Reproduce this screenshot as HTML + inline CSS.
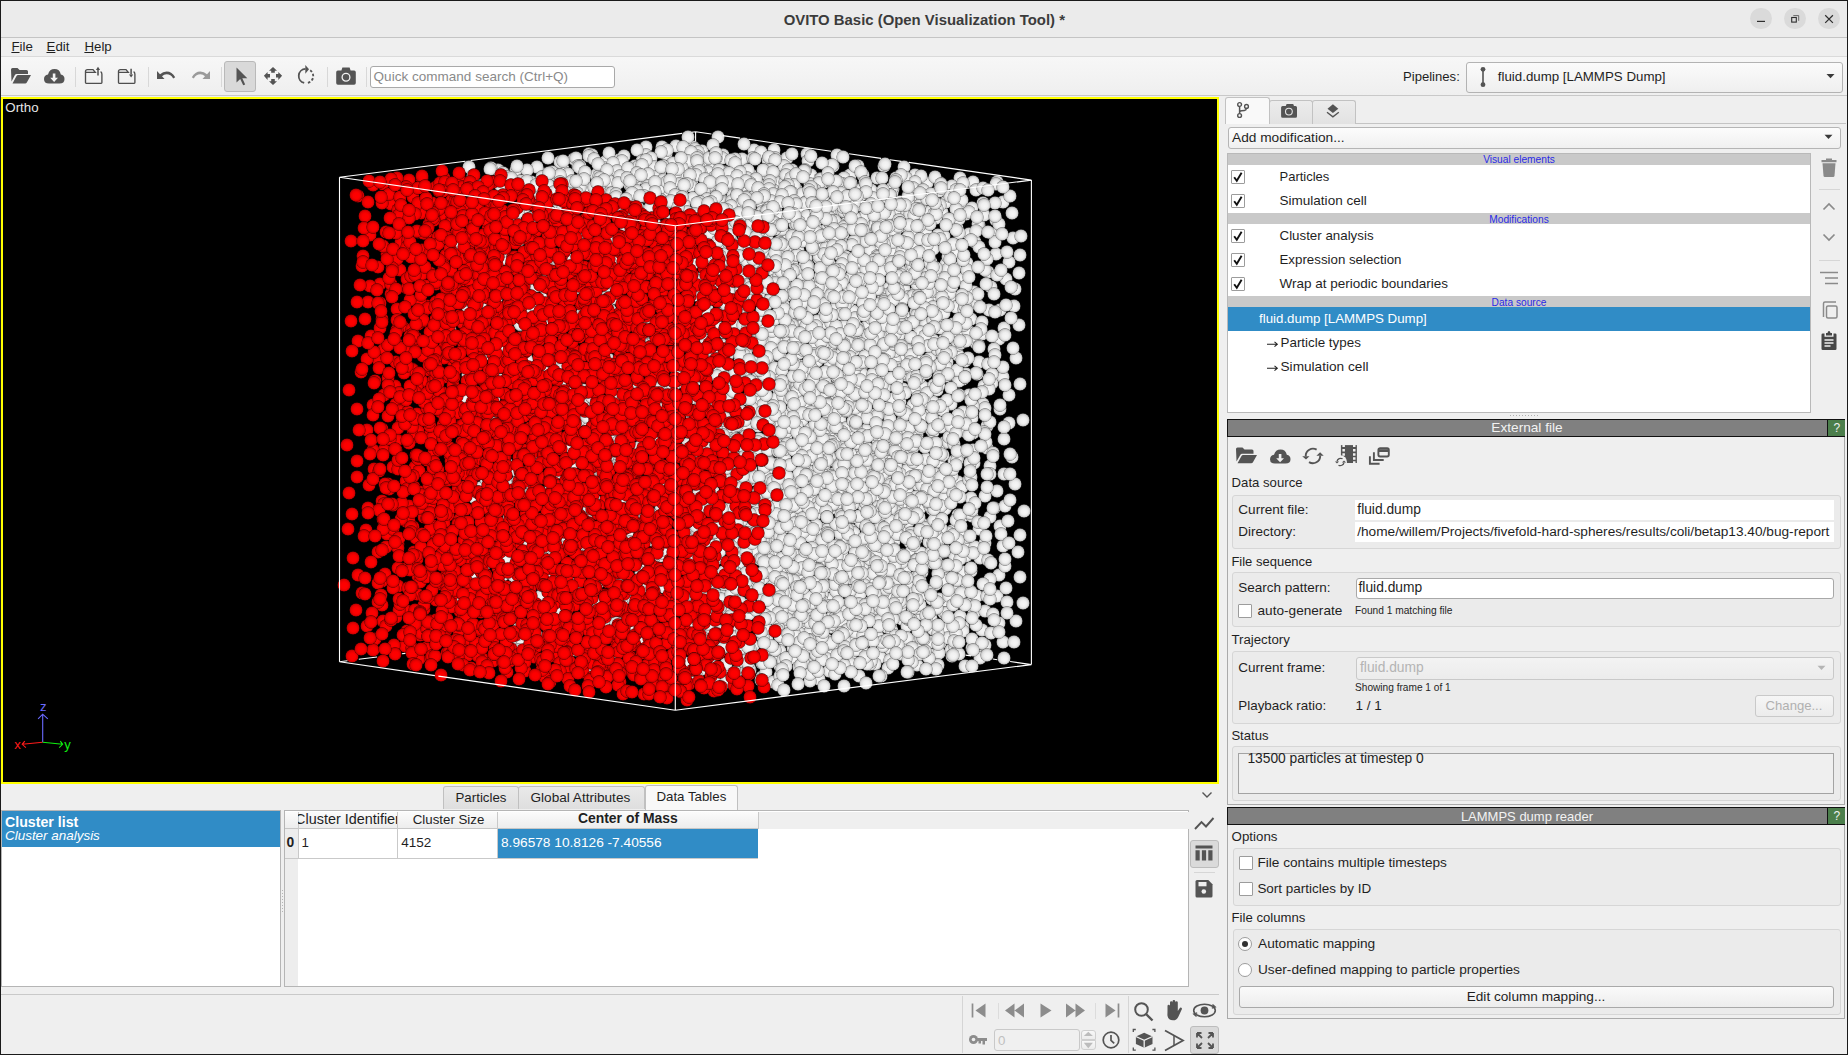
<!DOCTYPE html>
<html><head><meta charset="utf-8"><title>OVITO</title><style>*{margin:0;padding:0;box-sizing:border-box}
html,body{width:1848px;height:1055px;overflow:hidden}
body{position:relative;background:#efefef;font-family:"Liberation Sans",sans-serif;font-size:13px;color:#1f1f1f}
.a{position:absolute}
.t{position:absolute;white-space:nowrap}
.pv circle{r:6.65px}
.pv circle.w{fill:url(#gw)}
</style></head><body>
<div class="a" style="left:1px;top:97px;width:1218px;height:687px;background:#000;border:2px solid #ffff00"></div>
<svg class="a pv" style="left:0;top:0" width="1848" height="1055"><defs><radialGradient id="gr" cx="0.5" cy="0.5" r="0.5" fx="0.56" fy="0.6"><stop offset="0" stop-color="#ff0000"/><stop offset="0.45" stop-color="#fc0000"/><stop offset="0.72" stop-color="#e80000"/><stop offset="0.88" stop-color="#c80000"/><stop offset="0.95" stop-color="#9a0000"/><stop offset="1" stop-color="#3c0000"/></radialGradient><radialGradient id="gw" cx="0.5" cy="0.5" r="0.5" fx="0.56" fy="0.6"><stop offset="0" stop-color="#f6f6f6"/><stop offset="0.45" stop-color="#f0f0f0"/><stop offset="0.72" stop-color="#e0e0e0"/><stop offset="0.88" stop-color="#c6c6c6"/><stop offset="0.95" stop-color="#a0a0a0"/><stop offset="1" stop-color="#585858"/></radialGradient><clipPath id="vc"><rect x="3" y="99" width="1214" height="683"/></clipPath></defs><g clip-path="url(#vc)"><g fill="url(#gr)"><circle class="w" cx="693" cy="147" r="6.65"/><circle class="w" cx="702" cy="151" r="6.65"/><circle class="w" cx="718" cy="137" r="6.65"/><circle class="w" cx="666" cy="154" r="6.65"/><circle class="w" cx="688" cy="137" r="6.65"/><circle class="w" cx="646" cy="147" r="6.65"/><circle class="w" cx="723" cy="155" r="6.65"/><circle class="w" cx="695" cy="149" r="6.65"/><circle class="w" cx="742" cy="160" r="6.65"/><circle class="w" cx="713" cy="145" r="6.65"/><circle class="w" cx="725" cy="172" r="6.65"/><circle class="w" cx="676" cy="146" r="6.65"/><circle class="w" cx="707" cy="165" r="6.65"/><circle class="w" cx="754" cy="150" r="6.65"/><circle class="w" cx="646" cy="155" r="6.65"/><circle class="w" cx="630" cy="185" r="6.65"/><circle class="w" cx="698" cy="152" r="6.65"/><circle class="w" cx="722" cy="158" r="6.65"/><circle class="w" cx="662" cy="147" r="6.65"/><circle class="w" cx="744" cy="144" r="6.65"/><circle class="w" cx="637" cy="150" r="6.65"/><circle class="w" cx="683" cy="147" r="6.65"/><circle class="w" cx="619" cy="160" r="6.65"/><circle class="w" cx="761" cy="152" r="6.65"/><circle class="w" cx="697" cy="156" r="6.65"/><circle class="w" cx="742" cy="159" r="6.65"/><circle class="w" cx="712" cy="167" r="6.65"/><circle class="w" cx="691" cy="172" r="6.65"/><circle class="w" cx="667" cy="150" r="6.65"/><circle class="w" cx="764" cy="173" r="6.65"/><circle class="w" cx="605" cy="162" r="6.65"/><circle class="w" cx="624" cy="156" r="6.65"/><circle class="w" cx="589" cy="154" r="6.65"/><circle class="w" cx="716" cy="158" r="6.65"/><circle class="w" cx="642" cy="161" r="6.65"/><circle class="w" cx="825" cy="471" r="6.65"/><circle class="w" cx="768" cy="160" r="6.65"/><circle class="w" cx="691" cy="152" r="6.65"/><circle class="w" cx="699" cy="168" r="6.65"/><circle class="w" cx="646" cy="180" r="6.65"/><circle class="w" cx="787" cy="158" r="6.65"/><circle class="w" cx="574" cy="159" r="6.65"/><circle class="w" cx="807" cy="154" r="6.65"/><circle class="w" cx="777" cy="176" r="6.65"/><circle class="w" cx="583" cy="176" r="6.65"/><circle class="w" cx="751" cy="175" r="6.65"/><circle class="w" cx="661" cy="152" r="6.65"/><circle class="w" cx="818" cy="488" r="6.65"/><circle class="w" cx="660" cy="171" r="6.65"/><circle class="w" cx="632" cy="188" r="6.65"/><circle class="w" cx="635" cy="166" r="6.65"/><circle class="w" cx="709" cy="158" r="6.65"/><circle class="w" cx="592" cy="155" r="6.65"/><circle class="w" cx="774" cy="150" r="6.65"/><circle class="w" cx="521" cy="642" r="6.65"/><circle class="w" cx="688" cy="161" r="6.65"/><circle class="w" cx="784" cy="166" r="6.65"/><circle class="w" cx="692" cy="180" r="6.65"/><circle class="w" cx="764" cy="170" r="6.65"/><circle class="w" cx="609" cy="153" r="6.65"/><circle class="w" cx="863" cy="568" r="6.65"/><circle class="w" cx="651" cy="158" r="6.65"/><circle class="w" cx="616" cy="437" r="6.65"/><circle class="w" cx="576" cy="158" r="6.65"/><circle class="w" cx="596" cy="175" r="6.65"/><circle class="w" cx="753" cy="158" r="6.65"/><circle class="w" cx="824" cy="182" r="6.65"/><circle class="w" cx="587" cy="551" r="6.65"/><circle class="w" cx="716" cy="153" r="6.65"/><circle class="w" cx="808" cy="161" r="6.65"/><circle class="w" cx="833" cy="166" r="6.65"/><circle class="w" cx="708" cy="172" r="6.65"/><circle class="w" cx="502" cy="576" r="6.65"/><circle class="w" cx="543" cy="174" r="6.65"/><circle class="w" cx="563" cy="169" r="6.65"/><circle class="w" cx="511" cy="639" r="6.65"/><circle class="w" cx="775" cy="158" r="6.65"/><circle class="w" cx="638" cy="167" r="6.65"/><circle class="w" cx="830" cy="586" r="6.65"/><circle class="w" cx="697" cy="158" r="6.65"/><circle class="w" cx="673" cy="163" r="6.65"/><circle class="w" cx="711" cy="187" r="6.65"/><circle class="w" cx="725" cy="173" r="6.65"/><circle class="w" cx="521" cy="325" r="6.65"/><circle class="w" cx="792" cy="154" r="6.65"/><circle class="w" cx="589" cy="156" r="6.65"/><circle class="w" cx="900" cy="608" r="6.65"/><circle class="w" cx="604" cy="168" r="6.65"/><circle class="w" cx="548" cy="158" r="6.65"/><circle class="w" cx="549" cy="547" r="6.65"/><circle class="w" cx="837" cy="155" r="6.65"/><circle class="w" cx="654" cy="167" r="6.65"/><circle class="w" cx="755" cy="159" r="6.65"/><circle class="w" cx="811" cy="156" r="6.65"/><circle class="w" cx="811" cy="175" r="6.65"/><circle class="w" cx="501" cy="347" r="6.65"/><circle class="w" cx="822" cy="473" r="6.65"/><circle class="w" cx="611" cy="283" r="6.65"/><circle class="w" cx="792" cy="170" r="6.65"/><circle class="w" cx="701" cy="173" r="6.65"/><circle class="w" cx="846" cy="467" r="6.65"/><circle class="w" cx="592" cy="477" r="6.65"/><circle class="w" cx="779" cy="183" r="6.65"/><circle class="w" cx="682" cy="168" r="6.65"/><circle class="w" cx="735" cy="159" r="6.65"/><circle class="w" cx="859" cy="190" r="6.65"/><circle class="w" cx="570" cy="187" r="6.65"/><circle class="w" cx="560" cy="162" r="6.65"/><circle class="w" cx="796" cy="189" r="6.65"/><circle class="w" cx="769" cy="157" r="6.65"/><circle class="w" cx="480" cy="488" r="6.65"/><circle class="w" cx="715" cy="158" r="6.65"/><circle class="w" cx="875" cy="568" r="6.65"/><circle class="w" cx="850" cy="175" r="6.65"/><circle class="w" cx="646" cy="160" r="6.65"/><circle class="w" cx="903" cy="555" r="6.65"/><circle class="w" cx="456" cy="596" r="6.65"/><circle class="w" cx="843" cy="157" r="6.65"/><circle class="w" cx="622" cy="161" r="6.65"/><circle class="w" cx="656" cy="177" r="6.65"/><circle class="w" cx="768" cy="175" r="6.65"/><circle class="w" cx="537" cy="167" r="6.65"/><circle class="w" cx="580" cy="166" r="6.65"/><circle class="w" cx="635" cy="181" r="6.65"/><circle class="w" cx="835" cy="473" r="6.65"/><circle class="w" cx="516" cy="170" r="6.65"/><circle class="w" cx="513" cy="485" r="6.65"/><circle class="w" cx="559" cy="203" r="6.65"/><circle class="w" cx="788" cy="170" r="6.65"/><circle class="w" cx="886" cy="459" r="6.65"/><circle class="w" cx="874" cy="530" r="6.65"/><circle class="w" cx="810" cy="184" r="6.65"/><circle class="w" cx="870" cy="451" r="6.65"/><circle class="w" cx="921" cy="614" r="6.65"/><circle class="w" cx="484" cy="565" r="6.65"/><circle class="w" cx="548" cy="273" r="6.65"/><circle cx="441" cy="584" r="6.65"/><circle class="w" cx="834" cy="186" r="6.65"/><circle class="w" cx="745" cy="186" r="6.65"/><circle class="w" cx="681" cy="158" r="6.65"/><circle class="w" cx="863" cy="175" r="6.65"/><circle class="w" cx="910" cy="542" r="6.65"/><circle class="w" cx="832" cy="165" r="6.65"/><circle class="w" cx="920" cy="580" r="6.65"/><circle class="w" cx="775" cy="160" r="6.65"/><circle class="w" cx="531" cy="182" r="6.65"/><circle class="w" cx="498" cy="170" r="6.65"/><circle class="w" cx="811" cy="559" r="6.65"/><circle class="w" cx="668" cy="194" r="6.65"/><circle class="w" cx="608" cy="463" r="6.65"/><circle class="w" cx="594" cy="159" r="6.65"/><circle cx="448" cy="515" r="6.65"/><circle class="w" cx="805" cy="170" r="6.65"/><circle class="w" cx="563" cy="161" r="6.65"/><circle class="w" cx="468" cy="375" r="6.65"/><circle class="w" cx="613" cy="163" r="6.65"/><circle class="w" cx="723" cy="201" r="6.65"/><circle class="w" cx="823" cy="297" r="6.65"/><circle cx="430" cy="621" r="6.65"/><circle class="w" cx="748" cy="170" r="6.65"/><circle class="w" cx="663" cy="166" r="6.65"/><circle class="w" cx="932" cy="599" r="6.65"/><circle class="w" cx="680" cy="177" r="6.65"/><circle class="w" cx="565" cy="543" r="6.65"/><circle class="w" cx="474" cy="575" r="6.65"/><circle class="w" cx="524" cy="208" r="6.65"/><circle class="w" cx="539" cy="197" r="6.65"/><circle class="w" cx="763" cy="186" r="6.65"/><circle cx="433" cy="526" r="6.65"/><circle class="w" cx="611" cy="190" r="6.65"/><circle class="w" cx="697" cy="161" r="6.65"/><circle class="w" cx="731" cy="160" r="6.65"/><circle class="w" cx="464" cy="397" r="6.65"/><circle class="w" cx="785" cy="182" r="6.65"/><circle class="w" cx="885" cy="519" r="6.65"/><circle class="w" cx="634" cy="178" r="6.65"/><circle class="w" cx="514" cy="576" r="6.65"/><circle class="w" cx="931" cy="618" r="6.65"/><circle class="w" cx="518" cy="481" r="6.65"/><circle class="w" cx="891" cy="628" r="6.65"/><circle cx="463" cy="645" r="6.65"/><circle class="w" cx="734" cy="188" r="6.65"/><circle class="w" cx="861" cy="369" r="6.65"/><circle class="w" cx="599" cy="176" r="6.65"/><circle class="w" cx="882" cy="454" r="6.65"/><circle class="w" cx="578" cy="166" r="6.65"/><circle class="w" cx="858" cy="166" r="6.65"/><circle cx="420" cy="635" r="6.65"/><circle class="w" cx="509" cy="518" r="6.65"/><circle class="w" cx="770" cy="170" r="6.65"/><circle class="w" cx="554" cy="555" r="6.65"/><circle class="w" cx="475" cy="498" r="6.65"/><circle class="w" cx="928" cy="562" r="6.65"/><circle class="w" cx="920" cy="508" r="6.65"/><circle class="w" cx="833" cy="435" r="6.65"/><circle cx="436" cy="583" r="6.65"/><circle class="w" cx="884" cy="166" r="6.65"/><circle class="w" cx="486" cy="354" r="6.65"/><circle class="w" cx="821" cy="183" r="6.65"/><circle class="w" cx="898" cy="214" r="6.65"/><circle class="w" cx="483" cy="185" r="6.65"/><circle class="w" cx="518" cy="634" r="6.65"/><circle class="w" cx="921" cy="630" r="6.65"/><circle cx="424" cy="609" r="6.65"/><circle class="w" cx="461" cy="244" r="6.65"/><circle class="w" cx="883" cy="299" r="6.65"/><circle class="w" cx="617" cy="171" r="6.65"/><circle class="w" cx="526" cy="495" r="6.65"/><circle cx="453" cy="361" r="6.65"/><circle class="w" cx="936" cy="497" r="6.65"/><circle class="w" cx="642" cy="165" r="6.65"/><circle class="w" cx="902" cy="602" r="6.65"/><circle class="w" cx="541" cy="596" r="6.65"/><circle class="w" cx="854" cy="546" r="6.65"/><circle cx="431" cy="514" r="6.65"/><circle class="w" cx="875" cy="534" r="6.65"/><circle cx="450" cy="455" r="6.65"/><circle class="w" cx="922" cy="595" r="6.65"/><circle class="w" cx="951" cy="650" r="6.65"/><circle class="w" cx="527" cy="170" r="6.65"/><circle class="w" cx="773" cy="190" r="6.65"/><circle class="w" cx="450" cy="330" r="6.65"/><circle class="w" cx="822" cy="163" r="6.65"/><circle class="w" cx="491" cy="168" r="6.65"/><circle cx="418" cy="576" r="6.65"/><circle cx="458" cy="523" r="6.65"/><circle class="w" cx="675" cy="175" r="6.65"/><circle class="w" cx="901" cy="358" r="6.65"/><circle cx="482" cy="573" r="6.65"/><circle cx="405" cy="646" r="6.65"/><circle class="w" cx="747" cy="197" r="6.65"/><circle class="w" cx="619" cy="460" r="6.65"/><circle class="w" cx="501" cy="186" r="6.65"/><circle class="w" cx="844" cy="178" r="6.65"/><circle class="w" cx="869" cy="603" r="6.65"/><circle class="w" cx="642" cy="339" r="6.65"/><circle class="w" cx="828" cy="599" r="6.65"/><circle cx="462" cy="442" r="6.65"/><circle cx="417" cy="559" r="6.65"/><circle class="w" cx="805" cy="171" r="6.65"/><circle class="w" cx="548" cy="324" r="6.65"/><circle class="w" cx="728" cy="354" r="6.65"/><circle cx="407" cy="611" r="6.65"/><circle class="w" cx="786" cy="175" r="6.65"/><circle class="w" cx="735" cy="163" r="6.65"/><circle class="w" cx="506" cy="559" r="6.65"/><circle cx="427" cy="437" r="6.65"/><circle class="w" cx="618" cy="442" r="6.65"/><circle class="w" cx="468" cy="311" r="6.65"/><circle class="w" cx="556" cy="175" r="6.65"/><circle class="w" cx="486" cy="479" r="6.65"/><circle class="w" cx="709" cy="185" r="6.65"/><circle class="w" cx="661" cy="167" r="6.65"/><circle class="w" cx="899" cy="227" r="6.65"/><circle class="w" cx="923" cy="387" r="6.65"/><circle cx="447" cy="588" r="6.65"/><circle class="w" cx="864" cy="363" r="6.65"/><circle class="w" cx="875" cy="497" r="6.65"/><circle cx="417" cy="594" r="6.65"/><circle cx="477" cy="591" r="6.65"/><circle cx="471" cy="561" r="6.65"/><circle class="w" cx="579" cy="167" r="6.65"/><circle class="w" cx="906" cy="375" r="6.65"/><circle class="w" cx="520" cy="324" r="6.65"/><circle class="w" cx="763" cy="170" r="6.65"/><circle class="w" cx="907" cy="531" r="6.65"/><circle class="w" cx="855" cy="166" r="6.65"/><circle class="w" cx="576" cy="288" r="6.65"/><circle cx="427" cy="460" r="6.65"/><circle class="w" cx="912" cy="641" r="6.65"/><circle class="w" cx="609" cy="181" r="6.65"/><circle class="w" cx="747" cy="178" r="6.65"/><circle cx="424" cy="620" r="6.65"/><circle class="w" cx="943" cy="552" r="6.65"/><circle class="w" cx="507" cy="464" r="6.65"/><circle class="w" cx="719" cy="170" r="6.65"/><circle class="w" cx="947" cy="506" r="6.65"/><circle cx="407" cy="631" r="6.65"/><circle cx="434" cy="398" r="6.65"/><circle cx="462" cy="425" r="6.65"/><circle class="w" cx="750" cy="346" r="6.65"/><circle class="w" cx="917" cy="325" r="6.65"/><circle cx="464" cy="458" r="6.65"/><circle cx="413" cy="527" r="6.65"/><circle class="w" cx="933" cy="432" r="6.65"/><circle class="w" cx="893" cy="189" r="6.65"/><circle cx="444" cy="377" r="6.65"/><circle cx="444" cy="358" r="6.65"/><circle class="w" cx="885" cy="164" r="6.65"/><circle cx="422" cy="381" r="6.65"/><circle class="w" cx="484" cy="185" r="6.65"/><circle class="w" cx="929" cy="542" r="6.65"/><circle class="w" cx="615" cy="298" r="6.65"/><circle class="w" cx="521" cy="181" r="6.65"/><circle cx="494" cy="619" r="6.65"/><circle class="w" cx="820" cy="179" r="6.65"/><circle cx="398" cy="586" r="6.65"/><circle class="w" cx="598" cy="164" r="6.65"/><circle class="w" cx="520" cy="494" r="6.65"/><circle class="w" cx="494" cy="398" r="6.65"/><circle class="w" cx="911" cy="552" r="6.65"/><circle class="w" cx="915" cy="293" r="6.65"/><circle class="w" cx="503" cy="173" r="6.65"/><circle class="w" cx="904" cy="167" r="6.65"/><circle class="w" cx="774" cy="541" r="6.65"/><circle cx="447" cy="570" r="6.65"/><circle class="w" cx="500" cy="380" r="6.65"/><circle class="w" cx="699" cy="171" r="6.65"/><circle cx="453" cy="340" r="6.65"/><circle class="w" cx="922" cy="524" r="6.65"/><circle cx="413" cy="430" r="6.65"/><circle cx="450" cy="281" r="6.65"/><circle cx="430" cy="504" r="6.65"/><circle class="w" cx="837" cy="209" r="6.65"/><circle cx="476" cy="513" r="6.65"/><circle class="w" cx="482" cy="302" r="6.65"/><circle class="w" cx="918" cy="359" r="6.65"/><circle cx="396" cy="617" r="6.65"/><circle class="w" cx="836" cy="591" r="6.65"/><circle cx="477" cy="492" r="6.65"/><circle class="w" cx="469" cy="167" r="6.65"/><circle cx="476" cy="442" r="6.65"/><circle class="w" cx="930" cy="415" r="6.65"/><circle class="w" cx="556" cy="360" r="6.65"/><circle class="w" cx="679" cy="184" r="6.65"/><circle cx="479" cy="412" r="6.65"/><circle class="w" cx="894" cy="541" r="6.65"/><circle cx="463" cy="323" r="6.65"/><circle class="w" cx="963" cy="627" r="6.65"/><circle class="w" cx="936" cy="609" r="6.65"/><circle cx="412" cy="648" r="6.65"/><circle class="w" cx="518" cy="650" r="6.65"/><circle cx="444" cy="178" r="6.65"/><circle cx="402" cy="569" r="6.65"/><circle class="w" cx="902" cy="619" r="6.65"/><circle class="w" cx="875" cy="610" r="6.65"/><circle class="w" cx="861" cy="522" r="6.65"/><circle class="w" cx="940" cy="352" r="6.65"/><circle class="w" cx="831" cy="476" r="6.65"/><circle class="w" cx="542" cy="177" r="6.65"/><circle class="w" cx="551" cy="213" r="6.65"/><circle class="w" cx="906" cy="450" r="6.65"/><circle class="w" cx="565" cy="192" r="6.65"/><circle class="w" cx="924" cy="220" r="6.65"/><circle class="w" cx="488" cy="351" r="6.65"/><circle class="w" cx="932" cy="509" r="6.65"/><circle class="w" cx="788" cy="184" r="6.65"/><circle cx="424" cy="605" r="6.65"/><circle class="w" cx="944" cy="443" r="6.65"/><circle cx="420" cy="582" r="6.65"/><circle class="w" cx="737" cy="187" r="6.65"/><circle class="w" cx="494" cy="423" r="6.65"/><circle cx="398" cy="544" r="6.65"/><circle class="w" cx="919" cy="378" r="6.65"/><circle class="w" cx="568" cy="174" r="6.65"/><circle cx="382" cy="581" r="6.65"/><circle class="w" cx="904" cy="345" r="6.65"/><circle cx="442" cy="554" r="6.65"/><circle class="w" cx="704" cy="191" r="6.65"/><circle class="w" cx="866" cy="228" r="6.65"/><circle class="w" cx="970" cy="591" r="6.65"/><circle cx="465" cy="474" r="6.65"/><circle cx="382" cy="605" r="6.65"/><circle class="w" cx="877" cy="178" r="6.65"/><circle cx="393" cy="505" r="6.65"/><circle class="w" cx="933" cy="563" r="6.65"/><circle cx="454" cy="593" r="6.65"/><circle class="w" cx="641" cy="642" r="6.65"/><circle class="w" cx="905" cy="570" r="6.65"/><circle class="w" cx="628" cy="168" r="6.65"/><circle cx="414" cy="487" r="6.65"/><circle class="w" cx="916" cy="539" r="6.65"/><circle class="w" cx="774" cy="345" r="6.65"/><circle class="w" cx="918" cy="485" r="6.65"/><circle class="w" cx="831" cy="627" r="6.65"/><circle cx="460" cy="611" r="6.65"/><circle class="w" cx="600" cy="193" r="6.65"/><circle class="w" cx="914" cy="504" r="6.65"/><circle class="w" cx="921" cy="642" r="6.65"/><circle class="w" cx="940" cy="643" r="6.65"/><circle class="w" cx="861" cy="172" r="6.65"/><circle class="w" cx="954" cy="461" r="6.65"/><circle class="w" cx="804" cy="171" r="6.65"/><circle cx="414" cy="552" r="6.65"/><circle cx="429" cy="370" r="6.65"/><circle class="w" cx="517" cy="166" r="6.65"/><circle cx="476" cy="460" r="6.65"/><circle cx="451" cy="461" r="6.65"/><circle class="w" cx="466" cy="300" r="6.65"/><circle cx="421" cy="633" r="6.65"/><circle class="w" cx="812" cy="614" r="6.65"/><circle cx="406" cy="521" r="6.65"/><circle class="w" cx="502" cy="259" r="6.65"/><circle class="w" cx="917" cy="435" r="6.65"/><circle class="w" cx="926" cy="324" r="6.65"/><circle class="w" cx="889" cy="288" r="6.65"/><circle class="w" cx="607" cy="170" r="6.65"/><circle class="w" cx="896" cy="178" r="6.65"/><circle class="w" cx="768" cy="460" r="6.65"/><circle class="w" cx="544" cy="287" r="6.65"/><circle class="w" cx="643" cy="517" r="6.65"/><circle class="w" cx="915" cy="175" r="6.65"/><circle class="w" cx="908" cy="522" r="6.65"/><circle class="w" cx="663" cy="180" r="6.65"/><circle cx="431" cy="567" r="6.65"/><circle class="w" cx="552" cy="573" r="6.65"/><circle class="w" cx="610" cy="454" r="6.65"/><circle cx="501" cy="614" r="6.65"/><circle class="w" cx="631" cy="532" r="6.65"/><circle cx="473" cy="336" r="6.65"/><circle class="w" cx="882" cy="217" r="6.65"/><circle class="w" cx="519" cy="628" r="6.65"/><circle cx="375" cy="639" r="6.65"/><circle class="w" cx="678" cy="169" r="6.65"/><circle class="w" cx="895" cy="360" r="6.65"/><circle class="w" cx="490" cy="169" r="6.65"/><circle class="w" cx="715" cy="177" r="6.65"/><circle cx="430" cy="273" r="6.65"/><circle cx="447" cy="653" r="6.65"/><circle cx="480" cy="570" r="6.65"/><circle cx="449" cy="375" r="6.65"/><circle cx="383" cy="621" r="6.65"/><circle cx="388" cy="484" r="6.65"/><circle class="w" cx="620" cy="395" r="6.65"/><circle class="w" cx="952" cy="531" r="6.65"/><circle class="w" cx="941" cy="277" r="6.65"/><circle cx="415" cy="467" r="6.65"/><circle class="w" cx="832" cy="181" r="6.65"/><circle cx="448" cy="577" r="6.65"/><circle cx="496" cy="580" r="6.65"/><circle class="w" cx="985" cy="653" r="6.65"/><circle class="w" cx="540" cy="188" r="6.65"/><circle class="w" cx="551" cy="487" r="6.65"/><circle class="w" cx="931" cy="262" r="6.65"/><circle cx="464" cy="282" r="6.65"/><circle class="w" cx="740" cy="172" r="6.65"/><circle class="w" cx="947" cy="362" r="6.65"/><circle class="w" cx="696" cy="175" r="6.65"/><circle class="w" cx="935" cy="295" r="6.65"/><circle class="w" cx="947" cy="605" r="6.65"/><circle cx="443" cy="393" r="6.65"/><circle cx="419" cy="659" r="6.65"/><circle cx="458" cy="489" r="6.65"/><circle cx="493" cy="554" r="6.65"/><circle cx="396" cy="404" r="6.65"/><circle cx="418" cy="431" r="6.65"/><circle class="w" cx="814" cy="285" r="6.65"/><circle cx="493" cy="402" r="6.65"/><circle cx="427" cy="306" r="6.65"/><circle class="w" cx="963" cy="516" r="6.65"/><circle cx="417" cy="387" r="6.65"/><circle class="w" cx="473" cy="176" r="6.65"/><circle class="w" cx="773" cy="172" r="6.65"/><circle class="w" cx="891" cy="437" r="6.65"/><circle class="w" cx="585" cy="172" r="6.65"/><circle class="w" cx="552" cy="172" r="6.65"/><circle class="w" cx="932" cy="523" r="6.65"/><circle class="w" cx="918" cy="608" r="6.65"/><circle class="w" cx="922" cy="276" r="6.65"/><circle class="w" cx="847" cy="215" r="6.65"/><circle cx="460" cy="560" r="6.65"/><circle cx="433" cy="498" r="6.65"/><circle cx="410" cy="570" r="6.65"/><circle cx="424" cy="517" r="6.65"/><circle class="w" cx="825" cy="323" r="6.65"/><circle class="w" cx="608" cy="295" r="6.65"/><circle class="w" cx="963" cy="631" r="6.65"/><circle class="w" cx="974" cy="613" r="6.65"/><circle class="w" cx="719" cy="195" r="6.65"/><circle class="w" cx="560" cy="547" r="6.65"/><circle cx="409" cy="506" r="6.65"/><circle class="w" cx="898" cy="534" r="6.65"/><circle cx="436" cy="357" r="6.65"/><circle class="w" cx="904" cy="284" r="6.65"/><circle class="w" cx="851" cy="183" r="6.65"/><circle class="w" cx="923" cy="554" r="6.65"/><circle cx="402" cy="422" r="6.65"/><circle class="w" cx="508" cy="177" r="6.65"/><circle cx="387" cy="534" r="6.65"/><circle cx="415" cy="343" r="6.65"/><circle class="w" cx="833" cy="615" r="6.65"/><circle class="w" cx="958" cy="482" r="6.65"/><circle class="w" cx="532" cy="485" r="6.65"/><circle cx="511" cy="649" r="6.65"/><circle class="w" cx="955" cy="647" r="6.65"/><circle cx="457" cy="232" r="6.65"/><circle class="w" cx="648" cy="174" r="6.65"/><circle class="w" cx="549" cy="265" r="6.65"/><circle class="w" cx="931" cy="429" r="6.65"/><circle class="w" cx="612" cy="193" r="6.65"/><circle class="w" cx="963" cy="572" r="6.65"/><circle class="w" cx="946" cy="551" r="6.65"/><circle cx="367" cy="626" r="6.65"/><circle class="w" cx="832" cy="508" r="6.65"/><circle class="w" cx="791" cy="178" r="6.65"/><circle class="w" cx="653" cy="336" r="6.65"/><circle cx="484" cy="349" r="6.65"/><circle class="w" cx="823" cy="560" r="6.65"/><circle class="w" cx="875" cy="608" r="6.65"/><circle cx="445" cy="546" r="6.65"/><circle cx="415" cy="610" r="6.65"/><circle class="w" cx="965" cy="546" r="6.65"/><circle class="w" cx="931" cy="642" r="6.65"/><circle class="w" cx="858" cy="340" r="6.65"/><circle cx="408" cy="588" r="6.65"/><circle cx="412" cy="369" r="6.65"/><circle class="w" cx="756" cy="179" r="6.65"/><circle class="w" cx="620" cy="176" r="6.65"/><circle cx="395" cy="386" r="6.65"/><circle class="w" cx="903" cy="506" r="6.65"/><circle cx="461" cy="430" r="6.65"/><circle class="w" cx="868" cy="549" r="6.65"/><circle cx="406" cy="481" r="6.65"/><circle cx="382" cy="501" r="6.65"/><circle class="w" cx="943" cy="570" r="6.65"/><circle cx="460" cy="622" r="6.65"/><circle class="w" cx="916" cy="317" r="6.65"/><circle cx="417" cy="414" r="6.65"/><circle class="w" cx="907" cy="643" r="6.65"/><circle class="w" cx="786" cy="436" r="6.65"/><circle class="w" cx="849" cy="578" r="6.65"/><circle class="w" cx="900" cy="402" r="6.65"/><circle class="w" cx="980" cy="558" r="6.65"/><circle cx="426" cy="577" r="6.65"/><circle cx="378" cy="602" r="6.65"/><circle class="w" cx="906" cy="178" r="6.65"/><circle cx="418" cy="324" r="6.65"/><circle cx="394" cy="645" r="6.65"/><circle class="w" cx="818" cy="243" r="6.65"/><circle class="w" cx="886" cy="295" r="6.65"/><circle cx="450" cy="448" r="6.65"/><circle cx="469" cy="326" r="6.65"/><circle class="w" cx="527" cy="546" r="6.65"/><circle class="w" cx="793" cy="388" r="6.65"/><circle cx="464" cy="346" r="6.65"/><circle class="w" cx="957" cy="343" r="6.65"/><circle class="w" cx="911" cy="197" r="6.65"/><circle class="w" cx="982" cy="630" r="6.65"/><circle class="w" cx="538" cy="637" r="6.65"/><circle class="w" cx="852" cy="539" r="6.65"/><circle cx="373" cy="650" r="6.65"/><circle class="w" cx="516" cy="470" r="6.65"/><circle cx="397" cy="440" r="6.65"/><circle cx="434" cy="380" r="6.65"/><circle cx="427" cy="629" r="6.65"/><circle class="w" cx="882" cy="178" r="6.65"/><circle cx="468" cy="606" r="6.65"/><circle class="w" cx="972" cy="648" r="6.65"/><circle cx="427" cy="552" r="6.65"/><circle cx="393" cy="467" r="6.65"/><circle class="w" cx="887" cy="627" r="6.65"/><circle class="w" cx="937" cy="390" r="6.65"/><circle class="w" cx="930" cy="506" r="6.65"/><circle class="w" cx="973" cy="433" r="6.65"/><circle cx="498" cy="522" r="6.65"/><circle class="w" cx="917" cy="536" r="6.65"/><circle class="w" cx="892" cy="193" r="6.65"/><circle cx="442" cy="565" r="6.65"/><circle class="w" cx="945" cy="629" r="6.65"/><circle class="w" cx="600" cy="178" r="6.65"/><circle cx="422" cy="178" r="6.65"/><circle class="w" cx="977" cy="596" r="6.65"/><circle class="w" cx="936" cy="409" r="6.65"/><circle cx="426" cy="648" r="6.65"/><circle class="w" cx="927" cy="183" r="6.65"/><circle cx="378" cy="552" r="6.65"/><circle class="w" cx="950" cy="297" r="6.65"/><circle class="w" cx="831" cy="346" r="6.65"/><circle class="w" cx="799" cy="211" r="6.65"/><circle class="w" cx="958" cy="457" r="6.65"/><circle class="w" cx="861" cy="195" r="6.65"/><circle class="w" cx="782" cy="193" r="6.65"/><circle cx="433" cy="437" r="6.65"/><circle cx="435" cy="247" r="6.65"/><circle cx="378" cy="583" r="6.65"/><circle class="w" cx="660" cy="188" r="6.65"/><circle class="w" cx="515" cy="220" r="6.65"/><circle class="w" cx="835" cy="375" r="6.65"/><circle cx="420" cy="492" r="6.65"/><circle cx="467" cy="299" r="6.65"/><circle cx="409" cy="521" r="6.65"/><circle class="w" cx="542" cy="585" r="6.65"/><circle cx="445" cy="217" r="6.65"/><circle class="w" cx="766" cy="457" r="6.65"/><circle cx="396" cy="343" r="6.65"/><circle class="w" cx="792" cy="611" r="6.65"/><circle cx="442" cy="484" r="6.65"/><circle class="w" cx="672" cy="169" r="6.65"/><circle class="w" cx="531" cy="306" r="6.65"/><circle class="w" cx="840" cy="225" r="6.65"/><circle class="w" cx="902" cy="422" r="6.65"/><circle cx="453" cy="385" r="6.65"/><circle cx="398" cy="548" r="6.65"/><circle class="w" cx="835" cy="461" r="6.65"/><circle cx="485" cy="382" r="6.65"/><circle cx="436" cy="319" r="6.65"/><circle class="w" cx="821" cy="388" r="6.65"/><circle class="w" cx="541" cy="556" r="6.65"/><circle class="w" cx="821" cy="179" r="6.65"/><circle class="w" cx="957" cy="591" r="6.65"/><circle cx="424" cy="597" r="6.65"/><circle cx="419" cy="265" r="6.65"/><circle class="w" cx="888" cy="465" r="6.65"/><circle class="w" cx="949" cy="533" r="6.65"/><circle cx="416" cy="538" r="6.65"/><circle cx="396" cy="362" r="6.65"/><circle class="w" cx="910" cy="269" r="6.65"/><circle class="w" cx="974" cy="463" r="6.65"/><circle class="w" cx="957" cy="377" r="6.65"/><circle cx="383" cy="519" r="6.65"/><circle class="w" cx="572" cy="181" r="6.65"/><circle cx="460" cy="180" r="6.65"/><circle class="w" cx="933" cy="543" r="6.65"/><circle cx="384" cy="450" r="6.65"/><circle class="w" cx="997" cy="596" r="6.65"/><circle class="w" cx="855" cy="399" r="6.65"/><circle cx="352" cy="656" r="6.65"/><circle cx="414" cy="437" r="6.65"/><circle cx="385" cy="484" r="6.65"/><circle cx="358" cy="575" r="6.65"/><circle class="w" cx="567" cy="259" r="6.65"/><circle class="w" cx="765" cy="654" r="6.65"/><circle class="w" cx="496" cy="300" r="6.65"/><circle cx="483" cy="659" r="6.65"/><circle class="w" cx="836" cy="400" r="6.65"/><circle cx="399" cy="610" r="6.65"/><circle cx="398" cy="568" r="6.65"/><circle class="w" cx="901" cy="521" r="6.65"/><circle class="w" cx="907" cy="626" r="6.65"/><circle class="w" cx="527" cy="181" r="6.65"/><circle class="w" cx="899" cy="443" r="6.65"/><circle cx="402" cy="326" r="6.65"/><circle class="w" cx="548" cy="185" r="6.65"/><circle class="w" cx="930" cy="358" r="6.65"/><circle class="w" cx="689" cy="179" r="6.65"/><circle class="w" cx="661" cy="386" r="6.65"/><circle cx="456" cy="585" r="6.65"/><circle cx="419" cy="471" r="6.65"/><circle class="w" cx="985" cy="611" r="6.65"/><circle class="w" cx="953" cy="324" r="6.65"/><circle class="w" cx="972" cy="516" r="6.65"/><circle class="w" cx="801" cy="626" r="6.65"/><circle class="w" cx="634" cy="177" r="6.65"/><circle class="w" cx="740" cy="426" r="6.65"/><circle cx="386" cy="626" r="6.65"/><circle cx="471" cy="461" r="6.65"/><circle class="w" cx="677" cy="193" r="6.65"/><circle cx="368" cy="508" r="6.65"/><circle cx="494" cy="407" r="6.65"/><circle class="w" cx="915" cy="590" r="6.65"/><circle class="w" cx="644" cy="566" r="6.65"/><circle class="w" cx="660" cy="556" r="6.65"/><circle class="w" cx="895" cy="351" r="6.65"/><circle class="w" cx="854" cy="638" r="6.65"/><circle class="w" cx="842" cy="555" r="6.65"/><circle class="w" cx="913" cy="608" r="6.65"/><circle class="w" cx="892" cy="279" r="6.65"/><circle class="w" cx="927" cy="622" r="6.65"/><circle class="w" cx="586" cy="544" r="6.65"/><circle cx="452" cy="604" r="6.65"/><circle cx="459" cy="407" r="6.65"/><circle class="w" cx="999" cy="575" r="6.65"/><circle class="w" cx="624" cy="599" r="6.65"/><circle cx="382" cy="429" r="6.65"/><circle cx="366" cy="530" r="6.65"/><circle class="w" cx="833" cy="645" r="6.65"/><circle cx="445" cy="234" r="6.65"/><circle cx="372" cy="613" r="6.65"/><circle cx="400" cy="411" r="6.65"/><circle class="w" cx="985" cy="645" r="6.65"/><circle cx="446" cy="630" r="6.65"/><circle class="w" cx="941" cy="427" r="6.65"/><circle class="w" cx="770" cy="181" r="6.65"/><circle cx="516" cy="563" r="6.65"/><circle cx="468" cy="571" r="6.65"/><circle class="w" cx="719" cy="199" r="6.65"/><circle cx="497" cy="342" r="6.65"/><circle class="w" cx="967" cy="537" r="6.65"/><circle class="w" cx="987" cy="426" r="6.65"/><circle class="w" cx="920" cy="428" r="6.65"/><circle cx="491" cy="603" r="6.65"/><circle class="w" cx="952" cy="656" r="6.65"/><circle cx="384" cy="395" r="6.65"/><circle class="w" cx="936" cy="561" r="6.65"/><circle class="w" cx="966" cy="556" r="6.65"/><circle class="w" cx="939" cy="599" r="6.65"/><circle cx="479" cy="351" r="6.65"/><circle cx="436" cy="187" r="6.65"/><circle class="w" cx="887" cy="595" r="6.65"/><circle cx="436" cy="302" r="6.65"/><circle cx="508" cy="648" r="6.65"/><circle cx="470" cy="282" r="6.65"/><circle cx="418" cy="569" r="6.65"/><circle cx="484" cy="325" r="6.65"/><circle class="w" cx="729" cy="173" r="6.65"/><circle class="w" cx="860" cy="594" r="6.65"/><circle class="w" cx="987" cy="448" r="6.65"/><circle class="w" cx="559" cy="608" r="6.65"/><circle class="w" cx="999" cy="623" r="6.65"/><circle class="w" cx="935" cy="291" r="6.65"/><circle class="w" cx="824" cy="231" r="6.65"/><circle class="w" cx="985" cy="543" r="6.65"/><circle cx="353" cy="558" r="6.65"/><circle class="w" cx="943" cy="580" r="6.65"/><circle class="w" cx="948" cy="350" r="6.65"/><circle class="w" cx="853" cy="517" r="6.65"/><circle cx="415" cy="624" r="6.65"/><circle cx="413" cy="370" r="6.65"/><circle cx="379" cy="361" r="6.65"/><circle cx="415" cy="392" r="6.65"/><circle class="w" cx="933" cy="483" r="6.65"/><circle class="w" cx="750" cy="183" r="6.65"/><circle cx="412" cy="653" r="6.65"/><circle cx="499" cy="440" r="6.65"/><circle class="w" cx="873" cy="543" r="6.65"/><circle cx="388" cy="378" r="6.65"/><circle cx="481" cy="495" r="6.65"/><circle cx="463" cy="425" r="6.65"/><circle cx="505" cy="457" r="6.65"/><circle class="w" cx="630" cy="542" r="6.65"/><circle class="w" cx="884" cy="559" r="6.65"/><circle class="w" cx="925" cy="528" r="6.65"/><circle cx="436" cy="284" r="6.65"/><circle class="w" cx="933" cy="340" r="6.65"/><circle cx="468" cy="652" r="6.65"/><circle cx="434" cy="452" r="6.65"/><circle class="w" cx="878" cy="507" r="6.65"/><circle cx="486" cy="575" r="6.65"/><circle cx="409" cy="180" r="6.65"/><circle cx="362" cy="593" r="6.65"/><circle cx="416" cy="455" r="6.65"/><circle class="w" cx="796" cy="174" r="6.65"/><circle class="w" cx="921" cy="638" r="6.65"/><circle class="w" cx="836" cy="626" r="6.65"/><circle cx="384" cy="504" r="6.65"/><circle class="w" cx="780" cy="463" r="6.65"/><circle class="w" cx="945" cy="497" r="6.65"/><circle class="w" cx="705" cy="179" r="6.65"/><circle cx="344" cy="585" r="6.65"/><circle cx="438" cy="470" r="6.65"/><circle class="w" cx="586" cy="189" r="6.65"/><circle cx="429" cy="224" r="6.65"/><circle class="w" cx="956" cy="307" r="6.65"/><circle class="w" cx="881" cy="526" r="6.65"/><circle class="w" cx="561" cy="369" r="6.65"/><circle class="w" cx="921" cy="553" r="6.65"/><circle cx="526" cy="513" r="6.65"/><circle cx="517" cy="542" r="6.65"/><circle cx="393" cy="529" r="6.65"/><circle class="w" cx="1000" cy="526" r="6.65"/><circle class="w" cx="886" cy="380" r="6.65"/><circle class="w" cx="872" cy="581" r="6.65"/><circle class="w" cx="897" cy="505" r="6.65"/><circle class="w" cx="885" cy="300" r="6.65"/><circle cx="490" cy="528" r="6.65"/><circle class="w" cx="868" cy="611" r="6.65"/><circle cx="493" cy="182" r="6.65"/><circle class="w" cx="838" cy="440" r="6.65"/><circle cx="422" cy="250" r="6.65"/><circle class="w" cx="976" cy="343" r="6.65"/><circle class="w" cx="693" cy="530" r="6.65"/><circle class="w" cx="710" cy="586" r="6.65"/><circle cx="446" cy="438" r="6.65"/><circle cx="429" cy="533" r="6.65"/><circle class="w" cx="922" cy="572" r="6.65"/><circle cx="419" cy="508" r="6.65"/><circle class="w" cx="948" cy="638" r="6.65"/><circle cx="397" cy="309" r="6.65"/><circle class="w" cx="971" cy="498" r="6.65"/><circle class="w" cx="904" cy="289" r="6.65"/><circle class="w" cx="892" cy="188" r="6.65"/><circle class="w" cx="948" cy="442" r="6.65"/><circle class="w" cx="888" cy="255" r="6.65"/><circle class="w" cx="541" cy="458" r="6.65"/><circle class="w" cx="965" cy="451" r="6.65"/><circle cx="381" cy="595" r="6.65"/><circle cx="442" cy="171" r="6.65"/><circle class="w" cx="1003" cy="642" r="6.65"/><circle cx="464" cy="616" r="6.65"/><circle class="w" cx="952" cy="476" r="6.65"/><circle cx="474" cy="175" r="6.65"/><circle cx="498" cy="216" r="6.65"/><circle cx="416" cy="338" r="6.65"/><circle cx="507" cy="419" r="6.65"/><circle class="w" cx="865" cy="182" r="6.65"/><circle class="w" cx="648" cy="186" r="6.65"/><circle cx="352" cy="514" r="6.65"/><circle class="w" cx="937" cy="322" r="6.65"/><circle class="w" cx="977" cy="304" r="6.65"/><circle class="w" cx="518" cy="212" r="6.65"/><circle class="w" cx="779" cy="656" r="6.65"/><circle cx="431" cy="658" r="6.65"/><circle cx="374" cy="469" r="6.65"/><circle class="w" cx="885" cy="478" r="6.65"/><circle class="w" cx="921" cy="176" r="6.65"/><circle cx="430" cy="426" r="6.65"/><circle cx="458" cy="473" r="6.65"/><circle cx="432" cy="369" r="6.65"/><circle class="w" cx="967" cy="586" r="6.65"/><circle cx="455" cy="358" r="6.65"/><circle cx="436" cy="600" r="6.65"/><circle class="w" cx="822" cy="594" r="6.65"/><circle class="w" cx="778" cy="426" r="6.65"/><circle class="w" cx="503" cy="251" r="6.65"/><circle cx="385" cy="574" r="6.65"/><circle class="w" cx="958" cy="515" r="6.65"/><circle class="w" cx="560" cy="175" r="6.65"/><circle class="w" cx="902" cy="562" r="6.65"/><circle cx="441" cy="412" r="6.65"/><circle cx="488" cy="290" r="6.65"/><circle class="w" cx="967" cy="604" r="6.65"/><circle cx="413" cy="197" r="6.65"/><circle cx="353" cy="628" r="6.65"/><circle class="w" cx="874" cy="225" r="6.65"/><circle cx="428" cy="636" r="6.65"/><circle cx="468" cy="444" r="6.65"/><circle cx="411" cy="527" r="6.65"/><circle cx="449" cy="652" r="6.65"/><circle class="w" cx="912" cy="450" r="6.65"/><circle class="w" cx="932" cy="655" r="6.65"/><circle cx="470" cy="592" r="6.65"/><circle class="w" cx="843" cy="184" r="6.65"/><circle cx="500" cy="552" r="6.65"/><circle class="w" cx="880" cy="657" r="6.65"/><circle class="w" cx="941" cy="404" r="6.65"/><circle class="w" cx="942" cy="212" r="6.65"/><circle class="w" cx="994" cy="508" r="6.65"/><circle class="w" cx="616" cy="618" r="6.65"/><circle class="w" cx="1003" cy="546" r="6.65"/><circle cx="513" cy="490" r="6.65"/><circle cx="403" cy="635" r="6.65"/><circle cx="407" cy="288" r="6.65"/><circle cx="373" cy="450" r="6.65"/><circle class="w" cx="987" cy="596" r="6.65"/><circle class="w" cx="959" cy="335" r="6.65"/><circle class="w" cx="972" cy="639" r="6.65"/><circle class="w" cx="518" cy="241" r="6.65"/><circle cx="412" cy="427" r="6.65"/><circle cx="421" cy="547" r="6.65"/><circle cx="380" cy="303" r="6.65"/><circle class="w" cx="731" cy="240" r="6.65"/><circle cx="521" cy="452" r="6.65"/><circle cx="519" cy="602" r="6.65"/><circle class="w" cx="762" cy="663" r="6.65"/><circle class="w" cx="809" cy="633" r="6.65"/><circle cx="395" cy="654" r="6.65"/><circle cx="421" cy="275" r="6.65"/><circle cx="423" cy="321" r="6.65"/><circle class="w" cx="964" cy="431" r="6.65"/><circle class="w" cx="924" cy="363" r="6.65"/><circle cx="436" cy="351" r="6.65"/><circle cx="371" cy="336" r="6.65"/><circle cx="365" cy="578" r="6.65"/><circle class="w" cx="944" cy="613" r="6.65"/><circle class="w" cx="527" cy="360" r="6.65"/><circle class="w" cx="913" cy="405" r="6.65"/><circle cx="397" cy="330" r="6.65"/><circle class="w" cx="955" cy="268" r="6.65"/><circle class="w" cx="544" cy="370" r="6.65"/><circle class="w" cx="933" cy="249" r="6.65"/><circle cx="386" cy="547" r="6.65"/><circle class="w" cx="990" cy="466" r="6.65"/><circle class="w" cx="828" cy="173" r="6.65"/><circle class="w" cx="911" cy="620" r="6.65"/><circle class="w" cx="576" cy="584" r="6.65"/><circle class="w" cx="566" cy="385" r="6.65"/><circle class="w" cx="800" cy="574" r="6.65"/><circle cx="361" cy="649" r="6.65"/><circle class="w" cx="984" cy="386" r="6.65"/><circle cx="367" cy="430" r="6.65"/><circle class="w" cx="821" cy="529" r="6.65"/><circle cx="402" cy="503" r="6.65"/><circle cx="400" cy="604" r="6.65"/><circle class="w" cx="979" cy="362" r="6.65"/><circle cx="444" cy="523" r="6.65"/><circle cx="481" cy="612" r="6.65"/><circle class="w" cx="821" cy="199" r="6.65"/><circle class="w" cx="939" cy="462" r="6.65"/><circle class="w" cx="888" cy="574" r="6.65"/><circle cx="420" cy="301" r="6.65"/><circle cx="390" cy="439" r="6.65"/><circle class="w" cx="525" cy="313" r="6.65"/><circle cx="472" cy="403" r="6.65"/><circle class="w" cx="908" cy="582" r="6.65"/><circle class="w" cx="762" cy="203" r="6.65"/><circle class="w" cx="536" cy="185" r="6.65"/><circle cx="373" cy="405" r="6.65"/><circle cx="356" cy="610" r="6.65"/><circle class="w" cx="667" cy="182" r="6.65"/><circle class="w" cx="845" cy="641" r="6.65"/><circle cx="467" cy="347" r="6.65"/><circle class="w" cx="840" cy="420" r="6.65"/><circle class="w" cx="963" cy="379" r="6.65"/><circle class="w" cx="960" cy="206" r="6.65"/><circle cx="432" cy="565" r="6.65"/><circle cx="420" cy="612" r="6.65"/><circle class="w" cx="682" cy="195" r="6.65"/><circle class="w" cx="907" cy="470" r="6.65"/><circle cx="371" cy="622" r="6.65"/><circle cx="384" cy="349" r="6.65"/><circle class="w" cx="933" cy="629" r="6.65"/><circle class="w" cx="576" cy="650" r="6.65"/><circle cx="391" cy="620" r="6.65"/><circle cx="348" cy="529" r="6.65"/><circle class="w" cx="955" cy="557" r="6.65"/><circle cx="459" cy="316" r="6.65"/><circle cx="462" cy="490" r="6.65"/><circle cx="484" cy="251" r="6.65"/><circle cx="388" cy="416" r="6.65"/><circle class="w" cx="901" cy="175" r="6.65"/><circle cx="367" cy="359" r="6.65"/><circle cx="438" cy="396" r="6.65"/><circle cx="436" cy="620" r="6.65"/><circle cx="421" cy="213" r="6.65"/><circle class="w" cx="941" cy="528" r="6.65"/><circle class="w" cx="940" cy="183" r="6.65"/><circle cx="451" cy="607" r="6.65"/><circle class="w" cx="511" cy="178" r="6.65"/><circle cx="498" cy="568" r="6.65"/><circle class="w" cx="645" cy="511" r="6.65"/><circle cx="472" cy="227" r="6.65"/><circle cx="389" cy="489" r="6.65"/><circle cx="418" cy="232" r="6.65"/><circle class="w" cx="980" cy="658" r="6.65"/><circle class="w" cx="907" cy="638" r="6.65"/><circle class="w" cx="868" cy="518" r="6.65"/><circle cx="375" cy="381" r="6.65"/><circle class="w" cx="991" cy="633" r="6.65"/><circle cx="457" cy="557" r="6.65"/><circle class="w" cx="899" cy="344" r="6.65"/><circle cx="493" cy="354" r="6.65"/><circle cx="369" cy="485" r="6.65"/><circle class="w" cx="953" cy="577" r="6.65"/><circle class="w" cx="922" cy="485" r="6.65"/><circle class="w" cx="971" cy="319" r="6.65"/><circle class="w" cx="884" cy="494" r="6.65"/><circle cx="422" cy="176" r="6.65"/><circle class="w" cx="938" cy="422" r="6.65"/><circle cx="469" cy="292" r="6.65"/><circle class="w" cx="733" cy="195" r="6.65"/><circle cx="400" cy="270" r="6.65"/><circle cx="393" cy="588" r="6.65"/><circle cx="357" cy="461" r="6.65"/><circle class="w" cx="588" cy="518" r="6.65"/><circle class="w" cx="600" cy="184" r="6.65"/><circle cx="493" cy="408" r="6.65"/><circle cx="400" cy="363" r="6.65"/><circle class="w" cx="821" cy="617" r="6.65"/><circle class="w" cx="975" cy="547" r="6.65"/><circle cx="391" cy="204" r="6.65"/><circle class="w" cx="950" cy="293" r="6.65"/><circle cx="380" cy="284" r="6.65"/><circle cx="459" cy="631" r="6.65"/><circle class="w" cx="855" cy="553" r="6.65"/><circle class="w" cx="1007" cy="602" r="6.65"/><circle class="w" cx="962" cy="533" r="6.65"/><circle class="w" cx="957" cy="652" r="6.65"/><circle class="w" cx="860" cy="367" r="6.65"/><circle class="w" cx="794" cy="185" r="6.65"/><circle class="w" cx="990" cy="422" r="6.65"/><circle cx="382" cy="319" r="6.65"/><circle class="w" cx="889" cy="449" r="6.65"/><circle class="w" cx="854" cy="350" r="6.65"/><circle cx="481" cy="631" r="6.65"/><circle class="w" cx="805" cy="286" r="6.65"/><circle class="w" cx="769" cy="185" r="6.65"/><circle class="w" cx="944" cy="340" r="6.65"/><circle class="w" cx="990" cy="579" r="6.65"/><circle cx="499" cy="536" r="6.65"/><circle class="w" cx="986" cy="442" r="6.65"/><circle class="w" cx="1004" cy="474" r="6.65"/><circle class="w" cx="851" cy="660" r="6.65"/><circle class="w" cx="737" cy="176" r="6.65"/><circle cx="523" cy="551" r="6.65"/><circle cx="429" cy="477" r="6.65"/><circle cx="490" cy="444" r="6.65"/><circle cx="516" cy="570" r="6.65"/><circle cx="457" cy="413" r="6.65"/><circle cx="531" cy="467" r="6.65"/><circle class="w" cx="718" cy="174" r="6.65"/><circle cx="383" cy="529" r="6.65"/><circle class="w" cx="910" cy="318" r="6.65"/><circle cx="430" cy="513" r="6.65"/><circle cx="421" cy="649" r="6.65"/><circle cx="474" cy="470" r="6.65"/><circle class="w" cx="993" cy="614" r="6.65"/><circle class="w" cx="917" cy="284" r="6.65"/><circle cx="455" cy="391" r="6.65"/><circle class="w" cx="960" cy="178" r="6.65"/><circle class="w" cx="1005" cy="566" r="6.65"/><circle cx="399" cy="393" r="6.65"/><circle class="w" cx="928" cy="502" r="6.65"/><circle cx="493" cy="372" r="6.65"/><circle cx="536" cy="647" r="6.65"/><circle class="w" cx="1016" cy="621" r="6.65"/><circle cx="379" cy="510" r="6.65"/><circle class="w" cx="982" cy="334" r="6.65"/><circle class="w" cx="773" cy="464" r="6.65"/><circle class="w" cx="903" cy="373" r="6.65"/><circle class="w" cx="547" cy="296" r="6.65"/><circle cx="409" cy="443" r="6.65"/><circle cx="459" cy="173" r="6.65"/><circle cx="447" cy="291" r="6.65"/><circle cx="435" cy="543" r="6.65"/><circle class="w" cx="878" cy="249" r="6.65"/><circle class="w" cx="825" cy="463" r="6.65"/><circle class="w" cx="554" cy="192" r="6.65"/><circle class="w" cx="580" cy="187" r="6.65"/><circle class="w" cx="970" cy="513" r="6.65"/><circle cx="452" cy="219" r="6.65"/><circle class="w" cx="630" cy="196" r="6.65"/><circle class="w" cx="983" cy="404" r="6.65"/><circle cx="468" cy="655" r="6.65"/><circle cx="505" cy="394" r="6.65"/><circle class="w" cx="960" cy="616" r="6.65"/><circle class="w" cx="549" cy="173" r="6.65"/><circle class="w" cx="963" cy="412" r="6.65"/><circle cx="436" cy="378" r="6.65"/><circle class="w" cx="913" cy="266" r="6.65"/><circle cx="386" cy="232" r="6.65"/><circle class="w" cx="985" cy="496" r="6.65"/><circle class="w" cx="956" cy="633" r="6.65"/><circle class="w" cx="896" cy="512" r="6.65"/><circle cx="402" cy="571" r="6.65"/><circle class="w" cx="531" cy="218" r="6.65"/><circle cx="479" cy="492" r="6.65"/><circle class="w" cx="885" cy="527" r="6.65"/><circle class="w" cx="962" cy="487" r="6.65"/><circle cx="467" cy="204" r="6.65"/><circle cx="491" cy="599" r="6.65"/><circle cx="371" cy="562" r="6.65"/><circle cx="412" cy="329" r="6.65"/><circle class="w" cx="945" cy="509" r="6.65"/><circle class="w" cx="944" cy="313" r="6.65"/><circle class="w" cx="931" cy="590" r="6.65"/><circle cx="357" cy="409" r="6.65"/><circle class="w" cx="618" cy="183" r="6.65"/><circle cx="401" cy="519" r="6.65"/><circle cx="364" cy="536" r="6.65"/><circle cx="349" cy="493" r="6.65"/><circle class="w" cx="887" cy="413" r="6.65"/><circle class="w" cx="1004" cy="658" r="6.65"/><circle cx="460" cy="519" r="6.65"/><circle cx="387" cy="254" r="6.65"/><circle class="w" cx="1014" cy="642" r="6.65"/><circle cx="443" cy="425" r="6.65"/><circle cx="486" cy="389" r="6.65"/><circle cx="488" cy="185" r="6.65"/><circle class="w" cx="929" cy="212" r="6.65"/><circle cx="449" cy="327" r="6.65"/><circle cx="511" cy="617" r="6.65"/><circle cx="418" cy="459" r="6.65"/><circle cx="554" cy="570" r="6.65"/><circle class="w" cx="911" cy="533" r="6.65"/><circle class="w" cx="961" cy="593" r="6.65"/><circle cx="407" cy="489" r="6.65"/><circle cx="455" cy="590" r="6.65"/><circle class="w" cx="555" cy="474" r="6.65"/><circle cx="365" cy="594" r="6.65"/><circle cx="385" cy="649" r="6.65"/><circle class="w" cx="637" cy="173" r="6.65"/><circle cx="370" cy="638" r="6.65"/><circle cx="398" cy="469" r="6.65"/><circle class="w" cx="953" cy="469" r="6.65"/><circle class="w" cx="586" cy="420" r="6.65"/><circle cx="379" cy="471" r="6.65"/><circle cx="398" cy="428" r="6.65"/><circle class="w" cx="890" cy="610" r="6.65"/><circle class="w" cx="1001" cy="534" r="6.65"/><circle class="w" cx="927" cy="300" r="6.65"/><circle class="w" cx="999" cy="339" r="6.65"/><circle cx="401" cy="242" r="6.65"/><circle cx="428" cy="597" r="6.65"/><circle class="w" cx="819" cy="183" r="6.65"/><circle cx="427" cy="408" r="6.65"/><circle class="w" cx="842" cy="492" r="6.65"/><circle class="w" cx="1005" cy="506" r="6.65"/><circle class="w" cx="988" cy="272" r="6.65"/><circle class="w" cx="891" cy="650" r="6.65"/><circle class="w" cx="886" cy="471" r="6.65"/><circle cx="515" cy="635" r="6.65"/><circle class="w" cx="979" cy="529" r="6.65"/><circle class="w" cx="946" cy="202" r="6.65"/><circle class="w" cx="661" cy="200" r="6.65"/><circle class="w" cx="838" cy="182" r="6.65"/><circle cx="519" cy="374" r="6.65"/><circle class="w" cx="852" cy="573" r="6.65"/><circle cx="399" cy="538" r="6.65"/><circle cx="490" cy="299" r="6.65"/><circle cx="519" cy="481" r="6.65"/><circle class="w" cx="892" cy="631" r="6.65"/><circle cx="416" cy="556" r="6.65"/><circle cx="368" cy="302" r="6.65"/><circle cx="347" cy="445" r="6.65"/><circle class="w" cx="970" cy="463" r="6.65"/><circle cx="413" cy="664" r="6.65"/><circle cx="511" cy="319" r="6.65"/><circle cx="439" cy="579" r="6.65"/><circle class="w" cx="938" cy="573" r="6.65"/><circle class="w" cx="1020" cy="577" r="6.65"/><circle cx="467" cy="434" r="6.65"/><circle cx="449" cy="480" r="6.65"/><circle class="w" cx="923" cy="560" r="6.65"/><circle cx="410" cy="595" r="6.65"/><circle class="w" cx="975" cy="606" r="6.65"/><circle class="w" cx="1018" cy="552" r="6.65"/><circle class="w" cx="938" cy="544" r="6.65"/><circle class="w" cx="958" cy="355" r="6.65"/><circle cx="410" cy="632" r="6.65"/><circle cx="473" cy="452" r="6.65"/><circle cx="434" cy="220" r="6.65"/><circle cx="361" cy="372" r="6.65"/><circle class="w" cx="903" cy="458" r="6.65"/><circle class="w" cx="854" cy="332" r="6.65"/><circle cx="358" cy="341" r="6.65"/><circle class="w" cx="567" cy="446" r="6.65"/><circle cx="513" cy="596" r="6.65"/><circle cx="383" cy="184" r="6.65"/><circle cx="370" cy="454" r="6.65"/><circle cx="391" cy="294" r="6.65"/><circle class="w" cx="633" cy="598" r="6.65"/><circle cx="380" cy="428" r="6.65"/><circle cx="408" cy="412" r="6.65"/><circle class="w" cx="905" cy="411" r="6.65"/><circle cx="538" cy="561" r="6.65"/><circle class="w" cx="831" cy="323" r="6.65"/><circle class="w" cx="935" cy="367" r="6.65"/><circle cx="454" cy="357" r="6.65"/><circle cx="435" cy="360" r="6.65"/><circle class="w" cx="855" cy="632" r="6.65"/><circle class="w" cx="988" cy="560" r="6.65"/><circle cx="445" cy="638" r="6.65"/><circle class="w" cx="949" cy="437" r="6.65"/><circle class="w" cx="1000" cy="409" r="6.65"/><circle class="w" cx="907" cy="212" r="6.65"/><circle class="w" cx="960" cy="279" r="6.65"/><circle class="w" cx="805" cy="314" r="6.65"/><circle class="w" cx="572" cy="464" r="6.65"/><circle cx="465" cy="333" r="6.65"/><circle cx="493" cy="640" r="6.65"/><circle class="w" cx="926" cy="403" r="6.65"/><circle class="w" cx="989" cy="310" r="6.65"/><circle class="w" cx="1023" cy="603" r="6.65"/><circle class="w" cx="916" cy="577" r="6.65"/><circle cx="380" cy="578" r="6.65"/><circle cx="363" cy="256" r="6.65"/><circle cx="408" cy="351" r="6.65"/><circle class="w" cx="935" cy="474" r="6.65"/><circle class="w" cx="1015" cy="484" r="6.65"/><circle cx="460" cy="303" r="6.65"/><circle cx="517" cy="431" r="6.65"/><circle class="w" cx="992" cy="383" r="6.65"/><circle class="w" cx="819" cy="258" r="6.65"/><circle cx="474" cy="241" r="6.65"/><circle cx="469" cy="639" r="6.65"/><circle class="w" cx="965" cy="666" r="6.65"/><circle cx="525" cy="450" r="6.65"/><circle class="w" cx="974" cy="292" r="6.65"/><circle class="w" cx="881" cy="574" r="6.65"/><circle class="w" cx="908" cy="297" r="6.65"/><circle class="w" cx="988" cy="364" r="6.65"/><circle class="w" cx="1006" cy="588" r="6.65"/><circle class="w" cx="969" cy="435" r="6.65"/><circle class="w" cx="934" cy="385" r="6.65"/><circle class="w" cx="979" cy="225" r="6.65"/><circle cx="493" cy="661" r="6.65"/><circle class="w" cx="1004" cy="439" r="6.65"/><circle class="w" cx="670" cy="385" r="6.65"/><circle class="w" cx="883" cy="593" r="6.65"/><circle cx="382" cy="550" r="6.65"/><circle cx="359" cy="430" r="6.65"/><circle cx="379" cy="399" r="6.65"/><circle cx="440" cy="183" r="6.65"/><circle cx="483" cy="413" r="6.65"/><circle class="w" cx="875" cy="664" r="6.65"/><circle class="w" cx="894" cy="549" r="6.65"/><circle cx="482" cy="569" r="6.65"/><circle class="w" cx="1024" cy="511" r="6.65"/><circle class="w" cx="889" cy="214" r="6.65"/><circle cx="447" cy="619" r="6.65"/><circle class="w" cx="956" cy="520" r="6.65"/><circle cx="510" cy="515" r="6.65"/><circle class="w" cx="818" cy="531" r="6.65"/><circle class="w" cx="912" cy="648" r="6.65"/><circle cx="396" cy="450" r="6.65"/><circle cx="485" cy="508" r="6.65"/><circle class="w" cx="571" cy="389" r="6.65"/><circle class="w" cx="646" cy="189" r="6.65"/><circle cx="357" cy="477" r="6.65"/><circle cx="374" cy="352" r="6.65"/><circle class="w" cx="620" cy="459" r="6.65"/><circle cx="430" cy="529" r="6.65"/><circle class="w" cx="966" cy="374" r="6.65"/><circle cx="455" cy="571" r="6.65"/><circle class="w" cx="555" cy="269" r="6.65"/><circle class="w" cx="767" cy="480" r="6.65"/><circle class="w" cx="915" cy="182" r="6.65"/><circle class="w" cx="844" cy="648" r="6.65"/><circle class="w" cx="877" cy="229" r="6.65"/><circle class="w" cx="990" cy="599" r="6.65"/><circle cx="349" cy="390" r="6.65"/><circle class="w" cx="663" cy="553" r="6.65"/><circle cx="423" cy="312" r="6.65"/><circle class="w" cx="866" cy="467" r="6.65"/><circle class="w" cx="827" cy="640" r="6.65"/><circle cx="499" cy="583" r="6.65"/><circle class="w" cx="968" cy="331" r="6.65"/><circle class="w" cx="1020" cy="535" r="6.65"/><circle cx="392" cy="504" r="6.65"/><circle class="w" cx="960" cy="559" r="6.65"/><circle cx="410" cy="300" r="6.65"/><circle class="w" cx="938" cy="633" r="6.65"/><circle cx="502" cy="445" r="6.65"/><circle class="w" cx="912" cy="510" r="6.65"/><circle cx="439" cy="494" r="6.65"/><circle cx="471" cy="384" r="6.65"/><circle cx="407" cy="279" r="6.65"/><circle class="w" cx="862" cy="648" r="6.65"/><circle class="w" cx="870" cy="619" r="6.65"/><circle cx="425" cy="267" r="6.65"/><circle class="w" cx="912" cy="349" r="6.65"/><circle class="w" cx="850" cy="591" r="6.65"/><circle cx="479" cy="346" r="6.65"/><circle class="w" cx="946" cy="264" r="6.65"/><circle cx="452" cy="654" r="6.65"/><circle cx="446" cy="255" r="6.65"/><circle class="w" cx="670" cy="180" r="6.65"/><circle class="w" cx="839" cy="457" r="6.65"/><circle cx="494" cy="622" r="6.65"/><circle class="w" cx="928" cy="612" r="6.65"/><circle class="w" cx="934" cy="520" r="6.65"/><circle cx="404" cy="373" r="6.65"/><circle cx="493" cy="242" r="6.65"/><circle class="w" cx="957" cy="228" r="6.65"/><circle cx="421" cy="495" r="6.65"/><circle class="w" cx="802" cy="194" r="6.65"/><circle cx="466" cy="618" r="6.65"/><circle class="w" cx="964" cy="309" r="6.65"/><circle class="w" cx="685" cy="599" r="6.65"/><circle class="w" cx="999" cy="632" r="6.65"/><circle class="w" cx="907" cy="491" r="6.65"/><circle class="w" cx="919" cy="467" r="6.65"/><circle class="w" cx="588" cy="506" r="6.65"/><circle cx="462" cy="187" r="6.65"/><circle class="w" cx="1007" cy="613" r="6.65"/><circle cx="432" cy="656" r="6.65"/><circle cx="391" cy="618" r="6.65"/><circle cx="432" cy="203" r="6.65"/><circle class="w" cx="990" cy="474" r="6.65"/><circle cx="411" cy="390" r="6.65"/><circle class="w" cx="976" cy="625" r="6.65"/><circle class="w" cx="759" cy="294" r="6.65"/><circle class="w" cx="690" cy="175" r="6.65"/><circle class="w" cx="939" cy="653" r="6.65"/><circle cx="477" cy="366" r="6.65"/><circle cx="499" cy="564" r="6.65"/><circle class="w" cx="885" cy="333" r="6.65"/><circle cx="426" cy="234" r="6.65"/><circle cx="501" cy="175" r="6.65"/><circle class="w" cx="824" cy="397" r="6.65"/><circle class="w" cx="728" cy="182" r="6.65"/><circle cx="445" cy="343" r="6.65"/><circle cx="446" cy="412" r="6.65"/><circle class="w" cx="927" cy="489" r="6.65"/><circle cx="378" cy="267" r="6.65"/><circle cx="482" cy="550" r="6.65"/><circle cx="470" cy="599" r="6.65"/><circle class="w" cx="879" cy="454" r="6.65"/><circle cx="399" cy="556" r="6.65"/><circle cx="380" cy="328" r="6.65"/><circle class="w" cx="765" cy="541" r="6.65"/><circle cx="439" cy="391" r="6.65"/><circle class="w" cx="604" cy="180" r="6.65"/><circle cx="368" cy="513" r="6.65"/><circle class="w" cx="560" cy="182" r="6.65"/><circle class="w" cx="830" cy="218" r="6.65"/><circle class="w" cx="904" cy="279" r="6.65"/><circle class="w" cx="1008" cy="521" r="6.65"/><circle cx="413" cy="476" r="6.65"/><circle class="w" cx="991" cy="287" r="6.65"/><circle class="w" cx="969" cy="395" r="6.65"/><circle class="w" cx="848" cy="474" r="6.65"/><circle class="w" cx="972" cy="418" r="6.65"/><circle class="w" cx="952" cy="186" r="6.65"/><circle class="w" cx="954" cy="579" r="6.65"/><circle class="w" cx="896" cy="180" r="6.65"/><circle class="w" cx="1012" cy="457" r="6.65"/><circle cx="420" cy="613" r="6.65"/><circle class="w" cx="914" cy="388" r="6.65"/><circle cx="518" cy="557" r="6.65"/><circle class="w" cx="946" cy="613" r="6.65"/><circle cx="433" cy="468" r="6.65"/><circle class="w" cx="746" cy="181" r="6.65"/><circle cx="501" cy="367" r="6.65"/><circle class="w" cx="898" cy="525" r="6.65"/><circle class="w" cx="910" cy="229" r="6.65"/><circle cx="428" cy="636" r="6.65"/><circle cx="411" cy="532" r="6.65"/><circle class="w" cx="878" cy="637" r="6.65"/><circle cx="370" cy="235" r="6.65"/><circle class="w" cx="929" cy="272" r="6.65"/><circle cx="380" cy="599" r="6.65"/><circle cx="491" cy="332" r="6.65"/><circle class="w" cx="971" cy="571" r="6.65"/><circle cx="370" cy="286" r="6.65"/><circle cx="453" cy="507" r="6.65"/><circle cx="561" cy="625" r="6.65"/><circle cx="412" cy="512" r="6.65"/><circle cx="382" cy="203" r="6.65"/><circle cx="382" cy="634" r="6.65"/><circle class="w" cx="837" cy="504" r="6.65"/><circle cx="488" cy="485" r="6.65"/><circle class="w" cx="900" cy="474" r="6.65"/><circle class="w" cx="828" cy="342" r="6.65"/><circle class="w" cx="641" cy="573" r="6.65"/><circle cx="388" cy="385" r="6.65"/><circle class="w" cx="996" cy="254" r="6.65"/><circle class="w" cx="895" cy="565" r="6.65"/><circle cx="447" cy="534" r="6.65"/><circle class="w" cx="864" cy="579" r="6.65"/><circle class="w" cx="870" cy="250" r="6.65"/><circle class="w" cx="1009" cy="423" r="6.65"/><circle class="w" cx="917" cy="665" r="6.65"/><circle class="w" cx="993" cy="453" r="6.65"/><circle class="w" cx="586" cy="667" r="6.65"/><circle class="w" cx="742" cy="266" r="6.65"/><circle cx="397" cy="259" r="6.65"/><circle class="w" cx="857" cy="388" r="6.65"/><circle cx="373" cy="415" r="6.65"/><circle class="w" cx="958" cy="540" r="6.65"/><circle cx="397" cy="178" r="6.65"/><circle class="w" cx="910" cy="370" r="6.65"/><circle cx="457" cy="396" r="6.65"/><circle class="w" cx="1005" cy="559" r="6.65"/><circle class="w" cx="944" cy="487" r="6.65"/><circle class="w" cx="994" cy="349" r="6.65"/><circle class="w" cx="936" cy="218" r="6.65"/><circle cx="473" cy="473" r="6.65"/><circle class="w" cx="972" cy="510" r="6.65"/><circle class="w" cx="969" cy="480" r="6.65"/><circle class="w" cx="966" cy="214" r="6.65"/><circle class="w" cx="957" cy="460" r="6.65"/><circle class="w" cx="954" cy="641" r="6.65"/><circle class="w" cx="990" cy="517" r="6.65"/><circle class="w" cx="851" cy="530" r="6.65"/><circle class="w" cx="817" cy="513" r="6.65"/><circle class="w" cx="997" cy="491" r="6.65"/><circle class="w" cx="993" cy="234" r="6.65"/><circle cx="379" cy="368" r="6.65"/><circle cx="365" cy="216" r="6.65"/><circle cx="467" cy="582" r="6.65"/><circle cx="383" cy="661" r="6.65"/><circle cx="499" cy="314" r="6.65"/><circle cx="452" cy="200" r="6.65"/><circle cx="371" cy="440" r="6.65"/><circle class="w" cx="920" cy="332" r="6.65"/><circle cx="410" cy="336" r="6.65"/><circle class="w" cx="973" cy="450" r="6.65"/><circle class="w" cx="940" cy="328" r="6.65"/><circle class="w" cx="828" cy="245" r="6.65"/><circle cx="400" cy="224" r="6.65"/><circle class="w" cx="891" cy="508" r="6.65"/><circle cx="375" cy="536" r="6.65"/><circle cx="352" cy="351" r="6.65"/><circle class="w" cx="913" cy="447" r="6.65"/><circle cx="373" cy="479" r="6.65"/><circle cx="393" cy="581" r="6.65"/><circle cx="421" cy="438" r="6.65"/><circle cx="358" cy="196" r="6.65"/><circle class="w" cx="984" cy="432" r="6.65"/><circle class="w" cx="935" cy="177" r="6.65"/><circle class="w" cx="930" cy="291" r="6.65"/><circle cx="453" cy="555" r="6.65"/><circle class="w" cx="890" cy="660" r="6.65"/><circle class="w" cx="584" cy="179" r="6.65"/><circle class="w" cx="946" cy="376" r="6.65"/><circle class="w" cx="951" cy="404" r="6.65"/><circle cx="392" cy="409" r="6.65"/><circle class="w" cx="769" cy="661" r="6.65"/><circle class="w" cx="842" cy="377" r="6.65"/><circle class="w" cx="536" cy="286" r="6.65"/><circle cx="515" cy="531" r="6.65"/><circle class="w" cx="982" cy="643" r="6.65"/><circle cx="423" cy="356" r="6.65"/><circle class="w" cx="965" cy="605" r="6.65"/><circle class="w" cx="982" cy="322" r="6.65"/><circle class="w" cx="717" cy="369" r="6.65"/><circle cx="491" cy="431" r="6.65"/><circle cx="419" cy="456" r="6.65"/><circle class="w" cx="918" cy="589" r="6.65"/><circle class="w" cx="951" cy="426" r="6.65"/><circle cx="412" cy="587" r="6.65"/><circle cx="465" cy="413" r="6.65"/><circle class="w" cx="1009" cy="395" r="6.65"/><circle class="w" cx="758" cy="373" r="6.65"/><circle class="w" cx="916" cy="314" r="6.65"/><circle class="w" cx="769" cy="189" r="6.65"/><circle class="w" cx="788" cy="185" r="6.65"/><circle class="w" cx="939" cy="538" r="6.65"/><circle cx="449" cy="309" r="6.65"/><circle cx="457" cy="290" r="6.65"/><circle class="w" cx="876" cy="555" r="6.65"/><circle class="w" cx="641" cy="175" r="6.65"/><circle class="w" cx="731" cy="432" r="6.65"/><circle class="w" cx="973" cy="553" r="6.65"/><circle cx="452" cy="222" r="6.65"/><circle cx="500" cy="500" r="6.65"/><circle class="w" cx="937" cy="349" r="6.65"/><circle cx="436" cy="372" r="6.65"/><circle cx="383" cy="455" r="6.65"/><circle class="w" cx="983" cy="584" r="6.65"/><circle cx="508" cy="424" r="6.65"/><circle class="w" cx="917" cy="413" r="6.65"/><circle cx="459" cy="449" r="6.65"/><circle cx="391" cy="284" r="6.65"/><circle class="w" cx="916" cy="560" r="6.65"/><circle class="w" cx="854" cy="455" r="6.65"/><circle class="w" cx="1003" cy="377" r="6.65"/><circle cx="433" cy="545" r="6.65"/><circle cx="390" cy="435" r="6.65"/><circle class="w" cx="885" cy="197" r="6.65"/><circle class="w" cx="944" cy="301" r="6.65"/><circle class="w" cx="840" cy="397" r="6.65"/><circle class="w" cx="887" cy="352" r="6.65"/><circle cx="456" cy="640" r="6.65"/><circle class="w" cx="986" cy="536" r="6.65"/><circle class="w" cx="1000" cy="310" r="6.65"/><circle cx="424" cy="402" r="6.65"/><circle cx="469" cy="267" r="6.65"/><circle cx="480" cy="629" r="6.65"/><circle cx="378" cy="303" r="6.65"/><circle class="w" cx="582" cy="404" r="6.65"/><circle class="w" cx="909" cy="203" r="6.65"/><circle class="w" cx="924" cy="639" r="6.65"/><circle class="w" cx="824" cy="431" r="6.65"/><circle cx="520" cy="471" r="6.65"/><circle cx="384" cy="519" r="6.65"/><circle cx="555" cy="603" r="6.65"/><circle cx="497" cy="597" r="6.65"/><circle class="w" cx="604" cy="621" r="6.65"/><circle cx="405" cy="424" r="6.65"/><circle class="w" cx="960" cy="497" r="6.65"/><circle class="w" cx="985" cy="408" r="6.65"/><circle cx="468" cy="522" r="6.65"/><circle class="w" cx="895" cy="636" r="6.65"/><circle class="w" cx="836" cy="181" r="6.65"/><circle class="w" cx="941" cy="506" r="6.65"/><circle cx="408" cy="240" r="6.65"/><circle class="w" cx="900" cy="601" r="6.65"/><circle cx="525" cy="592" r="6.65"/><circle cx="362" cy="369" r="6.65"/><circle cx="357" cy="302" r="6.65"/><circle cx="429" cy="422" r="6.65"/><circle class="w" cx="926" cy="373" r="6.65"/><circle cx="488" cy="229" r="6.65"/><circle cx="521" cy="318" r="6.65"/><circle class="w" cx="843" cy="234" r="6.65"/><circle class="w" cx="973" cy="182" r="6.65"/><circle cx="478" cy="656" r="6.65"/><circle cx="517" cy="443" r="6.65"/><circle cx="439" cy="450" r="6.65"/><circle cx="432" cy="590" r="6.65"/><circle cx="495" cy="648" r="6.65"/><circle class="w" cx="969" cy="234" r="6.65"/><circle class="w" cx="933" cy="402" r="6.65"/><circle cx="464" cy="431" r="6.65"/><circle class="w" cx="949" cy="596" r="6.65"/><circle cx="491" cy="518" r="6.65"/><circle class="w" cx="936" cy="584" r="6.65"/><circle cx="403" cy="492" r="6.65"/><circle cx="451" cy="270" r="6.65"/><circle cx="493" cy="283" r="6.65"/><circle class="w" cx="985" cy="270" r="6.65"/><circle class="w" cx="958" cy="345" r="6.65"/><circle cx="477" cy="443" r="6.65"/><circle cx="460" cy="359" r="6.65"/><circle class="w" cx="815" cy="190" r="6.65"/><circle class="w" cx="762" cy="212" r="6.65"/><circle class="w" cx="959" cy="623" r="6.65"/><circle cx="383" cy="246" r="6.65"/><circle class="w" cx="989" cy="389" r="6.65"/><circle class="w" cx="908" cy="619" r="6.65"/><circle class="w" cx="967" cy="263" r="6.65"/><circle class="w" cx="926" cy="233" r="6.65"/><circle cx="431" cy="219" r="6.65"/><circle cx="507" cy="342" r="6.65"/><circle cx="566" cy="642" r="6.65"/><circle cx="501" cy="549" r="6.65"/><circle cx="504" cy="458" r="6.65"/><circle class="w" cx="983" cy="203" r="6.65"/><circle cx="464" cy="540" r="6.65"/><circle cx="548" cy="636" r="6.65"/><circle cx="540" cy="365" r="6.65"/><circle class="w" cx="868" cy="325" r="6.65"/><circle class="w" cx="914" cy="541" r="6.65"/><circle cx="373" cy="185" r="6.65"/><circle class="w" cx="935" cy="443" r="6.65"/><circle cx="351" cy="321" r="6.65"/><circle cx="510" cy="661" r="6.65"/><circle cx="481" cy="247" r="6.65"/><circle class="w" cx="848" cy="434" r="6.65"/><circle class="w" cx="977" cy="374" r="6.65"/><circle cx="520" cy="573" r="6.65"/><circle class="w" cx="1010" cy="474" r="6.65"/><circle cx="480" cy="610" r="6.65"/><circle cx="418" cy="203" r="6.65"/><circle class="w" cx="994" cy="620" r="6.65"/><circle class="w" cx="1004" cy="328" r="6.65"/><circle class="w" cx="1006" cy="279" r="6.65"/><circle cx="525" cy="352" r="6.65"/><circle cx="504" cy="406" r="6.65"/><circle class="w" cx="945" cy="566" r="6.65"/><circle class="w" cx="883" cy="473" r="6.65"/><circle cx="368" cy="343" r="6.65"/><circle cx="362" cy="266" r="6.65"/><circle cx="520" cy="496" r="6.65"/><circle cx="478" cy="394" r="6.65"/><circle cx="429" cy="485" r="6.65"/><circle class="w" cx="1016" cy="358" r="6.65"/><circle cx="423" cy="320" r="6.65"/><circle cx="399" cy="599" r="6.65"/><circle class="w" cx="938" cy="665" r="6.65"/><circle cx="534" cy="657" r="6.65"/><circle class="w" cx="747" cy="658" r="6.65"/><circle cx="569" cy="661" r="6.65"/><circle class="w" cx="972" cy="666" r="6.65"/><circle class="w" cx="879" cy="621" r="6.65"/><circle class="w" cx="1009" cy="543" r="6.65"/><circle cx="395" cy="542" r="6.65"/><circle cx="451" cy="576" r="6.65"/><circle class="w" cx="944" cy="472" r="6.65"/><circle class="w" cx="913" cy="296" r="6.65"/><circle class="w" cx="582" cy="314" r="6.65"/><circle cx="489" cy="264" r="6.65"/><circle class="w" cx="801" cy="366" r="6.65"/><circle class="w" cx="670" cy="188" r="6.65"/><circle cx="351" cy="241" r="6.65"/><circle class="w" cx="840" cy="255" r="6.65"/><circle class="w" cx="979" cy="346" r="6.65"/><circle class="w" cx="1010" cy="500" r="6.65"/><circle class="w" cx="991" cy="563" r="6.65"/><circle class="w" cx="599" cy="469" r="6.65"/><circle class="w" cx="577" cy="193" r="6.65"/><circle cx="454" cy="377" r="6.65"/><circle class="w" cx="741" cy="244" r="6.65"/><circle cx="458" cy="657" r="6.65"/><circle cx="518" cy="190" r="6.65"/><circle cx="446" cy="478" r="6.65"/><circle cx="428" cy="622" r="6.65"/><circle cx="483" cy="562" r="6.65"/><circle class="w" cx="954" cy="444" r="6.65"/><circle class="w" cx="1003" cy="202" r="6.65"/><circle class="w" cx="710" cy="182" r="6.65"/><circle class="w" cx="964" cy="325" r="6.65"/><circle class="w" cx="890" cy="238" r="6.65"/><circle class="w" cx="808" cy="488" r="6.65"/><circle class="w" cx="926" cy="459" r="6.65"/><circle class="w" cx="862" cy="374" r="6.65"/><circle class="w" cx="691" cy="186" r="6.65"/><circle cx="487" cy="414" r="6.65"/><circle class="w" cx="599" cy="582" r="6.65"/><circle class="w" cx="916" cy="497" r="6.65"/><circle cx="398" cy="460" r="6.65"/><circle cx="406" cy="400" r="6.65"/><circle cx="470" cy="182" r="6.65"/><circle class="w" cx="959" cy="654" r="6.65"/><circle cx="422" cy="503" r="6.65"/><circle cx="490" cy="470" r="6.65"/><circle cx="474" cy="293" r="6.65"/><circle cx="405" cy="307" r="6.65"/><circle class="w" cx="863" cy="635" r="6.65"/><circle class="w" cx="996" cy="220" r="6.65"/><circle class="w" cx="962" cy="200" r="6.65"/><circle class="w" cx="1023" cy="420" r="6.65"/><circle class="w" cx="919" cy="517" r="6.65"/><circle class="w" cx="931" cy="553" r="6.65"/><circle cx="460" cy="465" r="6.65"/><circle class="w" cx="940" cy="205" r="6.65"/><circle class="w" cx="899" cy="335" r="6.65"/><circle class="w" cx="841" cy="515" r="6.65"/><circle class="w" cx="618" cy="454" r="6.65"/><circle cx="445" cy="182" r="6.65"/><circle cx="360" cy="285" r="6.65"/><circle class="w" cx="843" cy="548" r="6.65"/><circle class="w" cx="859" cy="516" r="6.65"/><circle class="w" cx="913" cy="245" r="6.65"/><circle cx="386" cy="488" r="6.65"/><circle class="w" cx="803" cy="177" r="6.65"/><circle cx="440" cy="636" r="6.65"/><circle class="w" cx="997" cy="182" r="6.65"/><circle cx="445" cy="399" r="6.65"/><circle cx="478" cy="358" r="6.65"/><circle class="w" cx="965" cy="306" r="6.65"/><circle class="w" cx="937" cy="608" r="6.65"/><circle class="w" cx="959" cy="381" r="6.65"/><circle cx="411" cy="257" r="6.65"/><circle cx="411" cy="276" r="6.65"/><circle class="w" cx="871" cy="190" r="6.65"/><circle cx="491" cy="205" r="6.65"/><circle class="w" cx="901" cy="313" r="6.65"/><circle cx="447" cy="347" r="6.65"/><circle class="w" cx="920" cy="654" r="6.65"/><circle class="w" cx="830" cy="223" r="6.65"/><circle cx="398" cy="210" r="6.65"/><circle cx="508" cy="377" r="6.65"/><circle class="w" cx="888" cy="542" r="6.65"/><circle class="w" cx="966" cy="424" r="6.65"/><circle cx="406" cy="187" r="6.65"/><circle class="w" cx="824" cy="316" r="6.65"/><circle class="w" cx="745" cy="428" r="6.65"/><circle cx="450" cy="421" r="6.65"/><circle cx="440" cy="526" r="6.65"/><circle class="w" cx="957" cy="580" r="6.65"/><circle class="w" cx="920" cy="605" r="6.65"/><circle class="w" cx="751" cy="185" r="6.65"/><circle class="w" cx="797" cy="321" r="6.65"/><circle class="w" cx="813" cy="618" r="6.65"/><circle class="w" cx="877" cy="256" r="6.65"/><circle cx="388" cy="345" r="6.65"/><circle cx="500" cy="181" r="6.65"/><circle class="w" cx="898" cy="431" r="6.65"/><circle class="w" cx="898" cy="579" r="6.65"/><circle cx="435" cy="656" r="6.65"/><circle class="w" cx="627" cy="178" r="6.65"/><circle class="w" cx="901" cy="516" r="6.65"/><circle cx="392" cy="268" r="6.65"/><circle cx="501" cy="532" r="6.65"/><circle class="w" cx="835" cy="618" r="6.65"/><circle class="w" cx="930" cy="263" r="6.65"/><circle cx="508" cy="305" r="6.65"/><circle class="w" cx="595" cy="603" r="6.65"/><circle cx="409" cy="618" r="6.65"/><circle cx="523" cy="557" r="6.65"/><circle cx="422" cy="534" r="6.65"/><circle cx="407" cy="366" r="6.65"/><circle class="w" cx="987" cy="655" r="6.65"/><circle cx="421" cy="575" r="6.65"/><circle cx="413" cy="555" r="6.65"/><circle class="w" cx="579" cy="420" r="6.65"/><circle class="w" cx="619" cy="404" r="6.65"/><circle cx="480" cy="541" r="6.65"/><circle cx="503" cy="358" r="6.65"/><circle class="w" cx="971" cy="592" r="6.65"/><circle cx="410" cy="477" r="6.65"/><circle cx="389" cy="194" r="6.65"/><circle class="w" cx="965" cy="361" r="6.65"/><circle class="w" cx="916" cy="278" r="6.65"/><circle class="w" cx="1009" cy="262" r="6.65"/><circle class="w" cx="987" cy="487" r="6.65"/><circle class="w" cx="881" cy="337" r="6.65"/><circle cx="378" cy="407" r="6.65"/><circle cx="536" cy="604" r="6.65"/><circle class="w" cx="933" cy="320" r="6.65"/><circle class="w" cx="978" cy="294" r="6.65"/><circle class="w" cx="837" cy="412" r="6.65"/><circle class="w" cx="791" cy="569" r="6.65"/><circle cx="382" cy="322" r="6.65"/><circle cx="518" cy="225" r="6.65"/><circle class="w" cx="866" cy="430" r="6.65"/><circle class="w" cx="858" cy="618" r="6.65"/><circle class="w" cx="1020" cy="384" r="6.65"/><circle class="w" cx="793" cy="248" r="6.65"/><circle cx="524" cy="286" r="6.65"/><circle cx="396" cy="233" r="6.65"/><circle class="w" cx="918" cy="397" r="6.65"/><circle class="w" cx="918" cy="476" r="6.65"/><circle cx="390" cy="392" r="6.65"/><circle class="w" cx="764" cy="328" r="6.65"/><circle class="w" cx="939" cy="385" r="6.65"/><circle class="w" cx="740" cy="357" r="6.65"/><circle class="w" cx="605" cy="298" r="6.65"/><circle class="w" cx="828" cy="387" r="6.65"/><circle cx="516" cy="604" r="6.65"/><circle class="w" cx="848" cy="497" r="6.65"/><circle class="w" cx="899" cy="555" r="6.65"/><circle class="w" cx="934" cy="491" r="6.65"/><circle class="w" cx="1014" cy="306" r="6.65"/><circle class="w" cx="919" cy="576" r="6.65"/><circle class="w" cx="978" cy="522" r="6.65"/><circle cx="389" cy="373" r="6.65"/><circle class="w" cx="913" cy="188" r="6.65"/><circle class="w" cx="795" cy="383" r="6.65"/><circle class="w" cx="978" cy="224" r="6.65"/><circle cx="413" cy="334" r="6.65"/><circle class="w" cx="973" cy="406" r="6.65"/><circle class="w" cx="995" cy="355" r="6.65"/><circle cx="423" cy="233" r="6.65"/><circle class="w" cx="621" cy="583" r="6.65"/><circle class="w" cx="975" cy="503" r="6.65"/><circle class="w" cx="878" cy="512" r="6.65"/><circle class="w" cx="941" cy="184" r="6.65"/><circle cx="477" cy="507" r="6.65"/><circle cx="444" cy="206" r="6.65"/><circle cx="547" cy="531" r="6.65"/><circle class="w" cx="873" cy="573" r="6.65"/><circle class="w" cx="883" cy="646" r="6.65"/><circle cx="368" cy="202" r="6.65"/><circle class="w" cx="953" cy="535" r="6.65"/><circle class="w" cx="896" cy="465" r="6.65"/><circle class="w" cx="993" cy="508" r="6.65"/><circle cx="429" cy="365" r="6.65"/><circle class="w" cx="1010" cy="454" r="6.65"/><circle class="w" cx="735" cy="599" r="6.65"/><circle class="w" cx="901" cy="654" r="6.65"/><circle cx="416" cy="665" r="6.65"/><circle cx="380" cy="469" r="6.65"/><circle class="w" cx="992" cy="374" r="6.65"/><circle class="w" cx="938" cy="625" r="6.65"/><circle class="w" cx="898" cy="368" r="6.65"/><circle class="w" cx="794" cy="658" r="6.65"/><circle cx="447" cy="592" r="6.65"/><circle class="w" cx="799" cy="517" r="6.65"/><circle cx="443" cy="505" r="6.65"/><circle cx="514" cy="632" r="6.65"/><circle cx="467" cy="553" r="6.65"/><circle cx="364" cy="228" r="6.65"/><circle cx="459" cy="194" r="6.65"/><circle cx="475" cy="223" r="6.65"/><circle cx="591" cy="663" r="6.65"/><circle cx="508" cy="505" r="6.65"/><circle class="w" cx="766" cy="199" r="6.65"/><circle class="w" cx="918" cy="441" r="6.65"/><circle cx="464" cy="278" r="6.65"/><circle cx="396" cy="289" r="6.65"/><circle cx="365" cy="319" r="6.65"/><circle class="w" cx="859" cy="205" r="6.65"/><circle cx="430" cy="253" r="6.65"/><circle class="w" cx="893" cy="619" r="6.65"/><circle class="w" cx="640" cy="522" r="6.65"/><circle cx="525" cy="454" r="6.65"/><circle class="w" cx="946" cy="367" r="6.65"/><circle class="w" cx="952" cy="286" r="6.65"/><circle class="w" cx="828" cy="288" r="6.65"/><circle cx="442" cy="611" r="6.65"/><circle class="w" cx="1013" cy="238" r="6.65"/><circle class="w" cx="1019" cy="325" r="6.65"/><circle class="w" cx="943" cy="455" r="6.65"/><circle class="w" cx="594" cy="187" r="6.65"/><circle class="w" cx="900" cy="202" r="6.65"/><circle cx="475" cy="475" r="6.65"/><circle cx="482" cy="596" r="6.65"/><circle cx="496" cy="248" r="6.65"/><circle cx="493" cy="626" r="6.65"/><circle class="w" cx="972" cy="618" r="6.65"/><circle class="w" cx="1004" cy="427" r="6.65"/><circle cx="555" cy="656" r="6.65"/><circle cx="458" cy="524" r="6.65"/><circle class="w" cx="948" cy="269" r="6.65"/><circle class="w" cx="992" cy="336" r="6.65"/><circle class="w" cx="975" cy="242" r="6.65"/><circle class="w" cx="880" cy="607" r="6.65"/><circle class="w" cx="987" cy="259" r="6.65"/><circle class="w" cx="854" cy="533" r="6.65"/><circle cx="410" cy="640" r="6.65"/><circle cx="525" cy="671" r="6.65"/><circle cx="394" cy="525" r="6.65"/><circle cx="415" cy="419" r="6.65"/><circle class="w" cx="985" cy="434" r="6.65"/><circle cx="383" cy="439" r="6.65"/><circle cx="473" cy="624" r="6.65"/><circle cx="377" cy="290" r="6.65"/><circle class="w" cx="851" cy="397" r="6.65"/><circle cx="505" cy="283" r="6.65"/><circle class="w" cx="935" cy="530" r="6.65"/><circle class="w" cx="922" cy="417" r="6.65"/><circle cx="443" cy="438" r="6.65"/><circle class="w" cx="912" cy="378" r="6.65"/><circle cx="388" cy="504" r="6.65"/><circle cx="465" cy="445" r="6.65"/><circle cx="471" cy="668" r="6.65"/><circle class="w" cx="943" cy="410" r="6.65"/><circle class="w" cx="822" cy="580" r="6.65"/><circle class="w" cx="960" cy="515" r="6.65"/><circle cx="517" cy="270" r="6.65"/><circle cx="554" cy="483" r="6.65"/><circle class="w" cx="920" cy="205" r="6.65"/><circle class="w" cx="749" cy="584" r="6.65"/><circle class="w" cx="895" cy="182" r="6.65"/><circle cx="461" cy="609" r="6.65"/><circle cx="391" cy="179" r="6.65"/><circle class="w" cx="585" cy="233" r="6.65"/><circle cx="546" cy="194" r="6.65"/><circle cx="428" cy="308" r="6.65"/><circle cx="415" cy="214" r="6.65"/><circle class="w" cx="990" cy="589" r="6.65"/><circle cx="583" cy="519" r="6.65"/><circle cx="463" cy="258" r="6.65"/><circle cx="519" cy="338" r="6.65"/><circle class="w" cx="826" cy="547" r="6.65"/><circle class="w" cx="971" cy="477" r="6.65"/><circle class="w" cx="907" cy="350" r="6.65"/><circle class="w" cx="938" cy="644" r="6.65"/><circle class="w" cx="583" cy="390" r="6.65"/><circle cx="552" cy="399" r="6.65"/><circle class="w" cx="930" cy="592" r="6.65"/><circle cx="520" cy="436" r="6.65"/><circle cx="410" cy="386" r="6.65"/><circle cx="426" cy="198" r="6.65"/><circle cx="450" cy="306" r="6.65"/><circle class="w" cx="959" cy="233" r="6.65"/><circle cx="535" cy="327" r="6.65"/><circle class="w" cx="948" cy="306" r="6.65"/><circle class="w" cx="649" cy="332" r="6.65"/><circle class="w" cx="853" cy="311" r="6.65"/><circle cx="524" cy="416" r="6.65"/><circle class="w" cx="917" cy="560" r="6.65"/><circle class="w" cx="592" cy="408" r="6.65"/><circle cx="567" cy="623" r="6.65"/><circle cx="459" cy="641" r="6.65"/><circle class="w" cx="828" cy="179" r="6.65"/><circle class="w" cx="835" cy="356" r="6.65"/><circle cx="427" cy="518" r="6.65"/><circle cx="557" cy="436" r="6.65"/><circle class="w" cx="576" cy="181" r="6.65"/><circle class="w" cx="1000" cy="405" r="6.65"/><circle class="w" cx="910" cy="536" r="6.65"/><circle class="w" cx="982" cy="392" r="6.65"/><circle class="w" cx="995" cy="312" r="6.65"/><circle class="w" cx="828" cy="650" r="6.65"/><circle class="w" cx="938" cy="574" r="6.65"/><circle cx="494" cy="654" r="6.65"/><circle class="w" cx="885" cy="388" r="6.65"/><circle class="w" cx="822" cy="601" r="6.65"/><circle class="w" cx="916" cy="312" r="6.65"/><circle class="w" cx="995" cy="242" r="6.65"/><circle cx="444" cy="266" r="6.65"/><circle class="w" cx="893" cy="251" r="6.65"/><circle class="w" cx="867" cy="448" r="6.65"/><circle class="w" cx="953" cy="493" r="6.65"/><circle class="w" cx="1013" cy="348" r="6.65"/><circle cx="440" cy="331" r="6.65"/><circle class="w" cx="953" cy="605" r="6.65"/><circle class="w" cx="976" cy="190" r="6.65"/><circle class="w" cx="900" cy="499" r="6.65"/><circle cx="460" cy="337" r="6.65"/><circle class="w" cx="927" cy="292" r="6.65"/><circle cx="374" cy="383" r="6.65"/><circle class="w" cx="886" cy="589" r="6.65"/><circle cx="446" cy="287" r="6.65"/><circle class="w" cx="984" cy="548" r="6.65"/><circle class="w" cx="934" cy="509" r="6.65"/><circle class="w" cx="830" cy="458" r="6.65"/><circle class="w" cx="972" cy="208" r="6.65"/><circle cx="470" cy="412" r="6.65"/><circle class="w" cx="910" cy="259" r="6.65"/><circle class="w" cx="597" cy="502" r="6.65"/><circle class="w" cx="883" cy="427" r="6.65"/><circle class="w" cx="942" cy="351" r="6.65"/><circle class="w" cx="901" cy="636" r="6.65"/><circle class="w" cx="769" cy="468" r="6.65"/><circle class="w" cx="895" cy="225" r="6.65"/><circle class="w" cx="997" cy="275" r="6.65"/><circle cx="379" cy="244" r="6.65"/><circle class="w" cx="811" cy="665" r="6.65"/><circle class="w" cx="637" cy="191" r="6.65"/><circle cx="426" cy="286" r="6.65"/><circle class="w" cx="812" cy="189" r="6.65"/><circle class="w" cx="1015" cy="289" r="6.65"/><circle cx="543" cy="454" r="6.65"/><circle class="w" cx="955" cy="252" r="6.65"/><circle class="w" cx="858" cy="565" r="6.65"/><circle class="w" cx="805" cy="584" r="6.65"/><circle cx="498" cy="411" r="6.65"/><circle class="w" cx="967" cy="270" r="6.65"/><circle class="w" cx="961" cy="343" r="6.65"/><circle cx="396" cy="333" r="6.65"/><circle cx="438" cy="383" r="6.65"/><circle class="w" cx="970" cy="536" r="6.65"/><circle cx="517" cy="208" r="6.65"/><circle class="w" cx="815" cy="239" r="6.65"/><circle cx="460" cy="211" r="6.65"/><circle cx="437" cy="409" r="6.65"/><circle cx="509" cy="544" r="6.65"/><circle class="w" cx="959" cy="395" r="6.65"/><circle cx="476" cy="392" r="6.65"/><circle class="w" cx="813" cy="500" r="6.65"/><circle class="w" cx="788" cy="593" r="6.65"/><circle class="w" cx="927" cy="245" r="6.65"/><circle cx="548" cy="592" r="6.65"/><circle class="w" cx="857" cy="414" r="6.65"/><circle class="w" cx="817" cy="405" r="6.65"/><circle cx="553" cy="510" r="6.65"/><circle cx="427" cy="479" r="6.65"/><circle class="w" cx="842" cy="211" r="6.65"/><circle cx="485" cy="576" r="6.65"/><circle class="w" cx="930" cy="224" r="6.65"/><circle class="w" cx="794" cy="554" r="6.65"/><circle cx="460" cy="504" r="6.65"/><circle class="w" cx="878" cy="469" r="6.65"/><circle cx="415" cy="352" r="6.65"/><circle class="w" cx="925" cy="336" r="6.65"/><circle cx="497" cy="265" r="6.65"/><circle cx="463" cy="580" r="6.65"/><circle cx="529" cy="190" r="6.65"/><circle class="w" cx="956" cy="566" r="6.65"/><circle class="w" cx="878" cy="229" r="6.65"/><circle class="w" cx="973" cy="650" r="6.65"/><circle class="w" cx="832" cy="505" r="6.65"/><circle cx="363" cy="262" r="6.65"/><circle cx="433" cy="218" r="6.65"/><circle class="w" cx="944" cy="551" r="6.65"/><circle class="w" cx="687" cy="184" r="6.65"/><circle cx="486" cy="462" r="6.65"/><circle class="w" cx="858" cy="365" r="6.65"/><circle class="w" cx="864" cy="585" r="6.65"/><circle cx="472" cy="370" r="6.65"/><circle class="w" cx="890" cy="485" r="6.65"/><circle class="w" cx="775" cy="533" r="6.65"/><circle cx="438" cy="237" r="6.65"/><circle class="w" cx="1005" cy="385" r="6.65"/><circle cx="429" cy="497" r="6.65"/><circle class="w" cx="864" cy="506" r="6.65"/><circle cx="476" cy="643" r="6.65"/><circle cx="369" cy="181" r="6.65"/><circle class="w" cx="966" cy="323" r="6.65"/><circle class="w" cx="890" cy="570" r="6.65"/><circle cx="448" cy="657" r="6.65"/><circle cx="472" cy="351" r="6.65"/><circle class="w" cx="864" cy="642" r="6.65"/><circle cx="521" cy="307" r="6.65"/><circle class="w" cx="995" cy="203" r="6.65"/><circle cx="492" cy="518" r="6.65"/><circle cx="403" cy="601" r="6.65"/><circle cx="436" cy="558" r="6.65"/><circle cx="426" cy="596" r="6.65"/><circle cx="507" cy="672" r="6.65"/><circle cx="436" cy="581" r="6.65"/><circle class="w" cx="953" cy="655" r="6.65"/><circle class="w" cx="941" cy="477" r="6.65"/><circle cx="484" cy="297" r="6.65"/><circle cx="518" cy="655" r="6.65"/><circle cx="490" cy="559" r="6.65"/><circle class="w" cx="780" cy="666" r="6.65"/><circle class="w" cx="950" cy="196" r="6.65"/><circle class="w" cx="891" cy="521" r="6.65"/><circle class="w" cx="1020" cy="255" r="6.65"/><circle class="w" cx="717" cy="196" r="6.65"/><circle class="w" cx="956" cy="433" r="6.65"/><circle class="w" cx="903" cy="299" r="6.65"/><circle class="w" cx="858" cy="328" r="6.65"/><circle class="w" cx="958" cy="415" r="6.65"/><circle class="w" cx="929" cy="658" r="6.65"/><circle class="w" cx="757" cy="231" r="6.65"/><circle cx="387" cy="358" r="6.65"/><circle cx="409" cy="534" r="6.65"/><circle class="w" cx="859" cy="604" r="6.65"/><circle class="w" cx="815" cy="480" r="6.65"/><circle class="w" cx="786" cy="432" r="6.65"/><circle class="w" cx="843" cy="624" r="6.65"/><circle class="w" cx="835" cy="195" r="6.65"/><circle class="w" cx="913" cy="462" r="6.65"/><circle class="w" cx="889" cy="353" r="6.65"/><circle cx="431" cy="665" r="6.65"/><circle cx="420" cy="614" r="6.65"/><circle cx="450" cy="453" r="6.65"/><circle cx="489" cy="378" r="6.65"/><circle class="w" cx="809" cy="460" r="6.65"/><circle cx="436" cy="644" r="6.65"/><circle class="w" cx="968" cy="581" r="6.65"/><circle cx="463" cy="293" r="6.65"/><circle cx="491" cy="536" r="6.65"/><circle cx="443" cy="191" r="6.65"/><circle cx="536" cy="231" r="6.65"/><circle class="w" cx="895" cy="334" r="6.65"/><circle class="w" cx="726" cy="429" r="6.65"/><circle class="w" cx="826" cy="422" r="6.65"/><circle class="w" cx="926" cy="615" r="6.65"/><circle cx="356" cy="195" r="6.65"/><circle cx="455" cy="470" r="6.65"/><circle class="w" cx="993" cy="456" r="6.65"/><circle class="w" cx="923" cy="638" r="6.65"/><circle class="w" cx="908" cy="431" r="6.65"/><circle class="w" cx="974" cy="458" r="6.65"/><circle cx="394" cy="486" r="6.65"/><circle class="w" cx="953" cy="626" r="6.65"/><circle cx="441" cy="535" r="6.65"/><circle class="w" cx="957" cy="451" r="6.65"/><circle class="w" cx="987" cy="474" r="6.65"/><circle cx="387" cy="259" r="6.65"/><circle cx="510" cy="520" r="6.65"/><circle cx="378" cy="338" r="6.65"/><circle class="w" cx="854" cy="347" r="6.65"/><circle class="w" cx="999" cy="224" r="6.65"/><circle cx="511" cy="185" r="6.65"/><circle cx="477" cy="275" r="6.65"/><circle cx="403" cy="513" r="6.65"/><circle cx="400" cy="397" r="6.65"/><circle class="w" cx="1003" cy="367" r="6.65"/><circle cx="459" cy="625" r="6.65"/><circle cx="437" cy="624" r="6.65"/><circle class="w" cx="994" cy="294" r="6.65"/><circle cx="528" cy="397" r="6.65"/><circle class="w" cx="901" cy="411" r="6.65"/><circle class="w" cx="965" cy="377" r="6.65"/><circle class="w" cx="823" cy="344" r="6.65"/><circle cx="399" cy="215" r="6.65"/><circle class="w" cx="589" cy="471" r="6.65"/><circle class="w" cx="616" cy="623" r="6.65"/><circle cx="601" cy="563" r="6.65"/><circle class="w" cx="766" cy="211" r="6.65"/><circle class="w" cx="846" cy="428" r="6.65"/><circle cx="420" cy="571" r="6.65"/><circle class="w" cx="933" cy="307" r="6.65"/><circle class="w" cx="850" cy="482" r="6.65"/><circle cx="381" cy="197" r="6.65"/><circle class="w" cx="908" cy="483" r="6.65"/><circle cx="395" cy="449" r="6.65"/><circle cx="419" cy="373" r="6.65"/><circle cx="405" cy="471" r="6.65"/><circle cx="434" cy="462" r="6.65"/><circle class="w" cx="638" cy="208" r="6.65"/><circle class="w" cx="873" cy="489" r="6.65"/><circle cx="417" cy="455" r="6.65"/><circle class="w" cx="910" cy="214" r="6.65"/><circle class="w" cx="615" cy="652" r="6.65"/><circle cx="409" cy="289" r="6.65"/><circle class="w" cx="773" cy="270" r="6.65"/><circle class="w" cx="882" cy="544" r="6.65"/><circle class="w" cx="723" cy="596" r="6.65"/><circle class="w" cx="933" cy="461" r="6.65"/><circle cx="454" cy="392" r="6.65"/><circle class="w" cx="754" cy="197" r="6.65"/><circle cx="431" cy="444" r="6.65"/><circle class="w" cx="1019" cy="273" r="6.65"/><circle class="w" cx="616" cy="194" r="6.65"/><circle cx="381" cy="311" r="6.65"/><circle cx="568" cy="520" r="6.65"/><circle cx="402" cy="416" r="6.65"/><circle cx="455" cy="430" r="6.65"/><circle class="w" cx="1011" cy="318" r="6.65"/><circle class="w" cx="979" cy="347" r="6.65"/><circle cx="530" cy="609" r="6.65"/><circle cx="506" cy="642" r="6.65"/><circle class="w" cx="790" cy="512" r="6.65"/><circle cx="553" cy="294" r="6.65"/><circle cx="592" cy="598" r="6.65"/><circle class="w" cx="903" cy="389" r="6.65"/><circle class="w" cx="908" cy="618" r="6.65"/><circle cx="416" cy="324" r="6.65"/><circle class="w" cx="909" cy="279" r="6.65"/><circle cx="456" cy="553" r="6.65"/><circle class="w" cx="927" cy="393" r="6.65"/><circle class="w" cx="804" cy="267" r="6.65"/><circle class="w" cx="827" cy="440" r="6.65"/><circle cx="469" cy="188" r="6.65"/><circle class="w" cx="878" cy="257" r="6.65"/><circle class="w" cx="861" cy="541" r="6.65"/><circle cx="566" cy="495" r="6.65"/><circle class="w" cx="836" cy="391" r="6.65"/><circle cx="512" cy="383" r="6.65"/><circle class="w" cx="716" cy="559" r="6.65"/><circle class="w" cx="878" cy="334" r="6.65"/><circle class="w" cx="837" cy="556" r="6.65"/><circle cx="427" cy="393" r="6.65"/><circle cx="462" cy="234" r="6.65"/><circle class="w" cx="996" cy="184" r="6.65"/><circle cx="487" cy="441" r="6.65"/><circle class="w" cx="893" cy="450" r="6.65"/><circle cx="417" cy="231" r="6.65"/><circle class="w" cx="959" cy="219" r="6.65"/><circle cx="363" cy="241" r="6.65"/><circle class="w" cx="818" cy="638" r="6.65"/><circle cx="582" cy="557" r="6.65"/><circle class="w" cx="944" cy="236" r="6.65"/><circle class="w" cx="897" cy="599" r="6.65"/><circle class="w" cx="919" cy="581" r="6.65"/><circle cx="562" cy="184" r="6.65"/><circle class="w" cx="883" cy="505" r="6.65"/><circle class="w" cx="878" cy="289" r="6.65"/><circle cx="449" cy="602" r="6.65"/><circle cx="571" cy="542" r="6.65"/><circle cx="482" cy="495" r="6.65"/><circle class="w" cx="976" cy="231" r="6.65"/><circle class="w" cx="888" cy="668" r="6.65"/><circle class="w" cx="966" cy="286" r="6.65"/><circle cx="450" cy="248" r="6.65"/><circle class="w" cx="890" cy="195" r="6.65"/><circle class="w" cx="937" cy="602" r="6.65"/><circle cx="436" cy="366" r="6.65"/><circle class="w" cx="819" cy="569" r="6.65"/><circle class="w" cx="563" cy="208" r="6.65"/><circle class="w" cx="710" cy="580" r="6.65"/><circle cx="424" cy="420" r="6.65"/><circle cx="389" cy="233" r="6.65"/><circle cx="407" cy="247" r="6.65"/><circle cx="421" cy="259" r="6.65"/><circle cx="503" cy="618" r="6.65"/><circle class="w" cx="963" cy="183" r="6.65"/><circle class="w" cx="1005" cy="335" r="6.65"/><circle cx="418" cy="188" r="6.65"/><circle class="w" cx="769" cy="424" r="6.65"/><circle class="w" cx="912" cy="662" r="6.65"/><circle class="w" cx="790" cy="625" r="6.65"/><circle class="w" cx="948" cy="337" r="6.65"/><circle class="w" cx="984" cy="523" r="6.65"/><circle class="w" cx="936" cy="443" r="6.65"/><circle cx="523" cy="281" r="6.65"/><circle class="w" cx="989" cy="379" r="6.65"/><circle class="w" cx="1021" cy="236" r="6.65"/><circle class="w" cx="984" cy="215" r="6.65"/><circle cx="542" cy="181" r="6.65"/><circle cx="502" cy="496" r="6.65"/><circle class="w" cx="751" cy="480" r="6.65"/><circle cx="389" cy="278" r="6.65"/><circle class="w" cx="940" cy="364" r="6.65"/><circle cx="492" cy="313" r="6.65"/><circle class="w" cx="922" cy="497" r="6.65"/><circle cx="400" cy="348" r="6.65"/><circle class="w" cx="917" cy="600" r="6.65"/><circle cx="483" cy="626" r="6.65"/><circle cx="549" cy="494" r="6.65"/><circle cx="548" cy="657" r="6.65"/><circle class="w" cx="975" cy="429" r="6.65"/><circle cx="555" cy="331" r="6.65"/><circle cx="487" cy="181" r="6.65"/><circle cx="446" cy="514" r="6.65"/><circle class="w" cx="608" cy="359" r="6.65"/><circle cx="414" cy="489" r="6.65"/><circle cx="576" cy="384" r="6.65"/><circle cx="463" cy="665" r="6.65"/><circle cx="464" cy="487" r="6.65"/><circle class="w" cx="882" cy="642" r="6.65"/><circle class="w" cx="961" cy="526" r="6.65"/><circle cx="507" cy="362" r="6.65"/><circle class="w" cx="1012" cy="213" r="6.65"/><circle cx="503" cy="211" r="6.65"/><circle class="w" cx="699" cy="279" r="6.65"/><circle class="w" cx="923" cy="190" r="6.65"/><circle class="w" cx="799" cy="494" r="6.65"/><circle cx="475" cy="565" r="6.65"/><circle cx="526" cy="520" r="6.65"/><circle class="w" cx="851" cy="664" r="6.65"/><circle cx="518" cy="486" r="6.65"/><circle class="w" cx="854" cy="203" r="6.65"/><circle cx="392" cy="297" r="6.65"/><circle cx="400" cy="197" r="6.65"/><circle class="w" cx="985" cy="415" r="6.65"/><circle cx="530" cy="589" r="6.65"/><circle class="w" cx="773" cy="194" r="6.65"/><circle class="w" cx="830" cy="265" r="6.65"/><circle cx="411" cy="587" r="6.65"/><circle cx="583" cy="528" r="6.65"/><circle class="w" cx="866" cy="184" r="6.65"/><circle class="w" cx="971" cy="400" r="6.65"/><circle class="w" cx="963" cy="551" r="6.65"/><circle cx="402" cy="368" r="6.65"/><circle class="w" cx="969" cy="509" r="6.65"/><circle cx="526" cy="322" r="6.65"/><circle class="w" cx="844" cy="245" r="6.65"/><circle class="w" cx="937" cy="209" r="6.65"/><circle cx="448" cy="348" r="6.65"/><circle class="w" cx="737" cy="194" r="6.65"/><circle cx="528" cy="558" r="6.65"/><circle class="w" cx="871" cy="318" r="6.65"/><circle cx="424" cy="536" r="6.65"/><circle class="w" cx="693" cy="198" r="6.65"/><circle cx="511" cy="266" r="6.65"/><circle class="w" cx="935" cy="563" r="6.65"/><circle cx="435" cy="307" r="6.65"/><circle class="w" cx="799" cy="667" r="6.65"/><circle class="w" cx="833" cy="290" r="6.65"/><circle cx="446" cy="323" r="6.65"/><circle class="w" cx="806" cy="202" r="6.65"/><circle cx="538" cy="210" r="6.65"/><circle class="w" cx="587" cy="417" r="6.65"/><circle cx="569" cy="406" r="6.65"/><circle class="w" cx="809" cy="622" r="6.65"/><circle class="w" cx="807" cy="391" r="6.65"/><circle cx="532" cy="413" r="6.65"/><circle cx="449" cy="413" r="6.65"/><circle class="w" cx="597" cy="183" r="6.65"/><circle class="w" cx="875" cy="594" r="6.65"/><circle class="w" cx="835" cy="584" r="6.65"/><circle cx="551" cy="271" r="6.65"/><circle cx="455" cy="201" r="6.65"/><circle cx="493" cy="392" r="6.65"/><circle cx="575" cy="605" r="6.65"/><circle class="w" cx="895" cy="232" r="6.65"/><circle cx="583" cy="334" r="6.65"/><circle class="w" cx="918" cy="296" r="6.65"/><circle cx="519" cy="538" r="6.65"/><circle cx="507" cy="587" r="6.65"/><circle cx="397" cy="320" r="6.65"/><circle class="w" cx="844" cy="446" r="6.65"/><circle class="w" cx="911" cy="515" r="6.65"/><circle class="w" cx="870" cy="664" r="6.65"/><circle class="w" cx="959" cy="642" r="6.65"/><circle cx="470" cy="539" r="6.65"/><circle class="w" cx="951" cy="503" r="6.65"/><circle class="w" cx="914" cy="545" r="6.65"/><circle class="w" cx="885" cy="211" r="6.65"/><circle cx="428" cy="350" r="6.65"/><circle class="w" cx="592" cy="397" r="6.65"/><circle class="w" cx="810" cy="429" r="6.65"/><circle cx="409" cy="558" r="6.65"/><circle cx="451" cy="584" r="6.65"/><circle class="w" cx="932" cy="418" r="6.65"/><circle class="w" cx="894" cy="556" r="6.65"/><circle class="w" cx="942" cy="519" r="6.65"/><circle class="w" cx="882" cy="385" r="6.65"/><circle cx="467" cy="381" r="6.65"/><circle class="w" cx="952" cy="578" r="6.65"/><circle class="w" cx="746" cy="354" r="6.65"/><circle class="w" cx="793" cy="648" r="6.65"/><circle cx="464" cy="340" r="6.65"/><circle cx="428" cy="518" r="6.65"/><circle class="w" cx="819" cy="598" r="6.65"/><circle class="w" cx="929" cy="283" r="6.65"/><circle class="w" cx="817" cy="361" r="6.65"/><circle class="w" cx="815" cy="658" r="6.65"/><circle class="w" cx="791" cy="192" r="6.65"/><circle cx="482" cy="662" r="6.65"/><circle class="w" cx="1011" cy="287" r="6.65"/><circle cx="517" cy="344" r="6.65"/><circle class="w" cx="630" cy="181" r="6.65"/><circle class="w" cx="951" cy="388" r="6.65"/><circle cx="445" cy="226" r="6.65"/><circle class="w" cx="916" cy="263" r="6.65"/><circle cx="523" cy="197" r="6.65"/><circle class="w" cx="896" cy="472" r="6.65"/><circle class="w" cx="848" cy="302" r="6.65"/><circle class="w" cx="655" cy="182" r="6.65"/><circle class="w" cx="766" cy="660" r="6.65"/><circle class="w" cx="981" cy="446" r="6.65"/><circle class="w" cx="722" cy="182" r="6.65"/><circle cx="480" cy="332" r="6.65"/><circle cx="487" cy="476" r="6.65"/><circle class="w" cx="913" cy="445" r="6.65"/><circle cx="444" cy="268" r="6.65"/><circle class="w" cx="900" cy="575" r="6.65"/><circle class="w" cx="948" cy="538" r="6.65"/><circle class="w" cx="758" cy="320" r="6.65"/><circle class="w" cx="971" cy="568" r="6.65"/><circle class="w" cx="897" cy="534" r="6.65"/><circle class="w" cx="1007" cy="252" r="6.65"/><circle cx="372" cy="265" r="6.65"/><circle cx="440" cy="478" r="6.65"/><circle cx="452" cy="284" r="6.65"/><circle class="w" cx="870" cy="559" r="6.65"/><circle class="w" cx="785" cy="284" r="6.65"/><circle cx="440" cy="431" r="6.65"/><circle class="w" cx="853" cy="504" r="6.65"/><circle class="w" cx="799" cy="353" r="6.65"/><circle class="w" cx="826" cy="248" r="6.65"/><circle class="w" cx="918" cy="344" r="6.65"/><circle cx="536" cy="481" r="6.65"/><circle class="w" cx="979" cy="247" r="6.65"/><circle cx="461" cy="459" r="6.65"/><circle class="w" cx="788" cy="561" r="6.65"/><circle cx="454" cy="647" r="6.65"/><circle class="w" cx="828" cy="404" r="6.65"/><circle class="w" cx="883" cy="610" r="6.65"/><circle cx="544" cy="455" r="6.65"/><circle cx="466" cy="509" r="6.65"/><circle cx="469" cy="252" r="6.65"/><circle class="w" cx="981" cy="329" r="6.65"/><circle cx="486" cy="583" r="6.65"/><circle cx="470" cy="635" r="6.65"/><circle cx="500" cy="247" r="6.65"/><circle class="w" cx="775" cy="442" r="6.65"/><circle cx="430" cy="332" r="6.65"/><circle cx="491" cy="274" r="6.65"/><circle cx="481" cy="522" r="6.65"/><circle cx="407" cy="440" r="6.65"/><circle class="w" cx="927" cy="477" r="6.65"/><circle cx="453" cy="531" r="6.65"/><circle class="w" cx="784" cy="385" r="6.65"/><circle class="w" cx="966" cy="341" r="6.65"/><circle class="w" cx="959" cy="319" r="6.65"/><circle class="w" cx="926" cy="625" r="6.65"/><circle class="w" cx="1010" cy="196" r="6.65"/><circle cx="452" cy="183" r="6.65"/><circle cx="558" cy="470" r="6.65"/><circle class="w" cx="855" cy="408" r="6.65"/><circle cx="415" cy="275" r="6.65"/><circle class="w" cx="832" cy="624" r="6.65"/><circle class="w" cx="972" cy="485" r="6.65"/><circle class="w" cx="1001" cy="270" r="6.65"/><circle class="w" cx="949" cy="482" r="6.65"/><circle class="w" cx="978" cy="267" r="6.65"/><circle cx="429" cy="553" r="6.65"/><circle cx="551" cy="587" r="6.65"/><circle cx="474" cy="359" r="6.65"/><circle class="w" cx="863" cy="476" r="6.65"/><circle cx="514" cy="605" r="6.65"/><circle class="w" cx="957" cy="601" r="6.65"/><circle cx="380" cy="182" r="6.65"/><circle class="w" cx="925" cy="651" r="6.65"/><circle cx="436" cy="636" r="6.65"/><circle class="w" cx="953" cy="439" r="6.65"/><circle class="w" cx="986" cy="284" r="6.65"/><circle class="w" cx="857" cy="581" r="6.65"/><circle class="w" cx="939" cy="191" r="6.65"/><circle class="w" cx="826" cy="456" r="6.65"/><circle cx="576" cy="351" r="6.65"/><circle class="w" cx="675" cy="195" r="6.65"/><circle cx="461" cy="217" r="6.65"/><circle class="w" cx="767" cy="238" r="6.65"/><circle cx="421" cy="295" r="6.65"/><circle class="w" cx="710" cy="615" r="6.65"/><circle class="w" cx="791" cy="608" r="6.65"/><circle class="w" cx="936" cy="669" r="6.65"/><circle cx="402" cy="458" r="6.65"/><circle cx="503" cy="195" r="6.65"/><circle class="w" cx="948" cy="617" r="6.65"/><circle cx="431" cy="493" r="6.65"/><circle class="w" cx="640" cy="338" r="6.65"/><circle class="w" cx="1006" cy="305" r="6.65"/><circle class="w" cx="1002" cy="234" r="6.65"/><circle cx="466" cy="409" r="6.65"/><circle class="w" cx="932" cy="329" r="6.65"/><circle cx="544" cy="570" r="6.65"/><circle cx="413" cy="336" r="6.65"/><circle class="w" cx="848" cy="342" r="6.65"/><circle cx="409" cy="218" r="6.65"/><circle cx="373" cy="227" r="6.65"/><circle class="w" cx="910" cy="427" r="6.65"/><circle class="w" cx="862" cy="441" r="6.65"/><circle class="w" cx="703" cy="634" r="6.65"/><circle cx="450" cy="565" r="6.65"/><circle cx="503" cy="662" r="6.65"/><circle class="w" cx="908" cy="324" r="6.65"/><circle cx="439" cy="209" r="6.65"/><circle class="w" cx="957" cy="370" r="6.65"/><circle class="w" cx="862" cy="643" r="6.65"/><circle class="w" cx="654" cy="557" r="6.65"/><circle cx="441" cy="617" r="6.65"/><circle class="w" cx="919" cy="209" r="6.65"/><circle cx="514" cy="300" r="6.65"/><circle class="w" cx="873" cy="198" r="6.65"/><circle class="w" cx="908" cy="196" r="6.65"/><circle class="w" cx="898" cy="645" r="6.65"/><circle class="w" cx="956" cy="465" r="6.65"/><circle class="w" cx="936" cy="268" r="6.65"/><circle cx="564" cy="391" r="6.65"/><circle cx="409" cy="395" r="6.65"/><circle cx="464" cy="271" r="6.65"/><circle cx="390" cy="218" r="6.65"/><circle class="w" cx="994" cy="362" r="6.65"/><circle class="w" cx="967" cy="298" r="6.65"/><circle class="w" cx="914" cy="565" r="6.65"/><circle class="w" cx="791" cy="235" r="6.65"/><circle cx="574" cy="195" r="6.65"/><circle class="w" cx="870" cy="497" r="6.65"/><circle cx="438" cy="244" r="6.65"/><circle class="w" cx="815" cy="344" r="6.65"/><circle class="w" cx="841" cy="193" r="6.65"/><circle class="w" cx="909" cy="499" r="6.65"/><circle class="w" cx="969" cy="212" r="6.65"/><circle cx="550" cy="404" r="6.65"/><circle class="w" cx="926" cy="361" r="6.65"/><circle class="w" cx="976" cy="373" r="6.65"/><circle cx="425" cy="458" r="6.65"/><circle class="w" cx="951" cy="352" r="6.65"/><circle cx="393" cy="249" r="6.65"/><circle class="w" cx="658" cy="200" r="6.65"/><circle class="w" cx="875" cy="517" r="6.65"/><circle cx="457" cy="368" r="6.65"/><circle class="w" cx="624" cy="504" r="6.65"/><circle class="w" cx="858" cy="272" r="6.65"/><circle cx="436" cy="282" r="6.65"/><circle cx="501" cy="634" r="6.65"/><circle class="w" cx="890" cy="419" r="6.65"/><circle cx="510" cy="551" r="6.65"/><circle class="w" cx="892" cy="399" r="6.65"/><circle cx="414" cy="314" r="6.65"/><circle cx="410" cy="415" r="6.65"/><circle cx="493" cy="507" r="6.65"/><circle class="w" cx="748" cy="529" r="6.65"/><circle cx="518" cy="575" r="6.65"/><circle class="w" cx="939" cy="377" r="6.65"/><circle cx="505" cy="318" r="6.65"/><circle class="w" cx="828" cy="644" r="6.65"/><circle class="w" cx="912" cy="233" r="6.65"/><circle cx="605" cy="595" r="6.65"/><circle class="w" cx="811" cy="187" r="6.65"/><circle class="w" cx="857" cy="622" r="6.65"/><circle class="w" cx="948" cy="419" r="6.65"/><circle cx="430" cy="409" r="6.65"/><circle cx="461" cy="317" r="6.65"/><circle class="w" cx="637" cy="383" r="6.65"/><circle class="w" cx="878" cy="226" r="6.65"/><circle cx="488" cy="413" r="6.65"/><circle cx="487" cy="431" r="6.65"/><circle cx="578" cy="476" r="6.65"/><circle class="w" cx="885" cy="360" r="6.65"/><circle class="w" cx="889" cy="587" r="6.65"/><circle class="w" cx="924" cy="401" r="6.65"/><circle cx="565" cy="532" r="6.65"/><circle class="w" cx="841" cy="540" r="6.65"/><circle class="w" cx="798" cy="507" r="6.65"/><circle cx="548" cy="523" r="6.65"/><circle class="w" cx="854" cy="371" r="6.65"/><circle cx="521" cy="474" r="6.65"/><circle cx="436" cy="578" r="6.65"/><circle cx="511" cy="283" r="6.65"/><circle cx="490" cy="561" r="6.65"/><circle class="w" cx="783" cy="663" r="6.65"/><circle cx="561" cy="258" r="6.65"/><circle class="w" cx="995" cy="216" r="6.65"/><circle cx="480" cy="315" r="6.65"/><circle cx="394" cy="339" r="6.65"/><circle cx="478" cy="187" r="6.65"/><circle class="w" cx="953" cy="244" r="6.65"/><circle cx="556" cy="646" r="6.65"/><circle class="w" cx="715" cy="594" r="6.65"/><circle class="w" cx="785" cy="459" r="6.65"/><circle class="w" cx="900" cy="271" r="6.65"/><circle class="w" cx="983" cy="188" r="6.65"/><circle class="w" cx="885" cy="325" r="6.65"/><circle class="w" cx="874" cy="260" r="6.65"/><circle class="w" cx="810" cy="640" r="6.65"/><circle class="w" cx="931" cy="595" r="6.65"/><circle class="w" cx="932" cy="533" r="6.65"/><circle class="w" cx="831" cy="562" r="6.65"/><circle cx="494" cy="603" r="6.65"/><circle class="w" cx="948" cy="565" r="6.65"/><circle class="w" cx="758" cy="188" r="6.65"/><circle class="w" cx="873" cy="374" r="6.65"/><circle cx="605" cy="666" r="6.65"/><circle cx="445" cy="597" r="6.65"/><circle class="w" cx="894" cy="344" r="6.65"/><circle class="w" cx="846" cy="257" r="6.65"/><circle cx="497" cy="446" r="6.65"/><circle class="w" cx="842" cy="517" r="6.65"/><circle class="w" cx="941" cy="454" r="6.65"/><circle cx="512" cy="516" r="6.65"/><circle class="w" cx="730" cy="674" r="6.65"/><circle cx="578" cy="667" r="6.65"/><circle cx="527" cy="335" r="6.65"/><circle class="w" cx="928" cy="501" r="6.65"/><circle class="w" cx="880" cy="546" r="6.65"/><circle cx="482" cy="648" r="6.65"/><circle class="w" cx="967" cy="450" r="6.65"/><circle cx="458" cy="624" r="6.65"/><circle cx="439" cy="372" r="6.65"/><circle cx="593" cy="581" r="6.65"/><circle class="w" cx="816" cy="540" r="6.65"/><circle cx="442" cy="515" r="6.65"/><circle cx="455" cy="480" r="6.65"/><circle cx="507" cy="428" r="6.65"/><circle cx="477" cy="452" r="6.65"/><circle class="w" cx="864" cy="538" r="6.65"/><circle cx="446" cy="336" r="6.65"/><circle cx="518" cy="184" r="6.65"/><circle class="w" cx="938" cy="639" r="6.65"/><circle class="w" cx="972" cy="412" r="6.65"/><circle cx="484" cy="539" r="6.65"/><circle class="w" cx="847" cy="458" r="6.65"/><circle cx="444" cy="400" r="6.65"/><circle cx="516" cy="497" r="6.65"/><circle class="w" cx="898" cy="290" r="6.65"/><circle cx="585" cy="377" r="6.65"/><circle class="w" cx="908" cy="660" r="6.65"/><circle class="w" cx="895" cy="485" r="6.65"/><circle class="w" cx="889" cy="503" r="6.65"/><circle class="w" cx="793" cy="325" r="6.65"/><circle class="w" cx="829" cy="606" r="6.65"/><circle class="w" cx="750" cy="670" r="6.65"/><circle class="w" cx="963" cy="260" r="6.65"/><circle cx="395" cy="185" r="6.65"/><circle cx="462" cy="297" r="6.65"/><circle class="w" cx="834" cy="496" r="6.65"/><circle cx="456" cy="549" r="6.65"/><circle class="w" cx="871" cy="415" r="6.65"/><circle class="w" cx="701" cy="189" r="6.65"/><circle cx="483" cy="294" r="6.65"/><circle class="w" cx="895" cy="451" r="6.65"/><circle cx="392" cy="271" r="6.65"/><circle cx="410" cy="242" r="6.65"/><circle cx="406" cy="358" r="6.65"/><circle class="w" cx="902" cy="251" r="6.65"/><circle class="w" cx="899" cy="220" r="6.65"/><circle cx="417" cy="379" r="6.65"/><circle cx="532" cy="441" r="6.65"/><circle class="w" cx="865" cy="356" r="6.65"/><circle class="w" cx="798" cy="623" r="6.65"/><circle class="w" cx="845" cy="647" r="6.65"/><circle cx="474" cy="612" r="6.65"/><circle cx="439" cy="191" r="6.65"/><circle cx="547" cy="335" r="6.65"/><circle cx="454" cy="254" r="6.65"/><circle cx="428" cy="228" r="6.65"/><circle cx="512" cy="212" r="6.65"/><circle class="w" cx="761" cy="264" r="6.65"/><circle class="w" cx="830" cy="366" r="6.65"/><circle class="w" cx="933" cy="429" r="6.65"/><circle class="w" cx="917" cy="376" r="6.65"/><circle class="w" cx="900" cy="519" r="6.65"/><circle class="w" cx="775" cy="280" r="6.65"/><circle cx="558" cy="486" r="6.65"/><circle class="w" cx="773" cy="585" r="6.65"/><circle cx="589" cy="649" r="6.65"/><circle class="w" cx="975" cy="394" r="6.65"/><circle cx="542" cy="663" r="6.65"/><circle class="w" cx="738" cy="184" r="6.65"/><circle class="w" cx="902" cy="309" r="6.65"/><circle cx="479" cy="378" r="6.65"/><circle class="w" cx="731" cy="439" r="6.65"/><circle class="w" cx="878" cy="479" r="6.65"/><circle cx="485" cy="629" r="6.65"/><circle class="w" cx="858" cy="330" r="6.65"/><circle class="w" cx="784" cy="640" r="6.65"/><circle cx="491" cy="489" r="6.65"/><circle class="w" cx="773" cy="553" r="6.65"/><circle cx="495" cy="333" r="6.65"/><circle cx="522" cy="623" r="6.65"/><circle class="w" cx="849" cy="291" r="6.65"/><circle class="w" cx="911" cy="355" r="6.65"/><circle cx="439" cy="540" r="6.65"/><circle class="w" cx="771" cy="201" r="6.65"/><circle cx="401" cy="205" r="6.65"/><circle cx="462" cy="390" r="6.65"/><circle cx="560" cy="184" r="6.65"/><circle class="w" cx="879" cy="626" r="6.65"/><circle cx="472" cy="339" r="6.65"/><circle class="w" cx="956" cy="548" r="6.65"/><circle cx="419" cy="500" r="6.65"/><circle class="w" cx="632" cy="193" r="6.65"/><circle class="w" cx="740" cy="478" r="6.65"/><circle class="w" cx="938" cy="235" r="6.65"/><circle cx="569" cy="439" r="6.65"/><circle class="w" cx="785" cy="187" r="6.65"/><circle cx="441" cy="675" r="6.65"/><circle class="w" cx="894" cy="604" r="6.65"/><circle class="w" cx="913" cy="599" r="6.65"/><circle class="w" cx="947" cy="400" r="6.65"/><circle cx="529" cy="409" r="6.65"/><circle cx="565" cy="319" r="6.65"/><circle cx="519" cy="457" r="6.65"/><circle cx="474" cy="553" r="6.65"/><circle class="w" cx="733" cy="224" r="6.65"/><circle cx="488" cy="396" r="6.65"/><circle cx="441" cy="299" r="6.65"/><circle class="w" cx="816" cy="229" r="6.65"/><circle class="w" cx="969" cy="277" r="6.65"/><circle cx="517" cy="537" r="6.65"/><circle cx="445" cy="419" r="6.65"/><circle class="w" cx="835" cy="221" r="6.65"/><circle class="w" cx="878" cy="442" r="6.65"/><circle class="w" cx="980" cy="307" r="6.65"/><circle class="w" cx="970" cy="471" r="6.65"/><circle cx="448" cy="354" r="6.65"/><circle class="w" cx="948" cy="590" r="6.65"/><circle cx="499" cy="575" r="6.65"/><circle class="w" cx="874" cy="460" r="6.65"/><circle class="w" cx="732" cy="201" r="6.65"/><circle cx="463" cy="594" r="6.65"/><circle cx="487" cy="666" r="6.65"/><circle class="w" cx="870" cy="589" r="6.65"/><circle class="w" cx="684" cy="597" r="6.65"/><circle cx="533" cy="241" r="6.65"/><circle class="w" cx="906" cy="538" r="6.65"/><circle class="w" cx="926" cy="278" r="6.65"/><circle cx="481" cy="257" r="6.65"/><circle class="w" cx="776" cy="354" r="6.65"/><circle cx="551" cy="222" r="6.65"/><circle class="w" cx="884" cy="302" r="6.65"/><circle class="w" cx="890" cy="195" r="6.65"/><circle cx="526" cy="371" r="6.65"/><circle cx="517" cy="394" r="6.65"/><circle cx="534" cy="644" r="6.65"/><circle cx="465" cy="533" r="6.65"/><circle class="w" cx="871" cy="661" r="6.65"/><circle cx="458" cy="664" r="6.65"/><circle class="w" cx="818" cy="503" r="6.65"/><circle class="w" cx="917" cy="514" r="6.65"/><circle class="w" cx="918" cy="631" r="6.65"/><circle cx="547" cy="203" r="6.65"/><circle class="w" cx="933" cy="555" r="6.65"/><circle cx="529" cy="200" r="6.65"/><circle cx="454" cy="461" r="6.65"/><circle class="w" cx="853" cy="421" r="6.65"/><circle cx="528" cy="563" r="6.65"/><circle class="w" cx="796" cy="543" r="6.65"/><circle class="w" cx="984" cy="205" r="6.65"/><circle class="w" cx="847" cy="441" r="6.65"/><circle cx="560" cy="663" r="6.65"/><circle cx="446" cy="641" r="6.65"/><circle cx="479" cy="275" r="6.65"/><circle class="w" cx="936" cy="316" r="6.65"/><circle class="w" cx="917" cy="261" r="6.65"/><circle class="w" cx="938" cy="486" r="6.65"/><circle class="w" cx="984" cy="254" r="6.65"/><circle class="w" cx="846" cy="610" r="6.65"/><circle cx="400" cy="322" r="6.65"/><circle class="w" cx="908" cy="438" r="6.65"/><circle class="w" cx="787" cy="295" r="6.65"/><circle class="w" cx="884" cy="528" r="6.65"/><circle class="w" cx="828" cy="529" r="6.65"/><circle cx="497" cy="306" r="6.65"/><circle class="w" cx="844" cy="590" r="6.65"/><circle cx="534" cy="489" r="6.65"/><circle class="w" cx="633" cy="627" r="6.65"/><circle class="w" cx="881" cy="570" r="6.65"/><circle cx="453" cy="497" r="6.65"/><circle class="w" cx="911" cy="337" r="6.65"/><circle class="w" cx="929" cy="613" r="6.65"/><circle class="w" cx="907" cy="578" r="6.65"/><circle class="w" cx="988" cy="232" r="6.65"/><circle cx="431" cy="561" r="6.65"/><circle class="w" cx="945" cy="278" r="6.65"/><circle class="w" cx="787" cy="444" r="6.65"/><circle class="w" cx="1003" cy="187" r="6.65"/><circle class="w" cx="928" cy="346" r="6.65"/><circle cx="524" cy="352" r="6.65"/><circle class="w" cx="905" cy="393" r="6.65"/><circle class="w" cx="850" cy="183" r="6.65"/><circle cx="511" cy="658" r="6.65"/><circle class="w" cx="849" cy="208" r="6.65"/><circle class="w" cx="919" cy="298" r="6.65"/><circle class="w" cx="803" cy="350" r="6.65"/><circle class="w" cx="842" cy="353" r="6.65"/><circle class="w" cx="931" cy="194" r="6.65"/><circle class="w" cx="968" cy="358" r="6.65"/><circle cx="592" cy="467" r="6.65"/><circle class="w" cx="960" cy="341" r="6.65"/><circle cx="439" cy="260" r="6.65"/><circle cx="547" cy="432" r="6.65"/><circle class="w" cx="925" cy="447" r="6.65"/><circle cx="432" cy="387" r="6.65"/><circle class="w" cx="956" cy="495" r="6.65"/><circle class="w" cx="971" cy="240" r="6.65"/><circle class="w" cx="942" cy="297" r="6.65"/><circle class="w" cx="873" cy="641" r="6.65"/><circle cx="547" cy="453" r="6.65"/><circle class="w" cx="976" cy="333" r="6.65"/><circle class="w" cx="657" cy="440" r="6.65"/><circle cx="438" cy="484" r="6.65"/><circle class="w" cx="862" cy="488" r="6.65"/><circle cx="606" cy="455" r="6.65"/><circle class="w" cx="801" cy="560" r="6.65"/><circle class="w" cx="906" cy="414" r="6.65"/><circle cx="543" cy="579" r="6.65"/><circle cx="491" cy="520" r="6.65"/><circle class="w" cx="802" cy="586" r="6.65"/><circle class="w" cx="730" cy="508" r="6.65"/><circle class="w" cx="873" cy="340" r="6.65"/><circle class="w" cx="901" cy="370" r="6.65"/><circle class="w" cx="816" cy="655" r="6.65"/><circle class="w" cx="651" cy="514" r="6.65"/><circle class="w" cx="861" cy="258" r="6.65"/><circle cx="483" cy="235" r="6.65"/><circle class="w" cx="946" cy="469" r="6.65"/><circle class="w" cx="673" cy="386" r="6.65"/><circle cx="496" cy="548" r="6.65"/><circle class="w" cx="911" cy="477" r="6.65"/><circle class="w" cx="833" cy="427" r="6.65"/><circle class="w" cx="887" cy="266" r="6.65"/><circle cx="477" cy="423" r="6.65"/><circle cx="506" cy="475" r="6.65"/><circle cx="448" cy="318" r="6.65"/><circle class="w" cx="956" cy="209" r="6.65"/><circle class="w" cx="914" cy="215" r="6.65"/><circle class="w" cx="667" cy="551" r="6.65"/><circle cx="567" cy="563" r="6.65"/><circle cx="554" cy="596" r="6.65"/><circle class="w" cx="936" cy="387" r="6.65"/><circle class="w" cx="684" cy="185" r="6.65"/><circle class="w" cx="920" cy="239" r="6.65"/><circle class="w" cx="894" cy="641" r="6.65"/><circle cx="503" cy="407" r="6.65"/><circle cx="430" cy="244" r="6.65"/><circle class="w" cx="814" cy="443" r="6.65"/><circle cx="563" cy="409" r="6.65"/><circle cx="487" cy="588" r="6.65"/><circle class="w" cx="956" cy="230" r="6.65"/><circle class="w" cx="923" cy="652" r="6.65"/><circle class="w" cx="948" cy="257" r="6.65"/><circle class="w" cx="620" cy="210" r="6.65"/><circle cx="547" cy="258" r="6.65"/><circle cx="414" cy="270" r="6.65"/><circle class="w" cx="886" cy="408" r="6.65"/><circle class="w" cx="827" cy="460" r="6.65"/><circle class="w" cx="894" cy="550" r="6.65"/><circle cx="579" cy="337" r="6.65"/><circle cx="446" cy="436" r="6.65"/><circle cx="575" cy="422" r="6.65"/><circle class="w" cx="856" cy="470" r="6.65"/><circle class="w" cx="743" cy="270" r="6.65"/><circle class="w" cx="934" cy="214" r="6.65"/><circle class="w" cx="805" cy="404" r="6.65"/><circle cx="559" cy="352" r="6.65"/><circle class="w" cx="906" cy="617" r="6.65"/><circle cx="457" cy="219" r="6.65"/><circle class="w" cx="829" cy="671" r="6.65"/><circle cx="509" cy="360" r="6.65"/><circle cx="399" cy="224" r="6.65"/><circle cx="608" cy="582" r="6.65"/><circle class="w" cx="866" cy="192" r="6.65"/><circle class="w" cx="847" cy="630" r="6.65"/><circle class="w" cx="847" cy="529" r="6.65"/><circle cx="566" cy="199" r="6.65"/><circle cx="586" cy="201" r="6.65"/><circle cx="533" cy="546" r="6.65"/><circle cx="409" cy="340" r="6.65"/><circle cx="505" cy="619" r="6.65"/><circle class="w" cx="908" cy="279" r="6.65"/><circle cx="425" cy="186" r="6.65"/><circle cx="467" cy="189" r="6.65"/><circle class="w" cx="962" cy="295" r="6.65"/><circle class="w" cx="908" cy="197" r="6.65"/><circle cx="432" cy="342" r="6.65"/><circle class="w" cx="787" cy="509" r="6.65"/><circle class="w" cx="819" cy="594" r="6.65"/><circle cx="506" cy="597" r="6.65"/><circle class="w" cx="888" cy="426" r="6.65"/><circle cx="570" cy="626" r="6.65"/><circle cx="478" cy="208" r="6.65"/><circle class="w" cx="930" cy="367" r="6.65"/><circle class="w" cx="946" cy="354" r="6.65"/><circle cx="512" cy="338" r="6.65"/><circle cx="538" cy="623" r="6.65"/><circle cx="573" cy="646" r="6.65"/><circle cx="433" cy="213" r="6.65"/><circle class="w" cx="814" cy="371" r="6.65"/><circle class="w" cx="875" cy="320" r="6.65"/><circle cx="418" cy="310" r="6.65"/><circle class="w" cx="750" cy="592" r="6.65"/><circle class="w" cx="710" cy="259" r="6.65"/><circle cx="537" cy="279" r="6.65"/><circle cx="466" cy="363" r="6.65"/><circle cx="403" cy="254" r="6.65"/><circle class="w" cx="840" cy="566" r="6.65"/><circle class="w" cx="725" cy="423" r="6.65"/><circle cx="624" cy="543" r="6.65"/><circle class="w" cx="652" cy="540" r="6.65"/><circle class="w" cx="851" cy="391" r="6.65"/><circle cx="447" cy="238" r="6.65"/><circle class="w" cx="865" cy="605" r="6.65"/><circle class="w" cx="877" cy="382" r="6.65"/><circle cx="473" cy="405" r="6.65"/><circle cx="471" cy="482" r="6.65"/><circle class="w" cx="746" cy="302" r="6.65"/><circle class="w" cx="917" cy="315" r="6.65"/><circle cx="590" cy="321" r="6.65"/><circle cx="527" cy="587" r="6.65"/><circle class="w" cx="956" cy="190" r="6.65"/><circle class="w" cx="698" cy="494" r="6.65"/><circle class="w" cx="764" cy="474" r="6.65"/><circle class="w" cx="958" cy="422" r="6.65"/><circle cx="512" cy="636" r="6.65"/><circle cx="433" cy="361" r="6.65"/><circle class="w" cx="929" cy="471" r="6.65"/><circle cx="554" cy="525" r="6.65"/><circle cx="433" cy="276" r="6.65"/><circle cx="617" cy="643" r="6.65"/><circle cx="407" cy="190" r="6.65"/><circle class="w" cx="610" cy="310" r="6.65"/><circle class="w" cx="922" cy="399" r="6.65"/><circle class="w" cx="796" cy="386" r="6.65"/><circle cx="568" cy="608" r="6.65"/><circle class="w" cx="831" cy="643" r="6.65"/><circle cx="581" cy="304" r="6.65"/><circle cx="597" cy="400" r="6.65"/><circle cx="546" cy="560" r="6.65"/><circle cx="508" cy="444" r="6.65"/><circle class="w" cx="908" cy="672" r="6.65"/><circle class="w" cx="717" cy="524" r="6.65"/><circle class="w" cx="685" cy="663" r="6.65"/><circle cx="586" cy="501" r="6.65"/><circle cx="453" cy="376" r="6.65"/><circle class="w" cx="817" cy="569" r="6.65"/><circle class="w" cx="839" cy="546" r="6.65"/><circle cx="533" cy="605" r="6.65"/><circle class="w" cx="852" cy="276" r="6.65"/><circle class="w" cx="926" cy="669" r="6.65"/><circle class="w" cx="965" cy="377" r="6.65"/><circle class="w" cx="833" cy="192" r="6.65"/><circle class="w" cx="921" cy="498" r="6.65"/><circle cx="497" cy="289" r="6.65"/><circle cx="482" cy="497" r="6.65"/><circle class="w" cx="920" cy="425" r="6.65"/><circle cx="453" cy="339" r="6.65"/><circle cx="494" cy="654" r="6.65"/><circle class="w" cx="684" cy="205" r="6.65"/><circle class="w" cx="837" cy="377" r="6.65"/><circle class="w" cx="878" cy="240" r="6.65"/><circle class="w" cx="762" cy="315" r="6.65"/><circle class="w" cx="885" cy="490" r="6.65"/><circle cx="460" cy="277" r="6.65"/><circle class="w" cx="718" cy="556" r="6.65"/><circle class="w" cx="920" cy="530" r="6.65"/><circle class="w" cx="881" cy="676" r="6.65"/><circle cx="523" cy="291" r="6.65"/><circle cx="419" cy="398" r="6.65"/><circle class="w" cx="911" cy="459" r="6.65"/><circle cx="621" cy="611" r="6.65"/><circle class="w" cx="828" cy="404" r="6.65"/><circle class="w" cx="768" cy="426" r="6.65"/><circle class="w" cx="833" cy="477" r="6.65"/><circle cx="550" cy="645" r="6.65"/><circle class="w" cx="698" cy="532" r="6.65"/><circle class="w" cx="855" cy="318" r="6.65"/><circle cx="521" cy="505" r="6.65"/><circle cx="486" cy="443" r="6.65"/><circle cx="594" cy="571" r="6.65"/><circle cx="513" cy="377" r="6.65"/><circle cx="441" cy="600" r="6.65"/><circle class="w" cx="726" cy="267" r="6.65"/><circle class="w" cx="810" cy="536" r="6.65"/><circle class="w" cx="838" cy="240" r="6.65"/><circle class="w" cx="626" cy="227" r="6.65"/><circle class="w" cx="936" cy="582" r="6.65"/><circle class="w" cx="866" cy="527" r="6.65"/><circle class="w" cx="988" cy="190" r="6.65"/><circle class="w" cx="744" cy="235" r="6.65"/><circle cx="429" cy="419" r="6.65"/><circle class="w" cx="877" cy="363" r="6.65"/><circle cx="544" cy="478" r="6.65"/><circle class="w" cx="863" cy="222" r="6.65"/><circle class="w" cx="867" cy="399" r="6.65"/><circle cx="438" cy="403" r="6.65"/><circle cx="453" cy="477" r="6.65"/><circle class="w" cx="875" cy="545" r="6.65"/><circle class="w" cx="888" cy="619" r="6.65"/><circle cx="496" cy="424" r="6.65"/><circle class="w" cx="736" cy="672" r="6.65"/><circle cx="577" cy="544" r="6.65"/><circle class="w" cx="898" cy="591" r="6.65"/><circle class="w" cx="809" cy="190" r="6.65"/><circle cx="451" cy="539" r="6.65"/><circle class="w" cx="844" cy="259" r="6.65"/><circle class="w" cx="746" cy="198" r="6.65"/><circle class="w" cx="662" cy="407" r="6.65"/><circle cx="584" cy="267" r="6.65"/><circle cx="470" cy="670" r="6.65"/><circle class="w" cx="933" cy="267" r="6.65"/><circle class="w" cx="776" cy="211" r="6.65"/><circle cx="441" cy="511" r="6.65"/><circle class="w" cx="936" cy="504" r="6.65"/><circle class="w" cx="858" cy="586" r="6.65"/><circle class="w" cx="640" cy="447" r="6.65"/><circle cx="544" cy="191" r="6.65"/><circle class="w" cx="767" cy="640" r="6.65"/><circle cx="473" cy="291" r="6.65"/><circle cx="595" cy="419" r="6.65"/><circle class="w" cx="743" cy="216" r="6.65"/><circle cx="451" cy="626" r="6.65"/><circle class="w" cx="977" cy="217" r="6.65"/><circle cx="484" cy="339" r="6.65"/><circle class="w" cx="758" cy="492" r="6.65"/><circle class="w" cx="856" cy="650" r="6.65"/><circle class="w" cx="958" cy="396" r="6.65"/><circle cx="409" cy="210" r="6.65"/><circle cx="447" cy="559" r="6.65"/><circle class="w" cx="807" cy="216" r="6.65"/><circle class="w" cx="900" cy="257" r="6.65"/><circle class="w" cx="938" cy="525" r="6.65"/><circle class="w" cx="892" cy="341" r="6.65"/><circle class="w" cx="964" cy="255" r="6.65"/><circle class="w" cx="831" cy="442" r="6.65"/><circle cx="489" cy="478" r="6.65"/><circle cx="479" cy="603" r="6.65"/><circle cx="638" cy="524" r="6.65"/><circle class="w" cx="938" cy="425" r="6.65"/><circle cx="489" cy="370" r="6.65"/><circle class="w" cx="656" cy="389" r="6.65"/><circle cx="457" cy="202" r="6.65"/><circle cx="466" cy="238" r="6.65"/><circle class="w" cx="812" cy="472" r="6.65"/><circle cx="466" cy="464" r="6.65"/><circle cx="459" cy="650" r="6.65"/><circle class="w" cx="967" cy="311" r="6.65"/><circle cx="533" cy="441" r="6.65"/><circle class="w" cx="644" cy="590" r="6.65"/><circle cx="539" cy="340" r="6.65"/><circle cx="534" cy="380" r="6.65"/><circle class="w" cx="866" cy="503" r="6.65"/><circle class="w" cx="956" cy="328" r="6.65"/><circle cx="450" cy="580" r="6.65"/><circle cx="489" cy="623" r="6.65"/><circle cx="468" cy="546" r="6.65"/><circle class="w" cx="872" cy="476" r="6.65"/><circle cx="523" cy="650" r="6.65"/><circle class="w" cx="792" cy="325" r="6.65"/><circle class="w" cx="892" cy="292" r="6.65"/><circle cx="606" cy="603" r="6.65"/><circle class="w" cx="869" cy="621" r="6.65"/><circle class="w" cx="764" cy="194" r="6.65"/><circle class="w" cx="922" cy="569" r="6.65"/><circle cx="477" cy="563" r="6.65"/><circle cx="518" cy="525" r="6.65"/><circle class="w" cx="862" cy="449" r="6.65"/><circle class="w" cx="762" cy="677" r="6.65"/><circle class="w" cx="768" cy="555" r="6.65"/><circle cx="436" cy="466" r="6.65"/><circle class="w" cx="905" cy="518" r="6.65"/><circle cx="489" cy="673" r="6.65"/><circle class="w" cx="786" cy="485" r="6.65"/><circle cx="537" cy="530" r="6.65"/><circle class="w" cx="721" cy="599" r="6.65"/><circle cx="604" cy="673" r="6.65"/><circle cx="537" cy="421" r="6.65"/><circle cx="463" cy="444" r="6.65"/><circle class="w" cx="934" cy="327" r="6.65"/><circle cx="568" cy="517" r="6.65"/><circle class="w" cx="940" cy="239" r="6.65"/><circle cx="635" cy="645" r="6.65"/><circle cx="589" cy="523" r="6.65"/><circle class="w" cx="787" cy="582" r="6.65"/><circle class="w" cx="848" cy="407" r="6.65"/><circle cx="549" cy="214" r="6.65"/><circle cx="483" cy="192" r="6.65"/><circle cx="551" cy="608" r="6.65"/><circle cx="624" cy="629" r="6.65"/><circle class="w" cx="876" cy="562" r="6.65"/><circle cx="481" cy="532" r="6.65"/><circle cx="461" cy="523" r="6.65"/><circle class="w" cx="839" cy="617" r="6.65"/><circle cx="584" cy="656" r="6.65"/><circle cx="506" cy="323" r="6.65"/><circle cx="541" cy="659" r="6.65"/><circle class="w" cx="902" cy="325" r="6.65"/><circle cx="470" cy="256" r="6.65"/><circle cx="613" cy="336" r="6.65"/><circle class="w" cx="803" cy="518" r="6.65"/><circle cx="478" cy="513" r="6.65"/><circle cx="549" cy="288" r="6.65"/><circle class="w" cx="799" cy="617" r="6.65"/><circle cx="557" cy="466" r="6.65"/><circle cx="439" cy="190" r="6.65"/><circle class="w" cx="833" cy="358" r="6.65"/><circle class="w" cx="799" cy="436" r="6.65"/><circle class="w" cx="612" cy="241" r="6.65"/><circle cx="604" cy="357" r="6.65"/><circle class="w" cx="934" cy="544" r="6.65"/><circle class="w" cx="879" cy="460" r="6.65"/><circle class="w" cx="876" cy="304" r="6.65"/><circle cx="471" cy="377" r="6.65"/><circle class="w" cx="874" cy="434" r="6.65"/><circle class="w" cx="712" cy="629" r="6.65"/><circle cx="531" cy="204" r="6.65"/><circle class="w" cx="818" cy="237" r="6.65"/><circle cx="513" cy="257" r="6.65"/><circle cx="441" cy="449" r="6.65"/><circle class="w" cx="653" cy="556" r="6.65"/><circle cx="603" cy="472" r="6.65"/><circle cx="498" cy="391" r="6.65"/><circle cx="553" cy="582" r="6.65"/><circle class="w" cx="949" cy="219" r="6.65"/><circle class="w" cx="916" cy="441" r="6.65"/><circle class="w" cx="861" cy="243" r="6.65"/><circle cx="434" cy="325" r="6.65"/><circle class="w" cx="919" cy="252" r="6.65"/><circle class="w" cx="893" cy="664" r="6.65"/><circle class="w" cx="908" cy="652" r="6.65"/><circle class="w" cx="867" cy="664" r="6.65"/><circle class="w" cx="897" cy="380" r="6.65"/><circle cx="498" cy="497" r="6.65"/><circle class="w" cx="856" cy="426" r="6.65"/><circle cx="554" cy="628" r="6.65"/><circle class="w" cx="877" cy="416" r="6.65"/><circle cx="468" cy="628" r="6.65"/><circle cx="496" cy="353" r="6.65"/><circle class="w" cx="844" cy="344" r="6.65"/><circle class="w" cx="902" cy="487" r="6.65"/><circle cx="466" cy="496" r="6.65"/><circle class="w" cx="948" cy="374" r="6.65"/><circle cx="438" cy="305" r="6.65"/><circle class="w" cx="661" cy="506" r="6.65"/><circle class="w" cx="616" cy="197" r="6.65"/><circle cx="458" cy="303" r="6.65"/><circle class="w" cx="787" cy="562" r="6.65"/><circle class="w" cx="914" cy="624" r="6.65"/><circle cx="530" cy="241" r="6.65"/><circle class="w" cx="844" cy="665" r="6.65"/><circle cx="485" cy="320" r="6.65"/><circle class="w" cx="940" cy="406" r="6.65"/><circle cx="606" cy="500" r="6.65"/><circle class="w" cx="919" cy="226" r="6.65"/><circle cx="496" cy="607" r="6.65"/><circle cx="574" cy="350" r="6.65"/><circle class="w" cx="778" cy="626" r="6.65"/><circle class="w" cx="850" cy="602" r="6.65"/><circle class="w" cx="934" cy="344" r="6.65"/><circle class="w" cx="648" cy="320" r="6.65"/><circle class="w" cx="887" cy="532" r="6.65"/><circle class="w" cx="902" cy="558" r="6.65"/><circle class="w" cx="702" cy="669" r="6.65"/><circle class="w" cx="855" cy="566" r="6.65"/><circle class="w" cx="895" cy="439" r="6.65"/><circle cx="446" cy="493" r="6.65"/><circle class="w" cx="884" cy="395" r="6.65"/><circle class="w" cx="936" cy="453" r="6.65"/><circle class="w" cx="805" cy="551" r="6.65"/><circle class="w" cx="871" cy="204" r="6.65"/><circle cx="556" cy="545" r="6.65"/><circle cx="488" cy="408" r="6.65"/><circle class="w" cx="780" cy="651" r="6.65"/><circle class="w" cx="843" cy="580" r="6.65"/><circle class="w" cx="844" cy="211" r="6.65"/><circle cx="482" cy="268" r="6.65"/><circle cx="435" cy="386" r="6.65"/><circle class="w" cx="814" cy="354" r="6.65"/><circle class="w" cx="718" cy="539" r="6.65"/><circle class="w" cx="790" cy="192" r="6.65"/><circle cx="523" cy="456" r="6.65"/><circle cx="522" cy="362" r="6.65"/><circle cx="596" cy="588" r="6.65"/><circle class="w" cx="832" cy="420" r="6.65"/><circle class="w" cx="883" cy="190" r="6.65"/><circle cx="448" cy="285" r="6.65"/><circle class="w" cx="831" cy="493" r="6.65"/><circle class="w" cx="881" cy="271" r="6.65"/><circle cx="567" cy="212" r="6.65"/><circle cx="501" cy="546" r="6.65"/><circle cx="416" cy="249" r="6.65"/><circle class="w" cx="655" cy="192" r="6.65"/><circle class="w" cx="913" cy="543" r="6.65"/><circle class="w" cx="831" cy="224" r="6.65"/><circle class="w" cx="962" cy="360" r="6.65"/><circle cx="510" cy="306" r="6.65"/><circle cx="453" cy="321" r="6.65"/><circle cx="566" cy="424" r="6.65"/><circle class="w" cx="927" cy="199" r="6.65"/><circle class="w" cx="783" cy="237" r="6.65"/><circle class="w" cx="893" cy="242" r="6.65"/><circle cx="486" cy="220" r="6.65"/><circle class="w" cx="813" cy="603" r="6.65"/><circle cx="427" cy="204" r="6.65"/><circle cx="535" cy="633" r="6.65"/><circle cx="507" cy="466" r="6.65"/><circle cx="420" cy="286" r="6.65"/><circle class="w" cx="769" cy="364" r="6.65"/><circle cx="586" cy="219" r="6.65"/><circle class="w" cx="840" cy="464" r="6.65"/><circle class="w" cx="723" cy="435" r="6.65"/><circle cx="521" cy="612" r="6.65"/><circle cx="574" cy="474" r="6.65"/><circle cx="463" cy="216" r="6.65"/><circle class="w" cx="885" cy="512" r="6.65"/><circle class="w" cx="908" cy="187" r="6.65"/><circle class="w" cx="916" cy="380" r="6.65"/><circle cx="460" cy="353" r="6.65"/><circle class="w" cx="741" cy="521" r="6.65"/><circle class="w" cx="904" cy="578" r="6.65"/><circle class="w" cx="901" cy="275" r="6.65"/><circle cx="469" cy="427" r="6.65"/><circle cx="483" cy="242" r="6.65"/><circle class="w" cx="764" cy="253" r="6.65"/><circle cx="495" cy="588" r="6.65"/><circle cx="562" cy="191" r="6.65"/><circle class="w" cx="899" cy="204" r="6.65"/><circle cx="537" cy="572" r="6.65"/><circle cx="476" cy="584" r="6.65"/><circle cx="513" cy="590" r="6.65"/><circle class="w" cx="915" cy="476" r="6.65"/><circle cx="545" cy="677" r="6.65"/><circle cx="485" cy="641" r="6.65"/><circle class="w" cx="823" cy="584" r="6.65"/><circle cx="608" cy="430" r="6.65"/><circle class="w" cx="872" cy="592" r="6.65"/><circle class="w" cx="822" cy="540" r="6.65"/><circle class="w" cx="887" cy="640" r="6.65"/><circle class="w" cx="765" cy="440" r="6.65"/><circle class="w" cx="925" cy="308" r="6.65"/><circle class="w" cx="919" cy="410" r="6.65"/><circle class="w" cx="860" cy="380" r="6.65"/><circle class="w" cx="819" cy="256" r="6.65"/><circle cx="573" cy="276" r="6.65"/><circle class="w" cx="707" cy="199" r="6.65"/><circle class="w" cx="943" cy="303" r="6.65"/><circle cx="587" cy="601" r="6.65"/><circle class="w" cx="954" cy="282" r="6.65"/><circle cx="423" cy="341" r="6.65"/><circle cx="626" cy="327" r="6.65"/><circle class="w" cx="898" cy="457" r="6.65"/><circle cx="408" cy="232" r="6.65"/><circle cx="451" cy="254" r="6.65"/><circle class="w" cx="922" cy="586" r="6.65"/><circle class="w" cx="950" cy="259" r="6.65"/><circle class="w" cx="858" cy="262" r="6.65"/><circle class="w" cx="822" cy="637" r="6.65"/><circle class="w" cx="677" cy="374" r="6.65"/><circle class="w" cx="878" cy="228" r="6.65"/><circle cx="474" cy="396" r="6.65"/><circle class="w" cx="868" cy="335" r="6.65"/><circle cx="464" cy="603" r="6.65"/><circle cx="535" cy="551" r="6.65"/><circle class="w" cx="818" cy="287" r="6.65"/><circle cx="506" cy="653" r="6.65"/><circle class="w" cx="843" cy="280" r="6.65"/><circle cx="522" cy="430" r="6.65"/><circle cx="563" cy="325" r="6.65"/><circle class="w" cx="910" cy="362" r="6.65"/><circle cx="563" cy="398" r="6.65"/><circle class="w" cx="663" cy="488" r="6.65"/><circle class="w" cx="853" cy="624" r="6.65"/><circle cx="557" cy="380" r="6.65"/><circle cx="495" cy="204" r="6.65"/><circle cx="540" cy="323" r="6.65"/><circle class="w" cx="864" cy="466" r="6.65"/><circle cx="551" cy="412" r="6.65"/><circle class="w" cx="771" cy="480" r="6.65"/><circle class="w" cx="852" cy="499" r="6.65"/><circle cx="452" cy="404" r="6.65"/><circle cx="613" cy="651" r="6.65"/><circle cx="509" cy="511" r="6.65"/><circle cx="507" cy="416" r="6.65"/><circle class="w" cx="840" cy="533" r="6.65"/><circle cx="583" cy="672" r="6.65"/><circle class="w" cx="887" cy="550" r="6.65"/><circle cx="477" cy="304" r="6.65"/><circle class="w" cx="763" cy="540" r="6.65"/><circle class="w" cx="960" cy="190" r="6.65"/><circle cx="508" cy="447" r="6.65"/><circle class="w" cx="753" cy="318" r="6.65"/><circle cx="579" cy="494" r="6.65"/><circle cx="600" cy="616" r="6.65"/><circle class="w" cx="795" cy="364" r="6.65"/><circle class="w" cx="864" cy="407" r="6.65"/><circle class="w" cx="962" cy="299" r="6.65"/><circle class="w" cx="746" cy="582" r="6.65"/><circle cx="425" cy="231" r="6.65"/><circle class="w" cx="783" cy="338" r="6.65"/><circle class="w" cx="863" cy="313" r="6.65"/><circle class="w" cx="735" cy="473" r="6.65"/><circle class="w" cx="811" cy="567" r="6.65"/><circle class="w" cx="891" cy="365" r="6.65"/><circle class="w" cx="944" cy="358" r="6.65"/><circle class="w" cx="802" cy="274" r="6.65"/><circle class="w" cx="791" cy="289" r="6.65"/><circle cx="585" cy="411" r="6.65"/><circle class="w" cx="745" cy="375" r="6.65"/><circle class="w" cx="797" cy="386" r="6.65"/><circle cx="487" cy="425" r="6.65"/><circle class="w" cx="769" cy="419" r="6.65"/><circle class="w" cx="823" cy="200" r="6.65"/><circle class="w" cx="739" cy="563" r="6.65"/><circle class="w" cx="931" cy="276" r="6.65"/><circle cx="600" cy="316" r="6.65"/><circle cx="544" cy="226" r="6.65"/><circle cx="575" cy="553" r="6.65"/><circle cx="596" cy="392" r="6.65"/><circle cx="616" cy="526" r="6.65"/><circle class="w" cx="747" cy="669" r="6.65"/><circle cx="453" cy="190" r="6.65"/><circle class="w" cx="806" cy="648" r="6.65"/><circle class="w" cx="907" cy="672" r="6.65"/><circle class="w" cx="805" cy="203" r="6.65"/><circle cx="557" cy="347" r="6.65"/><circle class="w" cx="912" cy="501" r="6.65"/><circle class="w" cx="900" cy="223" r="6.65"/><circle cx="498" cy="482" r="6.65"/><circle class="w" cx="962" cy="245" r="6.65"/><circle cx="530" cy="259" r="6.65"/><circle cx="565" cy="671" r="6.65"/><circle cx="638" cy="481" r="6.65"/><circle cx="541" cy="463" r="6.65"/><circle class="w" cx="763" cy="637" r="6.65"/><circle cx="498" cy="257" r="6.65"/><circle class="w" cx="917" cy="459" r="6.65"/><circle cx="592" cy="509" r="6.65"/><circle class="w" cx="927" cy="532" r="6.65"/><circle class="w" cx="687" cy="539" r="6.65"/><circle cx="523" cy="383" r="6.65"/><circle class="w" cx="804" cy="464" r="6.65"/><circle cx="525" cy="662" r="6.65"/><circle class="w" cx="913" cy="605" r="6.65"/><circle class="w" cx="783" cy="466" r="6.65"/><circle cx="488" cy="443" r="6.65"/><circle class="w" cx="871" cy="537" r="6.65"/><circle class="w" cx="882" cy="317" r="6.65"/><circle class="w" cx="803" cy="532" r="6.65"/><circle cx="589" cy="286" r="6.65"/><circle class="w" cx="918" cy="342" r="6.65"/><circle cx="496" cy="295" r="6.65"/><circle cx="551" cy="432" r="6.65"/><circle class="w" cx="883" cy="346" r="6.65"/><circle cx="459" cy="232" r="6.65"/><circle class="w" cx="815" cy="218" r="6.65"/><circle cx="549" cy="481" r="6.65"/><circle class="w" cx="766" cy="498" r="6.65"/><circle cx="487" cy="464" r="6.65"/><circle class="w" cx="893" cy="497" r="6.65"/><circle class="w" cx="737" cy="542" r="6.65"/><circle cx="648" cy="579" r="6.65"/><circle class="w" cx="877" cy="289" r="6.65"/><circle class="w" cx="802" cy="420" r="6.65"/><circle class="w" cx="947" cy="325" r="6.65"/><circle cx="525" cy="534" r="6.65"/><circle class="w" cx="722" cy="189" r="6.65"/><circle class="w" cx="887" cy="583" r="6.65"/><circle cx="431" cy="364" r="6.65"/><circle cx="515" cy="243" r="6.65"/><circle cx="554" cy="531" r="6.65"/><circle class="w" cx="814" cy="393" r="6.65"/><circle class="w" cx="928" cy="240" r="6.65"/><circle cx="480" cy="672" r="6.65"/><circle cx="580" cy="581" r="6.65"/><circle class="w" cx="921" cy="426" r="6.65"/><circle class="w" cx="893" cy="300" r="6.65"/><circle class="w" cx="842" cy="432" r="6.65"/><circle cx="501" cy="337" r="6.65"/><circle cx="467" cy="570" r="6.65"/><circle cx="568" cy="366" r="6.65"/><circle class="w" cx="941" cy="188" r="6.65"/><circle class="w" cx="832" cy="564" r="6.65"/><circle class="w" cx="779" cy="390" r="6.65"/><circle class="w" cx="878" cy="447" r="6.65"/><circle class="w" cx="913" cy="518" r="6.65"/><circle class="w" cx="714" cy="677" r="6.65"/><circle class="w" cx="850" cy="517" r="6.65"/><circle class="w" cx="865" cy="609" r="6.65"/><circle class="w" cx="871" cy="634" r="6.65"/><circle class="w" cx="850" cy="357" r="6.65"/><circle class="w" cx="796" cy="482" r="6.65"/><circle class="w" cx="922" cy="558" r="6.65"/><circle cx="635" cy="526" r="6.65"/><circle class="w" cx="730" cy="609" r="6.65"/><circle cx="564" cy="252" r="6.65"/><circle class="w" cx="913" cy="322" r="6.65"/><circle cx="455" cy="450" r="6.65"/><circle class="w" cx="865" cy="555" r="6.65"/><circle class="w" cx="857" cy="443" r="6.65"/><circle class="w" cx="835" cy="607" r="6.65"/><circle class="w" cx="813" cy="308" r="6.65"/><circle cx="456" cy="336" r="6.65"/><circle class="w" cx="896" cy="653" r="6.65"/><circle class="w" cx="936" cy="214" r="6.65"/><circle cx="541" cy="611" r="6.65"/><circle class="w" cx="806" cy="326" r="6.65"/><circle cx="461" cy="510" r="6.65"/><circle class="w" cx="766" cy="672" r="6.65"/><circle cx="599" cy="666" r="6.65"/><circle class="w" cx="859" cy="676" r="6.65"/><circle cx="471" cy="651" r="6.65"/><circle class="w" cx="764" cy="196" r="6.65"/><circle class="w" cx="840" cy="380" r="6.65"/><circle class="w" cx="864" cy="217" r="6.65"/><circle cx="528" cy="503" r="6.65"/><circle cx="539" cy="282" r="6.65"/><circle class="w" cx="783" cy="592" r="6.65"/><circle class="w" cx="939" cy="380" r="6.65"/><circle cx="642" cy="650" r="6.65"/><circle cx="584" cy="355" r="6.65"/><circle class="w" cx="896" cy="608" r="6.65"/><circle cx="469" cy="463" r="6.65"/><circle class="w" cx="873" cy="361" r="6.65"/><circle class="w" cx="800" cy="345" r="6.65"/><circle cx="451" cy="467" r="6.65"/><circle class="w" cx="846" cy="653" r="6.65"/><circle cx="464" cy="293" r="6.65"/><circle cx="532" cy="407" r="6.65"/><circle class="w" cx="881" cy="566" r="6.65"/><circle class="w" cx="781" cy="572" r="6.65"/><circle cx="493" cy="562" r="6.65"/><circle cx="486" cy="500" r="6.65"/><circle cx="438" cy="337" r="6.65"/><circle cx="465" cy="550" r="6.65"/><circle cx="546" cy="249" r="6.65"/><circle class="w" cx="743" cy="275" r="6.65"/><circle class="w" cx="618" cy="258" r="6.65"/><circle class="w" cx="769" cy="560" r="6.65"/><circle class="w" cx="827" cy="659" r="6.65"/><circle class="w" cx="870" cy="511" r="6.65"/><circle cx="618" cy="625" r="6.65"/><circle class="w" cx="815" cy="623" r="6.65"/><circle cx="471" cy="531" r="6.65"/><circle class="w" cx="900" cy="425" r="6.65"/><circle cx="479" cy="255" r="6.65"/><circle cx="567" cy="437" r="6.65"/><circle cx="526" cy="581" r="6.65"/><circle class="w" cx="926" cy="363" r="6.65"/><circle cx="433" cy="255" r="6.65"/><circle class="w" cx="865" cy="657" r="6.65"/><circle class="w" cx="846" cy="411" r="6.65"/><circle class="w" cx="889" cy="409" r="6.65"/><circle cx="547" cy="511" r="6.65"/><circle class="w" cx="767" cy="342" r="6.65"/><circle cx="521" cy="351" r="6.65"/><circle class="w" cx="853" cy="331" r="6.65"/><circle class="w" cx="741" cy="488" r="6.65"/><circle cx="488" cy="542" r="6.65"/><circle class="w" cx="786" cy="527" r="6.65"/><circle cx="539" cy="357" r="6.65"/><circle class="w" cx="819" cy="679" r="6.65"/><circle cx="483" cy="282" r="6.65"/><circle cx="510" cy="371" r="6.65"/><circle cx="452" cy="432" r="6.65"/><circle class="w" cx="943" cy="343" r="6.65"/><circle class="w" cx="879" cy="676" r="6.65"/><circle cx="507" cy="606" r="6.65"/><circle class="w" cx="892" cy="262" r="6.65"/><circle class="w" cx="708" cy="541" r="6.65"/><circle class="w" cx="833" cy="504" r="6.65"/><circle class="w" cx="857" cy="196" r="6.65"/><circle cx="523" cy="482" r="6.65"/><circle cx="441" cy="235" r="6.65"/><circle class="w" cx="908" cy="237" r="6.65"/><circle cx="530" cy="643" r="6.65"/><circle cx="487" cy="612" r="6.65"/><circle class="w" cx="933" cy="407" r="6.65"/><circle cx="466" cy="274" r="6.65"/><circle cx="619" cy="314" r="6.65"/><circle class="w" cx="841" cy="633" r="6.65"/><circle cx="468" cy="487" r="6.65"/><circle class="w" cx="741" cy="648" r="6.65"/><circle class="w" cx="873" cy="263" r="6.65"/><circle cx="441" cy="274" r="6.65"/><circle class="w" cx="915" cy="273" r="6.65"/><circle class="w" cx="823" cy="236" r="6.65"/><circle class="w" cx="802" cy="445" r="6.65"/><circle class="w" cx="816" cy="551" r="6.65"/><circle cx="432" cy="215" r="6.65"/><circle class="w" cx="823" cy="357" r="6.65"/><circle cx="528" cy="219" r="6.65"/><circle cx="503" cy="528" r="6.65"/><circle class="w" cx="709" cy="353" r="6.65"/><circle class="w" cx="709" cy="624" r="6.65"/><circle cx="438" cy="314" r="6.65"/><circle cx="472" cy="380" r="6.65"/><circle class="w" cx="907" cy="444" r="6.65"/><circle class="w" cx="787" cy="619" r="6.65"/><circle cx="561" cy="634" r="6.65"/><circle cx="509" cy="495" r="6.65"/><circle class="w" cx="929" cy="330" r="6.65"/><circle class="w" cx="927" cy="443" r="6.65"/><circle cx="515" cy="287" r="6.65"/><circle class="w" cx="640" cy="321" r="6.65"/><circle cx="451" cy="212" r="6.65"/><circle cx="644" cy="543" r="6.65"/><circle class="w" cx="855" cy="394" r="6.65"/><circle cx="492" cy="383" r="6.65"/><circle class="w" cx="890" cy="469" r="6.65"/><circle class="w" cx="845" cy="485" r="6.65"/><circle cx="598" cy="192" r="6.65"/><circle class="w" cx="779" cy="254" r="6.65"/><circle class="w" cx="901" cy="346" r="6.65"/><circle class="w" cx="896" cy="526" r="6.65"/><circle cx="428" cy="290" r="6.65"/><circle class="w" cx="758" cy="481" r="6.65"/><circle class="w" cx="862" cy="573" r="6.65"/><circle cx="627" cy="427" r="6.65"/><circle cx="527" cy="625" r="6.65"/><circle cx="508" cy="572" r="6.65"/><circle cx="619" cy="359" r="6.65"/><circle cx="603" cy="536" r="6.65"/><circle class="w" cx="754" cy="551" r="6.65"/><circle cx="516" cy="401" r="6.65"/><circle class="w" cx="806" cy="259" r="6.65"/><circle cx="505" cy="668" r="6.65"/><circle cx="450" cy="372" r="6.65"/><circle class="w" cx="644" cy="196" r="6.65"/><circle cx="564" cy="414" r="6.65"/><circle class="w" cx="960" cy="215" r="6.65"/><circle class="w" cx="884" cy="213" r="6.65"/><circle cx="542" cy="377" r="6.65"/><circle cx="507" cy="546" r="6.65"/><circle class="w" cx="834" cy="546" r="6.65"/><circle class="w" cx="783" cy="414" r="6.65"/><circle cx="538" cy="338" r="6.65"/><circle class="w" cx="704" cy="507" r="6.65"/><circle class="w" cx="829" cy="275" r="6.65"/><circle class="w" cx="872" cy="380" r="6.65"/><circle class="w" cx="904" cy="556" r="6.65"/><circle cx="449" cy="353" r="6.65"/><circle class="w" cx="945" cy="248" r="6.65"/><circle class="w" cx="778" cy="216" r="6.65"/><circle class="w" cx="909" cy="482" r="6.65"/><circle cx="588" cy="630" r="6.65"/><circle cx="503" cy="430" r="6.65"/><circle cx="535" cy="436" r="6.65"/><circle cx="620" cy="377" r="6.65"/><circle class="w" cx="954" cy="270" r="6.65"/><circle class="w" cx="845" cy="591" r="6.65"/><circle cx="490" cy="311" r="6.65"/><circle class="w" cx="899" cy="395" r="6.65"/><circle class="w" cx="857" cy="238" r="6.65"/><circle class="w" cx="716" cy="426" r="6.65"/><circle cx="577" cy="261" r="6.65"/><circle class="w" cx="903" cy="591" r="6.65"/><circle class="w" cx="754" cy="295" r="6.65"/><circle cx="595" cy="422" r="6.65"/><circle cx="563" cy="462" r="6.65"/><circle cx="544" cy="546" r="6.65"/><circle class="w" cx="800" cy="402" r="6.65"/><circle class="w" cx="784" cy="306" r="6.65"/><circle class="w" cx="696" cy="526" r="6.65"/><circle cx="576" cy="196" r="6.65"/><circle cx="528" cy="200" r="6.65"/><circle class="w" cx="941" cy="285" r="6.65"/><circle class="w" cx="821" cy="461" r="6.65"/><circle cx="542" cy="585" r="6.65"/><circle class="w" cx="845" cy="305" r="6.65"/><circle cx="470" cy="323" r="6.65"/><circle class="w" cx="861" cy="281" r="6.65"/><circle cx="611" cy="496" r="6.65"/><circle class="w" cx="889" cy="625" r="6.65"/><circle class="w" cx="758" cy="510" r="6.65"/><circle class="w" cx="664" cy="587" r="6.65"/><circle class="w" cx="874" cy="399" r="6.65"/><circle cx="474" cy="431" r="6.65"/><circle cx="563" cy="551" r="6.65"/><circle class="w" cx="785" cy="449" r="6.65"/><circle cx="624" cy="545" r="6.65"/><circle class="w" cx="836" cy="524" r="6.65"/><circle class="w" cx="721" cy="262" r="6.65"/><circle class="w" cx="780" cy="375" r="6.65"/><circle cx="557" cy="199" r="6.65"/><circle class="w" cx="826" cy="482" r="6.65"/><circle cx="542" cy="670" r="6.65"/><circle class="w" cx="816" cy="525" r="6.65"/><circle class="w" cx="916" cy="209" r="6.65"/><circle cx="505" cy="272" r="6.65"/><circle cx="464" cy="247" r="6.65"/><circle class="w" cx="746" cy="426" r="6.65"/><circle cx="485" cy="582" r="6.65"/><circle cx="567" cy="652" r="6.65"/><circle cx="555" cy="392" r="6.65"/><circle class="w" cx="917" cy="400" r="6.65"/><circle cx="494" cy="196" r="6.65"/><circle cx="566" cy="615" r="6.65"/><circle cx="594" cy="590" r="6.65"/><circle cx="485" cy="213" r="6.65"/><circle cx="567" cy="577" r="6.65"/><circle cx="593" cy="299" r="6.65"/><circle class="w" cx="835" cy="342" r="6.65"/><circle cx="504" cy="589" r="6.65"/><circle class="w" cx="735" cy="631" r="6.65"/><circle cx="499" cy="650" r="6.65"/><circle class="w" cx="914" cy="303" r="6.65"/><circle cx="514" cy="309" r="6.65"/><circle class="w" cx="867" cy="460" r="6.65"/><circle cx="481" cy="361" r="6.65"/><circle cx="452" cy="392" r="6.65"/><circle class="w" cx="891" cy="378" r="6.65"/><circle cx="576" cy="596" r="6.65"/><circle cx="603" cy="329" r="6.65"/><circle class="w" cx="843" cy="207" r="6.65"/><circle class="w" cx="932" cy="311" r="6.65"/><circle cx="633" cy="464" r="6.65"/><circle cx="548" cy="650" r="6.65"/><circle cx="525" cy="273" r="6.65"/><circle class="w" cx="839" cy="466" r="6.65"/><circle class="w" cx="821" cy="605" r="6.65"/><circle class="w" cx="775" cy="650" r="6.65"/><circle class="w" cx="770" cy="464" r="6.65"/><circle class="w" cx="825" cy="382" r="6.65"/><circle cx="498" cy="511" r="6.65"/><circle class="w" cx="795" cy="224" r="6.65"/><circle cx="531" cy="454" r="6.65"/><circle cx="475" cy="196" r="6.65"/><circle cx="450" cy="300" r="6.65"/><circle class="w" cx="867" cy="418" r="6.65"/><circle class="w" cx="849" cy="614" r="6.65"/><circle cx="577" cy="505" r="6.65"/><circle class="w" cx="692" cy="415" r="6.65"/><circle cx="473" cy="229" r="6.65"/><circle cx="551" cy="494" r="6.65"/><circle class="w" cx="763" cy="578" r="6.65"/><circle cx="558" cy="222" r="6.65"/><circle class="w" cx="954" cy="198" r="6.65"/><circle cx="584" cy="659" r="6.65"/><circle cx="531" cy="296" r="6.65"/><circle class="w" cx="794" cy="581" r="6.65"/><circle cx="605" cy="617" r="6.65"/><circle class="w" cx="799" cy="633" r="6.65"/><circle cx="629" cy="444" r="6.65"/><circle class="w" cx="682" cy="197" r="6.65"/><circle class="w" cx="719" cy="314" r="6.65"/><circle cx="499" cy="467" r="6.65"/><circle class="w" cx="907" cy="365" r="6.65"/><circle class="w" cx="737" cy="195" r="6.65"/><circle cx="505" cy="217" r="6.65"/><circle class="w" cx="626" cy="199" r="6.65"/><circle class="w" cx="885" cy="434" r="6.65"/><circle cx="532" cy="524" r="6.65"/><circle class="w" cx="884" cy="492" r="6.65"/><circle class="w" cx="767" cy="231" r="6.65"/><circle cx="610" cy="675" r="6.65"/><circle class="w" cx="842" cy="264" r="6.65"/><circle cx="499" cy="410" r="6.65"/><circle class="w" cx="861" cy="344" r="6.65"/><circle class="w" cx="898" cy="276" r="6.65"/><circle class="w" cx="758" cy="401" r="6.65"/><circle cx="624" cy="611" r="6.65"/><circle cx="589" cy="524" r="6.65"/><circle cx="572" cy="342" r="6.65"/><circle class="w" cx="879" cy="280" r="6.65"/><circle class="w" cx="735" cy="572" r="6.65"/><circle class="w" cx="884" cy="244" r="6.65"/><circle cx="591" cy="343" r="6.65"/><circle cx="504" cy="622" r="6.65"/><circle class="w" cx="901" cy="328" r="6.65"/><circle cx="546" cy="625" r="6.65"/><circle cx="616" cy="573" r="6.65"/><circle cx="645" cy="488" r="6.65"/><circle class="w" cx="915" cy="419" r="6.65"/><circle cx="566" cy="480" r="6.65"/><circle class="w" cx="832" cy="425" r="6.65"/><circle cx="480" cy="342" r="6.65"/><circle class="w" cx="889" cy="642" r="6.65"/><circle class="w" cx="911" cy="255" r="6.65"/><circle cx="518" cy="421" r="6.65"/><circle class="w" cx="808" cy="475" r="6.65"/><circle class="w" cx="796" cy="650" r="6.65"/><circle cx="474" cy="305" r="6.65"/><circle cx="547" cy="423" r="6.65"/><circle cx="671" cy="630" r="6.65"/><circle class="w" cx="800" cy="314" r="6.65"/><circle class="w" cx="676" cy="383" r="6.65"/><circle cx="489" cy="454" r="6.65"/><circle class="w" cx="773" cy="682" r="6.65"/><circle cx="560" cy="671" r="6.65"/><circle class="w" cx="697" cy="379" r="6.65"/><circle class="w" cx="858" cy="364" r="6.65"/><circle cx="628" cy="664" r="6.65"/><circle class="w" cx="819" cy="507" r="6.65"/><circle class="w" cx="716" cy="197" r="6.65"/><circle cx="558" cy="595" r="6.65"/><circle cx="470" cy="448" r="6.65"/><circle cx="499" cy="290" r="6.65"/><circle class="w" cx="731" cy="594" r="6.65"/><circle cx="561" cy="357" r="6.65"/><circle class="w" cx="822" cy="194" r="6.65"/><circle cx="559" cy="329" r="6.65"/><circle class="w" cx="935" cy="203" r="6.65"/><circle class="w" cx="749" cy="614" r="6.65"/><circle cx="528" cy="367" r="6.65"/><circle cx="583" cy="489" r="6.65"/><circle class="w" cx="856" cy="645" r="6.65"/><circle class="w" cx="846" cy="449" r="6.65"/><circle cx="478" cy="474" r="6.65"/><circle cx="601" cy="359" r="6.65"/><circle class="w" cx="862" cy="435" r="6.65"/><circle cx="502" cy="325" r="6.65"/><circle cx="503" cy="239" r="6.65"/><circle class="w" cx="777" cy="630" r="6.65"/><circle class="w" cx="820" cy="302" r="6.65"/><circle class="w" cx="691" cy="628" r="6.65"/><circle class="w" cx="689" cy="557" r="6.65"/><circle class="w" cx="884" cy="537" r="6.65"/><circle class="w" cx="946" cy="225" r="6.65"/><circle cx="476" cy="396" r="6.65"/><circle class="w" cx="901" cy="457" r="6.65"/><circle class="w" cx="697" cy="677" r="6.65"/><circle class="w" cx="815" cy="582" r="6.65"/><circle cx="490" cy="635" r="6.65"/><circle class="w" cx="880" cy="582" r="6.65"/><circle class="w" cx="712" cy="665" r="6.65"/><circle class="w" cx="772" cy="607" r="6.65"/><circle class="w" cx="866" cy="526" r="6.65"/><circle cx="537" cy="256" r="6.65"/><circle class="w" cx="914" cy="383" r="6.65"/><circle cx="548" cy="236" r="6.65"/><circle class="w" cx="898" cy="294" r="6.65"/><circle class="w" cx="792" cy="264" r="6.65"/><circle class="w" cx="794" cy="201" r="6.65"/><circle cx="525" cy="235" r="6.65"/><circle cx="604" cy="658" r="6.65"/><circle class="w" cx="866" cy="499" r="6.65"/><circle cx="483" cy="530" r="6.65"/><circle cx="594" cy="570" r="6.65"/><circle class="w" cx="855" cy="218" r="6.65"/><circle class="w" cx="898" cy="226" r="6.65"/><circle class="w" cx="777" cy="398" r="6.65"/><circle class="w" cx="835" cy="674" r="6.65"/><circle cx="511" cy="196" r="6.65"/><circle cx="525" cy="386" r="6.65"/><circle class="w" cx="884" cy="344" r="6.65"/><circle cx="477" cy="567" r="6.65"/><circle cx="526" cy="593" r="6.65"/><circle class="w" cx="723" cy="648" r="6.65"/><circle class="w" cx="774" cy="525" r="6.65"/><circle class="w" cx="919" cy="349" r="6.65"/><circle cx="477" cy="549" r="6.65"/><circle cx="627" cy="491" r="6.65"/><circle class="w" cx="844" cy="326" r="6.65"/><circle class="w" cx="788" cy="342" r="6.65"/><circle cx="517" cy="465" r="6.65"/><circle cx="553" cy="567" r="6.65"/><circle class="w" cx="823" cy="632" r="6.65"/><circle class="w" cx="816" cy="654" r="6.65"/><circle class="w" cx="763" cy="380" r="6.65"/><circle class="w" cx="842" cy="283" r="6.65"/><circle class="w" cx="840" cy="245" r="6.65"/><circle class="w" cx="816" cy="210" r="6.65"/><circle cx="536" cy="506" r="6.65"/><circle cx="624" cy="529" r="6.65"/><circle cx="555" cy="254" r="6.65"/><circle class="w" cx="833" cy="574" r="6.65"/><circle cx="546" cy="287" r="6.65"/><circle cx="572" cy="381" r="6.65"/><circle class="w" cx="922" cy="283" r="6.65"/><circle cx="514" cy="338" r="6.65"/><circle class="w" cx="883" cy="602" r="6.65"/><circle cx="516" cy="444" r="6.65"/><circle cx="452" cy="317" r="6.65"/><circle cx="613" cy="429" r="6.65"/><circle cx="456" cy="262" r="6.65"/><circle class="w" cx="757" cy="198" r="6.65"/><circle class="w" cx="758" cy="493" r="6.65"/><circle cx="505" cy="381" r="6.65"/><circle class="w" cx="870" cy="296" r="6.65"/><circle class="w" cx="905" cy="514" r="6.65"/><circle cx="550" cy="473" r="6.65"/><circle class="w" cx="855" cy="473" r="6.65"/><circle class="w" cx="900" cy="410" r="6.65"/><circle class="w" cx="874" cy="477" r="6.65"/><circle cx="441" cy="203" r="6.65"/><circle cx="521" cy="668" r="6.65"/><circle class="w" cx="848" cy="506" r="6.65"/><circle cx="515" cy="257" r="6.65"/><circle class="w" cx="861" cy="626" r="6.65"/><circle cx="477" cy="265" r="6.65"/><circle cx="556" cy="536" r="6.65"/><circle class="w" cx="837" cy="655" r="6.65"/><circle cx="602" cy="377" r="6.65"/><circle cx="521" cy="574" r="6.65"/><circle class="w" cx="934" cy="239" r="6.65"/><circle class="w" cx="777" cy="567" r="6.65"/><circle cx="670" cy="560" r="6.65"/><circle class="w" cx="720" cy="631" r="6.65"/><circle class="w" cx="873" cy="653" r="6.65"/><circle cx="514" cy="519" r="6.65"/><circle class="w" cx="792" cy="485" r="6.65"/><circle cx="466" cy="368" r="6.65"/><circle class="w" cx="740" cy="554" r="6.65"/><circle class="w" cx="920" cy="193" r="6.65"/><circle class="w" cx="770" cy="300" r="6.65"/><circle cx="503" cy="486" r="6.65"/><circle cx="527" cy="406" r="6.65"/><circle class="w" cx="864" cy="555" r="6.65"/><circle cx="529" cy="651" r="6.65"/><circle cx="539" cy="607" r="6.65"/><circle class="w" cx="926" cy="371" r="6.65"/><circle class="w" cx="898" cy="478" r="6.65"/><circle class="w" cx="780" cy="588" r="6.65"/><circle class="w" cx="797" cy="426" r="6.65"/><circle class="w" cx="773" cy="482" r="6.65"/><circle class="w" cx="817" cy="321" r="6.65"/><circle cx="496" cy="602" r="6.65"/><circle cx="451" cy="241" r="6.65"/><circle cx="460" cy="200" r="6.65"/><circle class="w" cx="866" cy="269" r="6.65"/><circle class="w" cx="860" cy="587" r="6.65"/><circle cx="593" cy="677" r="6.65"/><circle class="w" cx="758" cy="417" r="6.65"/><circle cx="468" cy="418" r="6.65"/><circle class="w" cx="881" cy="452" r="6.65"/><circle cx="448" cy="283" r="6.65"/><circle class="w" cx="811" cy="412" r="6.65"/><circle cx="521" cy="612" r="6.65"/><circle class="w" cx="794" cy="531" r="6.65"/><circle cx="661" cy="478" r="6.65"/><circle class="w" cx="746" cy="285" r="6.65"/><circle cx="588" cy="392" r="6.65"/><circle cx="541" cy="326" r="6.65"/><circle cx="479" cy="285" r="6.65"/><circle class="w" cx="763" cy="663" r="6.65"/><circle class="w" cx="928" cy="220" r="6.65"/><circle class="w" cx="828" cy="556" r="6.65"/><circle class="w" cx="797" cy="391" r="6.65"/><circle class="w" cx="864" cy="315" r="6.65"/><circle cx="496" cy="344" r="6.65"/><circle class="w" cx="704" cy="329" r="6.65"/><circle cx="545" cy="403" r="6.65"/><circle class="w" cx="739" cy="495" r="6.65"/><circle cx="554" cy="378" r="6.65"/><circle class="w" cx="753" cy="646" r="6.65"/><circle cx="644" cy="332" r="6.65"/><circle class="w" cx="808" cy="447" r="6.65"/><circle class="w" cx="695" cy="398" r="6.65"/><circle cx="482" cy="323" r="6.65"/><circle class="w" cx="734" cy="325" r="6.65"/><circle class="w" cx="779" cy="242" r="6.65"/><circle cx="575" cy="435" r="6.65"/><circle cx="561" cy="449" r="6.65"/><circle class="w" cx="874" cy="215" r="6.65"/><circle cx="580" cy="321" r="6.65"/><circle class="w" cx="760" cy="559" r="6.65"/><circle cx="457" cy="224" r="6.65"/><circle cx="566" cy="292" r="6.65"/><circle cx="527" cy="630" r="6.65"/><circle cx="606" cy="200" r="6.65"/><circle class="w" cx="832" cy="496" r="6.65"/><circle cx="574" cy="537" r="6.65"/><circle class="w" cx="885" cy="508" r="6.65"/><circle cx="535" cy="559" r="6.65"/><circle class="w" cx="662" cy="394" r="6.65"/><circle cx="542" cy="197" r="6.65"/><circle class="w" cx="866" cy="241" r="6.65"/><circle class="w" cx="843" cy="634" r="6.65"/><circle cx="599" cy="506" r="6.65"/><circle class="w" cx="921" cy="314" r="6.65"/><circle cx="480" cy="241" r="6.65"/><circle cx="584" cy="224" r="6.65"/><circle class="w" cx="701" cy="445" r="6.65"/><circle class="w" cx="634" cy="213" r="6.65"/><circle class="w" cx="720" cy="609" r="6.65"/><circle class="w" cx="903" cy="242" r="6.65"/><circle class="w" cx="819" cy="432" r="6.65"/><circle class="w" cx="700" cy="202" r="6.65"/><circle class="w" cx="827" cy="533" r="6.65"/><circle class="w" cx="810" cy="491" r="6.65"/><circle cx="602" cy="239" r="6.65"/><circle cx="527" cy="350" r="6.65"/><circle cx="639" cy="614" r="6.65"/><circle class="w" cx="889" cy="309" r="6.65"/><circle cx="538" cy="445" r="6.65"/><circle class="w" cx="929" cy="256" r="6.65"/><circle class="w" cx="828" cy="405" r="6.65"/><circle cx="485" cy="437" r="6.65"/><circle class="w" cx="821" cy="342" r="6.65"/><circle cx="506" cy="540" r="6.65"/><circle class="w" cx="848" cy="565" r="6.65"/><circle class="w" cx="900" cy="495" r="6.65"/><circle cx="494" cy="256" r="6.65"/><circle class="w" cx="640" cy="196" r="6.65"/><circle class="w" cx="810" cy="681" r="6.65"/><circle cx="643" cy="508" r="6.65"/><circle class="w" cx="848" cy="534" r="6.65"/><circle class="w" cx="800" cy="569" r="6.65"/><circle cx="550" cy="682" r="6.65"/><circle cx="502" cy="569" r="6.65"/><circle class="w" cx="898" cy="262" r="6.65"/><circle cx="590" cy="625" r="6.65"/><circle class="w" cx="901" cy="349" r="6.65"/><circle cx="494" cy="275" r="6.65"/><circle cx="565" cy="500" r="6.65"/><circle class="w" cx="743" cy="661" r="6.65"/><circle cx="487" cy="494" r="6.65"/><circle cx="504" cy="662" r="6.65"/><circle class="w" cx="883" cy="194" r="6.65"/><circle cx="585" cy="368" r="6.65"/><circle class="w" cx="809" cy="597" r="6.65"/><circle cx="522" cy="316" r="6.65"/><circle cx="455" cy="354" r="6.65"/><circle class="w" cx="851" cy="672" r="6.65"/><circle class="w" cx="896" cy="438" r="6.65"/><circle cx="627" cy="267" r="6.65"/><circle class="w" cx="847" cy="196" r="6.65"/><circle class="w" cx="834" cy="309" r="6.65"/><circle class="w" cx="655" cy="224" r="6.65"/><circle cx="623" cy="555" r="6.65"/><circle cx="557" cy="518" r="6.65"/><circle class="w" cx="803" cy="302" r="6.65"/><circle cx="579" cy="563" r="6.65"/><circle class="w" cx="905" cy="205" r="6.65"/><circle cx="572" cy="586" r="6.65"/><circle cx="536" cy="489" r="6.65"/><circle cx="601" cy="464" r="6.65"/><circle cx="651" cy="629" r="6.65"/><circle cx="592" cy="427" r="6.65"/><circle class="w" cx="696" cy="262" r="6.65"/><circle class="w" cx="713" cy="533" r="6.65"/><circle class="w" cx="866" cy="407" r="6.65"/><circle class="w" cx="837" cy="388" r="6.65"/><circle cx="576" cy="669" r="6.65"/><circle class="w" cx="735" cy="457" r="6.65"/><circle class="w" cx="808" cy="640" r="6.65"/><circle cx="630" cy="475" r="6.65"/><circle class="w" cx="879" cy="260" r="6.65"/><circle class="w" cx="667" cy="203" r="6.65"/><circle cx="494" cy="362" r="6.65"/><circle class="w" cx="856" cy="609" r="6.65"/><circle cx="566" cy="606" r="6.65"/><circle cx="580" cy="516" r="6.65"/><circle class="w" cx="844" cy="227" r="6.65"/><circle cx="510" cy="633" r="6.65"/><circle class="w" cx="798" cy="250" r="6.65"/><circle cx="601" cy="259" r="6.65"/><circle cx="510" cy="409" r="6.65"/><circle cx="586" cy="198" r="6.65"/><circle cx="567" cy="653" r="6.65"/><circle cx="559" cy="554" r="6.65"/><circle cx="646" cy="648" r="6.65"/><circle class="w" cx="801" cy="665" r="6.65"/><circle class="w" cx="892" cy="328" r="6.65"/><circle class="w" cx="788" cy="217" r="6.65"/><circle cx="494" cy="302" r="6.65"/><circle cx="491" cy="216" r="6.65"/><circle cx="563" cy="201" r="6.65"/><circle cx="543" cy="218" r="6.65"/><circle cx="501" cy="681" r="6.65"/><circle class="w" cx="812" cy="548" r="6.65"/><circle class="w" cx="899" cy="373" r="6.65"/><circle class="w" cx="769" cy="208" r="6.65"/><circle class="w" cx="817" cy="615" r="6.65"/><circle class="w" cx="742" cy="203" r="6.65"/><circle cx="618" cy="647" r="6.65"/><circle class="w" cx="726" cy="664" r="6.65"/><circle class="w" cx="792" cy="506" r="6.65"/><circle class="w" cx="854" cy="258" r="6.65"/><circle class="w" cx="833" cy="445" r="6.65"/><circle cx="594" cy="588" r="6.65"/><circle cx="495" cy="510" r="6.65"/><circle class="w" cx="862" cy="456" r="6.65"/><circle cx="543" cy="661" r="6.65"/><circle class="w" cx="743" cy="532" r="6.65"/><circle cx="533" cy="469" r="6.65"/><circle cx="586" cy="605" r="6.65"/><circle cx="529" cy="267" r="6.65"/><circle cx="501" cy="458" r="6.65"/><circle cx="462" cy="296" r="6.65"/><circle cx="555" cy="272" r="6.65"/><circle cx="472" cy="214" r="6.65"/><circle class="w" cx="877" cy="566" r="6.65"/><circle cx="619" cy="670" r="6.65"/><circle class="w" cx="825" cy="372" r="6.65"/><circle cx="625" cy="439" r="6.65"/><circle cx="680" cy="668" r="6.65"/><circle cx="564" cy="339" r="6.65"/><circle class="w" cx="906" cy="278" r="6.65"/><circle class="w" cx="842" cy="344" r="6.65"/><circle class="w" cx="780" cy="355" r="6.65"/><circle cx="505" cy="229" r="6.65"/><circle cx="481" cy="407" r="6.65"/><circle class="w" cx="870" cy="345" r="6.65"/><circle class="w" cx="883" cy="360" r="6.65"/><circle class="w" cx="856" cy="298" r="6.65"/><circle cx="612" cy="495" r="6.65"/><circle cx="581" cy="302" r="6.65"/><circle class="w" cx="866" cy="683" r="6.65"/><circle class="w" cx="920" cy="298" r="6.65"/><circle class="w" cx="878" cy="384" r="6.65"/><circle cx="519" cy="487" r="6.65"/><circle class="w" cx="909" cy="225" r="6.65"/><circle cx="569" cy="628" r="6.65"/><circle class="w" cx="750" cy="604" r="6.65"/><circle class="w" cx="846" cy="410" r="6.65"/><circle class="w" cx="729" cy="544" r="6.65"/><circle cx="558" cy="425" r="6.65"/><circle cx="595" cy="482" r="6.65"/><circle cx="539" cy="243" r="6.65"/><circle cx="480" cy="377" r="6.65"/><circle cx="622" cy="607" r="6.65"/><circle class="w" cx="782" cy="610" r="6.65"/><circle class="w" cx="891" cy="465" r="6.65"/><circle cx="620" cy="351" r="6.65"/><circle cx="538" cy="519" r="6.65"/><circle cx="514" cy="369" r="6.65"/><circle class="w" cx="844" cy="464" r="6.65"/><circle cx="484" cy="199" r="6.65"/><circle cx="522" cy="532" r="6.65"/><circle class="w" cx="736" cy="439" r="6.65"/><circle cx="537" cy="366" r="6.65"/><circle class="w" cx="857" cy="330" r="6.65"/><circle cx="596" cy="654" r="6.65"/><circle class="w" cx="819" cy="570" r="6.65"/><circle class="w" cx="840" cy="270" r="6.65"/><circle class="w" cx="801" cy="232" r="6.65"/><circle class="w" cx="782" cy="195" r="6.65"/><circle cx="604" cy="440" r="6.65"/><circle class="w" cx="761" cy="680" r="6.65"/><circle cx="530" cy="428" r="6.65"/><circle class="w" cx="819" cy="474" r="6.65"/><circle cx="575" cy="269" r="6.65"/><circle cx="520" cy="560" r="6.65"/><circle class="w" cx="862" cy="643" r="6.65"/><circle class="w" cx="723" cy="572" r="6.65"/><circle class="w" cx="726" cy="682" r="6.65"/><circle cx="614" cy="590" r="6.65"/><circle class="w" cx="915" cy="364" r="6.65"/><circle cx="554" cy="320" r="6.65"/><circle cx="533" cy="576" r="6.65"/><circle class="w" cx="806" cy="373" r="6.65"/><circle class="w" cx="837" cy="427" r="6.65"/><circle cx="545" cy="390" r="6.65"/><circle class="w" cx="881" cy="242" r="6.65"/><circle class="w" cx="779" cy="471" r="6.65"/><circle class="w" cx="822" cy="660" r="6.65"/><circle class="w" cx="842" cy="364" r="6.65"/><circle class="w" cx="932" cy="200" r="6.65"/><circle cx="519" cy="679" r="6.65"/><circle class="w" cx="799" cy="473" r="6.65"/><circle class="w" cx="868" cy="436" r="6.65"/><circle class="w" cx="834" cy="621" r="6.65"/><circle class="w" cx="877" cy="489" r="6.65"/><circle cx="567" cy="220" r="6.65"/><circle cx="685" cy="630" r="6.65"/><circle class="w" cx="732" cy="382" r="6.65"/><circle cx="538" cy="642" r="6.65"/><circle class="w" cx="862" cy="362" r="6.65"/><circle cx="654" cy="304" r="6.65"/><circle cx="519" cy="386" r="6.65"/><circle cx="607" cy="568" r="6.65"/><circle cx="587" cy="444" r="6.65"/><circle cx="526" cy="299" r="6.65"/><circle class="w" cx="810" cy="193" r="6.65"/><circle class="w" cx="816" cy="220" r="6.65"/><circle cx="497" cy="323" r="6.65"/><circle cx="562" cy="572" r="6.65"/><circle cx="512" cy="599" r="6.65"/><circle cx="509" cy="351" r="6.65"/><circle class="w" cx="838" cy="602" r="6.65"/><circle class="w" cx="869" cy="529" r="6.65"/><circle class="w" cx="731" cy="602" r="6.65"/><circle cx="496" cy="425" r="6.65"/><circle class="w" cx="861" cy="224" r="6.65"/><circle class="w" cx="650" cy="208" r="6.65"/><circle cx="498" cy="586" r="6.65"/><circle cx="503" cy="198" r="6.65"/><circle class="w" cx="787" cy="579" r="6.65"/><circle cx="574" cy="356" r="6.65"/><circle class="w" cx="809" cy="391" r="6.65"/><circle cx="470" cy="314" r="6.65"/><circle class="w" cx="806" cy="526" r="6.65"/><circle cx="531" cy="596" r="6.65"/><circle class="w" cx="783" cy="660" r="6.65"/><circle class="w" cx="760" cy="539" r="6.65"/><circle class="w" cx="879" cy="583" r="6.65"/><circle class="w" cx="826" cy="511" r="6.65"/><circle cx="524" cy="228" r="6.65"/><circle class="w" cx="836" cy="326" r="6.65"/><circle class="w" cx="790" cy="313" r="6.65"/><circle class="w" cx="873" cy="601" r="6.65"/><circle class="w" cx="832" cy="205" r="6.65"/><circle cx="643" cy="576" r="6.65"/><circle class="w" cx="902" cy="310" r="6.65"/><circle cx="550" cy="481" r="6.65"/><circle class="w" cx="779" cy="276" r="6.65"/><circle class="w" cx="899" cy="406" r="6.65"/><circle class="w" cx="734" cy="637" r="6.65"/><circle cx="549" cy="461" r="6.65"/><circle class="w" cx="860" cy="279" r="6.65"/><circle cx="598" cy="547" r="6.65"/><circle cx="597" cy="527" r="6.65"/><circle class="w" cx="851" cy="379" r="6.65"/><circle cx="500" cy="476" r="6.65"/><circle class="w" cx="765" cy="615" r="6.65"/><circle class="w" cx="844" cy="651" r="6.65"/><circle cx="462" cy="238" r="6.65"/><circle class="w" cx="918" cy="265" r="6.65"/><circle class="w" cx="840" cy="578" r="6.65"/><circle class="w" cx="851" cy="442" r="6.65"/><circle cx="479" cy="296" r="6.65"/><circle class="w" cx="824" cy="686" r="6.65"/><circle class="w" cx="849" cy="507" r="6.65"/><circle class="w" cx="772" cy="369" r="6.65"/><circle class="w" cx="688" cy="444" r="6.65"/><circle cx="496" cy="553" r="6.65"/><circle class="w" cx="832" cy="486" r="6.65"/><circle class="w" cx="744" cy="355" r="6.65"/><circle class="w" cx="852" cy="488" r="6.65"/><circle cx="505" cy="248" r="6.65"/><circle cx="553" cy="443" r="6.65"/><circle class="w" cx="793" cy="407" r="6.65"/><circle cx="509" cy="439" r="6.65"/><circle class="w" cx="756" cy="497" r="6.65"/><circle cx="589" cy="242" r="6.65"/><circle cx="708" cy="657" r="6.65"/><circle cx="520" cy="282" r="6.65"/><circle cx="565" cy="304" r="6.65"/><circle class="w" cx="823" cy="586" r="6.65"/><circle cx="482" cy="473" r="6.65"/><circle cx="471" cy="255" r="6.65"/><circle cx="551" cy="504" r="6.65"/><circle class="w" cx="774" cy="339" r="6.65"/><circle cx="510" cy="619" r="6.65"/><circle class="w" cx="790" cy="331" r="6.65"/><circle cx="472" cy="343" r="6.65"/><circle cx="669" cy="595" r="6.65"/><circle class="w" cx="755" cy="576" r="6.65"/><circle class="w" cx="856" cy="625" r="6.65"/><circle class="w" cx="865" cy="392" r="6.65"/><circle class="w" cx="906" cy="327" r="6.65"/><circle cx="539" cy="335" r="6.65"/><circle cx="635" cy="635" r="6.65"/><circle class="w" cx="816" cy="326" r="6.65"/><circle cx="633" cy="455" r="6.65"/><circle class="w" cx="781" cy="230" r="6.65"/><circle cx="556" cy="233" r="6.65"/><circle cx="545" cy="303" r="6.65"/><circle class="w" cx="894" cy="288" r="6.65"/><circle cx="472" cy="392" r="6.65"/><circle class="w" cx="862" cy="552" r="6.65"/><circle cx="629" cy="207" r="6.65"/><circle cx="555" cy="670" r="6.65"/><circle class="w" cx="818" cy="630" r="6.65"/><circle class="w" cx="919" cy="210" r="6.65"/><circle cx="603" cy="285" r="6.65"/><circle class="w" cx="869" cy="207" r="6.65"/><circle class="w" cx="817" cy="456" r="6.65"/><circle class="w" cx="788" cy="260" r="6.65"/><circle class="w" cx="716" cy="347" r="6.65"/><circle cx="572" cy="546" r="6.65"/><circle cx="571" cy="372" r="6.65"/><circle class="w" cx="746" cy="552" r="6.65"/><circle class="w" cx="722" cy="509" r="6.65"/><circle cx="533" cy="616" r="6.65"/><circle class="w" cx="712" cy="447" r="6.65"/><circle class="w" cx="860" cy="663" r="6.65"/><circle class="w" cx="796" cy="204" r="6.65"/><circle cx="689" cy="684" r="6.65"/><circle class="w" cx="889" cy="226" r="6.65"/><circle class="w" cx="795" cy="635" r="6.65"/><circle class="w" cx="836" cy="289" r="6.65"/><circle class="w" cx="808" cy="507" r="6.65"/><circle class="w" cx="687" cy="212" r="6.65"/><circle class="w" cx="711" cy="202" r="6.65"/><circle class="w" cx="877" cy="313" r="6.65"/><circle cx="616" cy="451" r="6.65"/><circle cx="524" cy="252" r="6.65"/><circle class="w" cx="751" cy="470" r="6.65"/><circle cx="509" cy="311" r="6.65"/><circle cx="535" cy="675" r="6.65"/><circle class="w" cx="783" cy="448" r="6.65"/><circle cx="579" cy="286" r="6.65"/><circle class="w" cx="790" cy="427" r="6.65"/><circle class="w" cx="772" cy="597" r="6.65"/><circle cx="656" cy="281" r="6.65"/><circle cx="571" cy="325" r="6.65"/><circle class="w" cx="825" cy="387" r="6.65"/><circle cx="518" cy="660" r="6.65"/><circle cx="625" cy="403" r="6.65"/><circle cx="641" cy="597" r="6.65"/><circle class="w" cx="820" cy="277" r="6.65"/><circle class="w" cx="840" cy="547" r="6.65"/><circle class="w" cx="749" cy="668" r="6.65"/><circle class="w" cx="836" cy="239" r="6.65"/><circle class="w" cx="897" cy="388" r="6.65"/><circle cx="528" cy="455" r="6.65"/><circle class="w" cx="840" cy="668" r="6.65"/><circle cx="563" cy="529" r="6.65"/><circle cx="533" cy="403" r="6.65"/><circle cx="571" cy="436" r="6.65"/><circle class="w" cx="843" cy="527" r="6.65"/><circle cx="573" cy="503" r="6.65"/><circle cx="484" cy="279" r="6.65"/><circle class="w" cx="776" cy="506" r="6.65"/><circle cx="497" cy="408" r="6.65"/><circle class="w" cx="762" cy="559" r="6.65"/><circle cx="490" cy="230" r="6.65"/><circle class="w" cx="883" cy="446" r="6.65"/><circle class="w" cx="861" cy="472" r="6.65"/><circle class="w" cx="891" cy="340" r="6.65"/><circle class="w" cx="803" cy="617" r="6.65"/><circle cx="622" cy="469" r="6.65"/><circle class="w" cx="844" cy="686" r="6.65"/><circle class="w" cx="879" cy="405" r="6.65"/><circle cx="667" cy="410" r="6.65"/><circle cx="611" cy="267" r="6.65"/><circle cx="524" cy="348" r="6.65"/><circle class="w" cx="670" cy="221" r="6.65"/><circle class="w" cx="827" cy="354" r="6.65"/><circle cx="607" cy="677" r="6.65"/><circle class="w" cx="772" cy="646" r="6.65"/><circle cx="554" cy="619" r="6.65"/><circle cx="634" cy="266" r="6.65"/><circle cx="582" cy="572" r="6.65"/><circle cx="550" cy="375" r="6.65"/><circle class="w" cx="810" cy="674" r="6.65"/><circle cx="589" cy="469" r="6.65"/><circle cx="483" cy="438" r="6.65"/><circle cx="578" cy="207" r="6.65"/><circle class="w" cx="907" cy="243" r="6.65"/><circle class="w" cx="803" cy="588" r="6.65"/><circle cx="462" cy="221" r="6.65"/><circle cx="494" cy="263" r="6.65"/><circle cx="615" cy="339" r="6.65"/><circle class="w" cx="826" cy="411" r="6.65"/><circle cx="550" cy="251" r="6.65"/><circle class="w" cx="823" cy="607" r="6.65"/><circle class="w" cx="814" cy="489" r="6.65"/><circle cx="582" cy="664" r="6.65"/><circle cx="522" cy="474" r="6.65"/><circle class="w" cx="891" cy="268" r="6.65"/><circle class="w" cx="723" cy="367" r="6.65"/><circle cx="508" cy="569" r="6.65"/><circle class="w" cx="876" cy="423" r="6.65"/><circle cx="536" cy="537" r="6.65"/><circle class="w" cx="854" cy="241" r="6.65"/><circle class="w" cx="723" cy="242" r="6.65"/><circle class="w" cx="867" cy="512" r="6.65"/><circle cx="492" cy="456" r="6.65"/><circle cx="473" cy="365" r="6.65"/><circle cx="525" cy="634" r="6.65"/><circle class="w" cx="806" cy="258" r="6.65"/><circle cx="533" cy="317" r="6.65"/><circle cx="554" cy="547" r="6.65"/><circle cx="614" cy="633" r="6.65"/><circle cx="587" cy="618" r="6.65"/><circle class="w" cx="871" cy="333" r="6.65"/><circle class="w" cx="823" cy="439" r="6.65"/><circle cx="542" cy="268" r="6.65"/><circle cx="645" cy="537" r="6.65"/><circle cx="609" cy="484" r="6.65"/><circle cx="619" cy="652" r="6.65"/><circle class="w" cx="849" cy="212" r="6.65"/><circle cx="503" cy="536" r="6.65"/><circle class="w" cx="750" cy="206" r="6.65"/><circle class="w" cx="750" cy="649" r="6.65"/><circle cx="502" cy="280" r="6.65"/><circle class="w" cx="729" cy="456" r="6.65"/><circle cx="553" cy="285" r="6.65"/><circle class="w" cx="864" cy="260" r="6.65"/><circle class="w" cx="693" cy="459" r="6.65"/><circle class="w" cx="858" cy="573" r="6.65"/><circle class="w" cx="900" cy="205" r="6.65"/><circle class="w" cx="768" cy="386" r="6.65"/><circle class="w" cx="831" cy="221" r="6.65"/><circle class="w" cx="856" cy="423" r="6.65"/><circle cx="563" cy="590" r="6.65"/><circle cx="597" cy="427" r="6.65"/><circle class="w" cx="878" cy="465" r="6.65"/><circle cx="509" cy="331" r="6.65"/><circle cx="597" cy="206" r="6.65"/><circle cx="488" cy="348" r="6.65"/><circle cx="653" cy="462" r="6.65"/><circle class="w" cx="757" cy="370" r="6.65"/><circle cx="616" cy="518" r="6.65"/><circle class="w" cx="720" cy="551" r="6.65"/><circle cx="492" cy="370" r="6.65"/><circle cx="559" cy="199" r="6.65"/><circle cx="620" cy="252" r="6.65"/><circle cx="544" cy="428" r="6.65"/><circle cx="624" cy="301" r="6.65"/><circle cx="524" cy="367" r="6.65"/><circle class="w" cx="707" cy="361" r="6.65"/><circle class="w" cx="820" cy="556" r="6.65"/><circle cx="517" cy="413" r="6.65"/><circle cx="593" cy="495" r="6.65"/><circle class="w" cx="842" cy="304" r="6.65"/><circle class="w" cx="748" cy="533" r="6.65"/><circle cx="621" cy="368" r="6.65"/><circle class="w" cx="842" cy="473" r="6.65"/><circle cx="689" cy="644" r="6.65"/><circle class="w" cx="790" cy="553" r="6.65"/><circle class="w" cx="713" cy="491" r="6.65"/><circle class="w" cx="802" cy="568" r="6.65"/><circle class="w" cx="865" cy="450" r="6.65"/><circle cx="511" cy="495" r="6.65"/><circle cx="627" cy="495" r="6.65"/><circle class="w" cx="756" cy="451" r="6.65"/><circle class="w" cx="863" cy="303" r="6.65"/><circle class="w" cx="917" cy="226" r="6.65"/><circle cx="580" cy="227" r="6.65"/><circle class="w" cx="671" cy="201" r="6.65"/><circle class="w" cx="792" cy="497" r="6.65"/><circle cx="610" cy="582" r="6.65"/><circle class="w" cx="828" cy="534" r="6.65"/><circle cx="549" cy="520" r="6.65"/><circle cx="624" cy="594" r="6.65"/><circle class="w" cx="783" cy="396" r="6.65"/><circle cx="575" cy="408" r="6.65"/><circle class="w" cx="799" cy="222" r="6.65"/><circle cx="532" cy="494" r="6.65"/><circle class="w" cx="824" cy="254" r="6.65"/><circle class="w" cx="875" cy="352" r="6.65"/><circle cx="713" cy="640" r="6.65"/><circle class="w" cx="724" cy="584" r="6.65"/><circle cx="560" cy="395" r="6.65"/><circle class="w" cx="698" cy="281" r="6.65"/><circle class="w" cx="842" cy="454" r="6.65"/><circle cx="478" cy="327" r="6.65"/><circle cx="507" cy="222" r="6.65"/><circle cx="576" cy="482" r="6.65"/><circle class="w" cx="882" cy="370" r="6.65"/><circle class="w" cx="731" cy="616" r="6.65"/><circle cx="544" cy="585" r="6.65"/><circle class="w" cx="793" cy="365" r="6.65"/><circle class="w" cx="835" cy="373" r="6.65"/><circle class="w" cx="855" cy="194" r="6.65"/><circle cx="532" cy="513" r="6.65"/><circle class="w" cx="779" cy="414" r="6.65"/><circle cx="548" cy="636" r="6.65"/><circle class="w" cx="733" cy="653" r="6.65"/><circle cx="513" cy="514" r="6.65"/><circle class="w" cx="835" cy="270" r="6.65"/><circle cx="585" cy="349" r="6.65"/><circle class="w" cx="763" cy="405" r="6.65"/><circle cx="552" cy="329" r="6.65"/><circle class="w" cx="746" cy="436" r="6.65"/><circle class="w" cx="792" cy="345" r="6.65"/><circle cx="516" cy="239" r="6.65"/><circle cx="577" cy="633" r="6.65"/><circle class="w" cx="841" cy="392" r="6.65"/><circle cx="524" cy="430" r="6.65"/><circle class="w" cx="766" cy="628" r="6.65"/><circle class="w" cx="754" cy="262" r="6.65"/><circle cx="590" cy="329" r="6.65"/><circle class="w" cx="704" cy="590" r="6.65"/><circle class="w" cx="731" cy="206" r="6.65"/><circle cx="598" cy="514" r="6.65"/><circle cx="643" cy="621" r="6.65"/><circle cx="547" cy="656" r="6.65"/><circle class="w" cx="741" cy="411" r="6.65"/><circle cx="548" cy="603" r="6.65"/><circle cx="568" cy="679" r="6.65"/><circle class="w" cx="812" cy="203" r="6.65"/><circle cx="568" cy="268" r="6.65"/><circle cx="601" cy="302" r="6.65"/><circle class="w" cx="780" cy="202" r="6.65"/><circle cx="529" cy="569" r="6.65"/><circle class="w" cx="754" cy="340" r="6.65"/><circle class="w" cx="856" cy="362" r="6.65"/><circle cx="588" cy="556" r="6.65"/><circle class="w" cx="824" cy="573" r="6.65"/><circle class="w" cx="780" cy="536" r="6.65"/><circle cx="645" cy="496" r="6.65"/><circle cx="637" cy="561" r="6.65"/><circle class="w" cx="838" cy="499" r="6.65"/><circle class="w" cx="827" cy="336" r="6.65"/><circle cx="583" cy="535" r="6.65"/><circle cx="646" cy="518" r="6.65"/><circle cx="527" cy="195" r="6.65"/><circle class="w" cx="836" cy="427" r="6.65"/><circle cx="548" cy="684" r="6.65"/><circle class="w" cx="818" cy="651" r="6.65"/><circle class="w" cx="778" cy="613" r="6.65"/><circle cx="610" cy="413" r="6.65"/><circle class="w" cx="785" cy="245" r="6.65"/><circle class="w" cx="800" cy="384" r="6.65"/><circle class="w" cx="740" cy="372" r="6.65"/><circle cx="590" cy="680" r="6.65"/><circle class="w" cx="853" cy="324" r="6.65"/><circle cx="524" cy="389" r="6.65"/><circle class="w" cx="743" cy="325" r="6.65"/><circle class="w" cx="815" cy="424" r="6.65"/><circle cx="615" cy="204" r="6.65"/><circle cx="627" cy="388" r="6.65"/><circle cx="476" cy="239" r="6.65"/><circle cx="558" cy="490" r="6.65"/><circle cx="692" cy="508" r="6.65"/><circle cx="587" cy="452" r="6.65"/><circle cx="486" cy="397" r="6.65"/><circle cx="594" cy="265" r="6.65"/><circle class="w" cx="893" cy="319" r="6.65"/><circle class="w" cx="858" cy="497" r="6.65"/><circle class="w" cx="751" cy="223" r="6.65"/><circle class="w" cx="838" cy="637" r="6.65"/><circle cx="501" cy="432" r="6.65"/><circle cx="537" cy="468" r="6.65"/><circle class="w" cx="767" cy="492" r="6.65"/><circle class="w" cx="821" cy="235" r="6.65"/><circle cx="496" cy="296" r="6.65"/><circle cx="566" cy="660" r="6.65"/><circle class="w" cx="697" cy="203" r="6.65"/><circle cx="503" cy="467" r="6.65"/><circle class="w" cx="795" cy="270" r="6.65"/><circle class="w" cx="767" cy="572" r="6.65"/><circle cx="527" cy="602" r="6.65"/><circle class="w" cx="802" cy="413" r="6.65"/><circle class="w" cx="803" cy="241" r="6.65"/><circle class="w" cx="853" cy="288" r="6.65"/><circle class="w" cx="813" cy="291" r="6.65"/><circle class="w" cx="780" cy="676" r="6.65"/><circle cx="512" cy="261" r="6.65"/><circle class="w" cx="855" cy="541" r="6.65"/><circle class="w" cx="683" cy="382" r="6.65"/><circle class="w" cx="851" cy="602" r="6.65"/><circle class="w" cx="756" cy="610" r="6.65"/><circle class="w" cx="764" cy="467" r="6.65"/><circle class="w" cx="872" cy="287" r="6.65"/><circle cx="563" cy="217" r="6.65"/><circle cx="480" cy="258" r="6.65"/><circle class="w" cx="828" cy="622" r="6.65"/><circle cx="478" cy="220" r="6.65"/><circle class="w" cx="739" cy="351" r="6.65"/><circle cx="618" cy="610" r="6.65"/><circle cx="658" cy="599" r="6.65"/><circle class="w" cx="811" cy="368" r="6.65"/><circle cx="629" cy="420" r="6.65"/><circle cx="521" cy="289" r="6.65"/><circle cx="518" cy="556" r="6.65"/><circle cx="538" cy="552" r="6.65"/><circle cx="679" cy="661" r="6.65"/><circle class="w" cx="872" cy="482" r="6.65"/><circle cx="497" cy="205" r="6.65"/><circle cx="579" cy="598" r="6.65"/><circle class="w" cx="772" cy="331" r="6.65"/><circle cx="702" cy="657" r="6.65"/><circle class="w" cx="862" cy="405" r="6.65"/><circle class="w" cx="775" cy="368" r="6.65"/><circle cx="528" cy="654" r="6.65"/><circle cx="659" cy="685" r="6.65"/><circle class="w" cx="701" cy="404" r="6.65"/><circle cx="512" cy="348" r="6.65"/><circle cx="651" cy="269" r="6.65"/><circle class="w" cx="729" cy="291" r="6.65"/><circle class="w" cx="806" cy="475" r="6.65"/><circle cx="632" cy="672" r="6.65"/><circle cx="538" cy="299" r="6.65"/><circle class="w" cx="842" cy="577" r="6.65"/><circle cx="564" cy="511" r="6.65"/><circle cx="614" cy="666" r="6.65"/><circle cx="541" cy="412" r="6.65"/><circle class="w" cx="707" cy="309" r="6.65"/><circle class="w" cx="844" cy="230" r="6.65"/><circle cx="533" cy="623" r="6.65"/><circle cx="612" cy="325" r="6.65"/><circle cx="550" cy="361" r="6.65"/><circle cx="594" cy="653" r="6.65"/><circle class="w" cx="804" cy="605" r="6.65"/><circle class="w" cx="789" cy="326" r="6.65"/><circle cx="629" cy="346" r="6.65"/><circle class="w" cx="719" cy="271" r="6.65"/><circle cx="641" cy="214" r="6.65"/><circle cx="488" cy="312" r="6.65"/><circle cx="595" cy="587" r="6.65"/><circle class="w" cx="711" cy="507" r="6.65"/><circle cx="518" cy="307" r="6.65"/><circle cx="565" cy="250" r="6.65"/><circle class="w" cx="780" cy="636" r="6.65"/><circle cx="495" cy="239" r="6.65"/><circle cx="701" cy="560" r="6.65"/><circle cx="531" cy="248" r="6.65"/><circle cx="532" cy="337" r="6.65"/><circle class="w" cx="786" cy="658" r="6.65"/><circle cx="542" cy="215" r="6.65"/><circle class="w" cx="766" cy="548" r="6.65"/><circle class="w" cx="847" cy="653" r="6.65"/><circle class="w" cx="775" cy="223" r="6.65"/><circle cx="516" cy="587" r="6.65"/><circle cx="559" cy="314" r="6.65"/><circle cx="574" cy="335" r="6.65"/><circle class="w" cx="771" cy="521" r="6.65"/><circle cx="472" cy="202" r="6.65"/><circle class="w" cx="715" cy="532" r="6.65"/><circle class="w" cx="858" cy="345" r="6.65"/><circle cx="570" cy="459" r="6.65"/><circle class="w" cx="726" cy="254" r="6.65"/><circle class="w" cx="822" cy="500" r="6.65"/><circle class="w" cx="800" cy="642" r="6.65"/><circle class="w" cx="722" cy="345" r="6.65"/><circle class="w" cx="832" cy="664" r="6.65"/><circle class="w" cx="744" cy="307" r="6.65"/><circle cx="567" cy="355" r="6.65"/><circle cx="533" cy="447" r="6.65"/><circle class="w" cx="700" cy="376" r="6.65"/><circle class="w" cx="835" cy="551" r="6.65"/><circle class="w" cx="811" cy="456" r="6.65"/><circle cx="649" cy="638" r="6.65"/><circle class="w" cx="738" cy="270" r="6.65"/><circle cx="696" cy="484" r="6.65"/><circle class="w" cx="900" cy="223" r="6.65"/><circle class="w" cx="800" cy="673" r="6.65"/><circle class="w" cx="875" cy="393" r="6.65"/><circle class="w" cx="773" cy="258" r="6.65"/><circle class="w" cx="866" cy="208" r="6.65"/><circle cx="579" cy="281" r="6.65"/><circle cx="598" cy="610" r="6.65"/><circle cx="628" cy="576" r="6.65"/><circle class="w" cx="827" cy="478" r="6.65"/><circle cx="676" cy="602" r="6.65"/><circle cx="639" cy="591" r="6.65"/><circle class="w" cx="748" cy="663" r="6.65"/><circle cx="557" cy="534" r="6.65"/><circle class="w" cx="823" cy="386" r="6.65"/><circle class="w" cx="892" cy="278" r="6.65"/><circle cx="678" cy="687" r="6.65"/><circle class="w" cx="794" cy="289" r="6.65"/><circle cx="499" cy="382" r="6.65"/><circle class="w" cx="728" cy="480" r="6.65"/><circle cx="627" cy="476" r="6.65"/><circle class="w" cx="843" cy="408" r="6.65"/><circle cx="688" cy="588" r="6.65"/><circle class="w" cx="858" cy="438" r="6.65"/><circle class="w" cx="877" cy="432" r="6.65"/><circle class="w" cx="800" cy="543" r="6.65"/><circle class="w" cx="899" cy="261" r="6.65"/><circle cx="504" cy="414" r="6.65"/><circle class="w" cx="881" cy="236" r="6.65"/><circle class="w" cx="850" cy="516" r="6.65"/><circle cx="509" cy="449" r="6.65"/><circle cx="555" cy="558" r="6.65"/><circle class="w" cx="813" cy="529" r="6.65"/><circle class="w" cx="780" cy="597" r="6.65"/><circle cx="626" cy="264" r="6.65"/><circle cx="553" cy="275" r="6.65"/><circle class="w" cx="833" cy="606" r="6.65"/><circle class="w" cx="816" cy="588" r="6.65"/><circle cx="572" cy="440" r="6.65"/><circle cx="656" cy="246" r="6.65"/><circle class="w" cx="756" cy="390" r="6.65"/><circle class="w" cx="831" cy="446" r="6.65"/><circle cx="581" cy="518" r="6.65"/><circle cx="676" cy="513" r="6.65"/><circle cx="678" cy="480" r="6.65"/><circle class="w" cx="857" cy="461" r="6.65"/><circle cx="532" cy="267" r="6.65"/><circle class="w" cx="755" cy="360" r="6.65"/><circle cx="550" cy="439" r="6.65"/><circle cx="593" cy="633" r="6.65"/><circle cx="604" cy="530" r="6.65"/><circle class="w" cx="851" cy="560" r="6.65"/><circle cx="699" cy="523" r="6.65"/><circle class="w" cx="752" cy="500" r="6.65"/><circle class="w" cx="731" cy="230" r="6.65"/><circle class="w" cx="875" cy="328" r="6.65"/><circle cx="621" cy="639" r="6.65"/><circle cx="659" cy="208" r="6.65"/><circle class="w" cx="812" cy="328" r="6.65"/><circle cx="573" cy="204" r="6.65"/><circle cx="530" cy="537" r="6.65"/><circle cx="711" cy="676" r="6.65"/><circle class="w" cx="820" cy="268" r="6.65"/><circle cx="660" cy="229" r="6.65"/><circle cx="574" cy="497" r="6.65"/><circle cx="632" cy="517" r="6.65"/><circle class="w" cx="756" cy="275" r="6.65"/><circle class="w" cx="797" cy="587" r="6.65"/><circle class="w" cx="720" cy="607" r="6.65"/><circle class="w" cx="872" cy="268" r="6.65"/><circle class="w" cx="782" cy="578" r="6.65"/><circle class="w" cx="863" cy="230" r="6.65"/><circle cx="704" cy="623" r="6.65"/><circle class="w" cx="841" cy="314" r="6.65"/><circle cx="577" cy="566" r="6.65"/><circle cx="539" cy="395" r="6.65"/><circle class="w" cx="740" cy="602" r="6.65"/><circle class="w" cx="797" cy="255" r="6.65"/><circle cx="535" cy="372" r="6.65"/><circle class="w" cx="824" cy="304" r="6.65"/><circle cx="558" cy="408" r="6.65"/><circle cx="513" cy="210" r="6.65"/><circle class="w" cx="827" cy="517" r="6.65"/><circle class="w" cx="797" cy="432" r="6.65"/><circle class="w" cx="771" cy="348" r="6.65"/><circle cx="609" cy="364" r="6.65"/><circle class="w" cx="710" cy="233" r="6.65"/><circle class="w" cx="852" cy="268" r="6.65"/><circle cx="591" cy="438" r="6.65"/><circle cx="578" cy="650" r="6.65"/><circle cx="587" cy="469" r="6.65"/><circle class="w" cx="794" cy="505" r="6.65"/><circle cx="511" cy="397" r="6.65"/><circle class="w" cx="833" cy="246" r="6.65"/><circle cx="611" cy="505" r="6.65"/><circle class="w" cx="794" cy="450" r="6.65"/><circle class="w" cx="891" cy="204" r="6.65"/><circle class="w" cx="837" cy="197" r="6.65"/><circle cx="639" cy="537" r="6.65"/><circle cx="646" cy="574" r="6.65"/><circle class="w" cx="730" cy="407" r="6.65"/><circle cx="554" cy="293" r="6.65"/><circle class="w" cx="770" cy="662" r="6.65"/><circle class="w" cx="864" cy="311" r="6.65"/><circle class="w" cx="782" cy="558" r="6.65"/><circle class="w" cx="746" cy="245" r="6.65"/><circle class="w" cx="744" cy="447" r="6.65"/><circle class="w" cx="678" cy="207" r="6.65"/><circle cx="616" cy="293" r="6.65"/><circle cx="561" cy="639" r="6.65"/><circle cx="583" cy="409" r="6.65"/><circle class="w" cx="871" cy="362" r="6.65"/><circle cx="646" cy="609" r="6.65"/><circle cx="734" cy="685" r="6.65"/><circle class="w" cx="755" cy="533" r="6.65"/><circle cx="683" cy="280" r="6.65"/><circle cx="563" cy="598" r="6.65"/><circle class="w" cx="768" cy="450" r="6.65"/><circle cx="602" cy="489" r="6.65"/><circle cx="668" cy="674" r="6.65"/><circle cx="551" cy="341" r="6.65"/><circle cx="673" cy="442" r="6.65"/><circle class="w" cx="808" cy="572" r="6.65"/><circle cx="699" cy="467" r="6.65"/><circle cx="560" cy="375" r="6.65"/><circle cx="495" cy="265" r="6.65"/><circle cx="533" cy="579" r="6.65"/><circle cx="693" cy="670" r="6.65"/><circle cx="545" cy="666" r="6.65"/><circle class="w" cx="884" cy="304" r="6.65"/><circle class="w" cx="898" cy="240" r="6.65"/><circle class="w" cx="845" cy="358" r="6.65"/><circle cx="596" cy="200" r="6.65"/><circle cx="631" cy="228" r="6.65"/><circle class="w" cx="814" cy="554" r="6.65"/><circle class="w" cx="796" cy="624" r="6.65"/><circle cx="627" cy="622" r="6.65"/><circle class="w" cx="797" cy="224" r="6.65"/><circle class="w" cx="818" cy="671" r="6.65"/><circle cx="522" cy="474" r="6.65"/><circle class="w" cx="754" cy="477" r="6.65"/><circle class="w" cx="795" cy="523" r="6.65"/><circle class="w" cx="840" cy="334" r="6.65"/><circle cx="728" cy="624" r="6.65"/><circle class="w" cx="790" cy="399" r="6.65"/><circle class="w" cx="770" cy="618" r="6.65"/><circle cx="631" cy="436" r="6.65"/><circle cx="539" cy="491" r="6.65"/><circle cx="601" cy="553" r="6.65"/><circle cx="518" cy="493" r="6.65"/><circle class="w" cx="752" cy="408" r="6.65"/><circle cx="551" cy="242" r="6.65"/><circle cx="537" cy="641" r="6.65"/><circle cx="607" cy="266" r="6.65"/><circle class="w" cx="807" cy="491" r="6.65"/><circle cx="608" cy="310" r="6.65"/><circle cx="713" cy="638" r="6.65"/><circle cx="566" cy="616" r="6.65"/><circle class="w" cx="857" cy="484" r="6.65"/><circle cx="646" cy="316" r="6.65"/><circle class="w" cx="737" cy="425" r="6.65"/><circle class="w" cx="739" cy="213" r="6.65"/><circle cx="585" cy="303" r="6.65"/><circle class="w" cx="706" cy="341" r="6.65"/><circle class="w" cx="837" cy="375" r="6.65"/><circle class="w" cx="824" cy="409" r="6.65"/><circle cx="684" cy="569" r="6.65"/><circle class="w" cx="843" cy="297" r="6.65"/><circle class="w" cx="828" cy="536" r="6.65"/><circle class="w" cx="717" cy="376" r="6.65"/><circle cx="544" cy="607" r="6.65"/><circle cx="555" cy="501" r="6.65"/><circle cx="679" cy="417" r="6.65"/><circle cx="621" cy="593" r="6.65"/><circle class="w" cx="696" cy="295" r="6.65"/><circle cx="644" cy="421" r="6.65"/><circle cx="569" cy="545" r="6.65"/><circle cx="624" cy="203" r="6.65"/><circle class="w" cx="758" cy="580" r="6.65"/><circle class="w" cx="781" cy="271" r="6.65"/><circle class="w" cx="822" cy="648" r="6.65"/><circle cx="493" cy="283" r="6.65"/><circle cx="709" cy="491" r="6.65"/><circle class="w" cx="783" cy="539" r="6.65"/><circle class="w" cx="793" cy="376" r="6.65"/><circle class="w" cx="856" cy="422" r="6.65"/><circle cx="519" cy="239" r="6.65"/><circle class="w" cx="819" cy="628" r="6.65"/><circle class="w" cx="814" cy="356" r="6.65"/><circle class="w" cx="740" cy="284" r="6.65"/><circle class="w" cx="852" cy="210" r="6.65"/><circle class="w" cx="852" cy="245" r="6.65"/><circle cx="609" cy="471" r="6.65"/><circle class="w" cx="788" cy="203" r="6.65"/><circle cx="533" cy="228" r="6.65"/><circle class="w" cx="796" cy="339" r="6.65"/><circle cx="525" cy="324" r="6.65"/><circle class="w" cx="847" cy="499" r="6.65"/><circle class="w" cx="862" cy="292" r="6.65"/><circle class="w" cx="767" cy="211" r="6.65"/><circle class="w" cx="778" cy="685" r="6.65"/><circle cx="535" cy="423" r="6.65"/><circle class="w" cx="820" cy="430" r="6.65"/><circle class="w" cx="716" cy="325" r="6.65"/><circle cx="607" cy="656" r="6.65"/><circle cx="608" cy="444" r="6.65"/><circle cx="620" cy="682" r="6.65"/><circle cx="625" cy="555" r="6.65"/><circle cx="519" cy="280" r="6.65"/><circle cx="568" cy="476" r="6.65"/><circle cx="623" cy="394" r="6.65"/><circle cx="528" cy="597" r="6.65"/><circle cx="555" cy="217" r="6.65"/><circle class="w" cx="787" cy="476" r="6.65"/><circle class="w" cx="748" cy="647" r="6.65"/><circle cx="638" cy="499" r="6.65"/><circle cx="597" cy="420" r="6.65"/><circle class="w" cx="809" cy="286" r="6.65"/><circle cx="524" cy="455" r="6.65"/><circle class="w" cx="711" cy="401" r="6.65"/><circle cx="611" cy="407" r="6.65"/><circle cx="610" cy="213" r="6.65"/><circle class="w" cx="803" cy="656" r="6.65"/><circle cx="515" cy="339" r="6.65"/><circle class="w" cx="793" cy="605" r="6.65"/><circle cx="563" cy="327" r="6.65"/><circle cx="671" cy="241" r="6.65"/><circle cx="575" cy="424" r="6.65"/><circle class="w" cx="726" cy="304" r="6.65"/><circle cx="591" cy="356" r="6.65"/><circle cx="496" cy="227" r="6.65"/><circle class="w" cx="732" cy="547" r="6.65"/><circle class="w" cx="761" cy="632" r="6.65"/><circle cx="716" cy="516" r="6.65"/><circle class="w" cx="738" cy="373" r="6.65"/><circle cx="638" cy="380" r="6.65"/><circle cx="541" cy="521" r="6.65"/><circle class="w" cx="816" cy="232" r="6.65"/><circle cx="588" cy="376" r="6.65"/><circle cx="531" cy="558" r="6.65"/><circle class="w" cx="819" cy="467" r="6.65"/><circle cx="509" cy="313" r="6.65"/><circle cx="668" cy="402" r="6.65"/><circle class="w" cx="813" cy="379" r="6.65"/><circle class="w" cx="757" cy="514" r="6.65"/><circle class="w" cx="812" cy="514" r="6.65"/><circle cx="563" cy="393" r="6.65"/><circle cx="574" cy="246" r="6.65"/><circle class="w" cx="747" cy="261" r="6.65"/><circle class="w" cx="757" cy="290" r="6.65"/><circle class="w" cx="771" cy="326" r="6.65"/><circle cx="562" cy="570" r="6.65"/><circle class="w" cx="784" cy="309" r="6.65"/><circle class="w" cx="769" cy="377" r="6.65"/><circle cx="499" cy="201" r="6.65"/><circle cx="583" cy="452" r="6.65"/><circle cx="540" cy="311" r="6.65"/><circle class="w" cx="786" cy="666" r="6.65"/><circle class="w" cx="763" cy="599" r="6.65"/><circle cx="507" cy="294" r="6.65"/><circle class="w" cx="726" cy="468" r="6.65"/><circle class="w" cx="867" cy="386" r="6.65"/><circle cx="659" cy="431" r="6.65"/><circle cx="612" cy="611" r="6.65"/><circle cx="605" cy="387" r="6.65"/><circle cx="630" cy="657" r="6.65"/><circle class="w" cx="764" cy="562" r="6.65"/><circle cx="543" cy="282" r="6.65"/><circle cx="587" cy="543" r="6.65"/><circle cx="523" cy="200" r="6.65"/><circle class="w" cx="817" cy="448" r="6.65"/><circle cx="583" cy="271" r="6.65"/><circle class="w" cx="798" cy="684" r="6.65"/><circle class="w" cx="737" cy="523" r="6.65"/><circle cx="566" cy="515" r="6.65"/><circle cx="607" cy="638" r="6.65"/><circle cx="531" cy="347" r="6.65"/><circle cx="581" cy="394" r="6.65"/><circle class="w" cx="793" cy="417" r="6.65"/><circle class="w" cx="842" cy="522" r="6.65"/><circle class="w" cx="782" cy="229" r="6.65"/><circle cx="689" cy="432" r="6.65"/><circle class="w" cx="848" cy="388" r="6.65"/><circle class="w" cx="839" cy="274" r="6.65"/><circle cx="590" cy="585" r="6.65"/><circle class="w" cx="779" cy="495" r="6.65"/><circle cx="557" cy="426" r="6.65"/><circle cx="656" cy="460" r="6.65"/><circle cx="667" cy="643" r="6.65"/><circle cx="562" cy="267" r="6.65"/><circle cx="658" cy="547" r="6.65"/><circle cx="612" cy="541" r="6.65"/><circle cx="548" cy="453" r="6.65"/><circle cx="630" cy="319" r="6.65"/><circle class="w" cx="780" cy="432" r="6.65"/><circle class="w" cx="844" cy="435" r="6.65"/><circle class="w" cx="748" cy="306" r="6.65"/><circle cx="570" cy="686" r="6.65"/><circle class="w" cx="705" cy="310" r="6.65"/><circle cx="720" cy="672" r="6.65"/><circle cx="589" cy="213" r="6.65"/><circle class="w" cx="886" cy="227" r="6.65"/><circle cx="502" cy="245" r="6.65"/><circle cx="715" cy="579" r="6.65"/><circle class="w" cx="742" cy="631" r="6.65"/><circle cx="546" cy="385" r="6.65"/><circle cx="686" cy="686" r="6.65"/><circle class="w" cx="834" cy="229" r="6.65"/><circle class="w" cx="719" cy="282" r="6.65"/><circle class="w" cx="885" cy="250" r="6.65"/><circle class="w" cx="736" cy="588" r="6.65"/><circle cx="624" cy="278" r="6.65"/><circle cx="719" cy="653" r="6.65"/><circle class="w" cx="766" cy="395" r="6.65"/><circle cx="668" cy="474" r="6.65"/><circle class="w" cx="825" cy="495" r="6.65"/><circle class="w" cx="804" cy="638" r="6.65"/><circle cx="546" cy="586" r="6.65"/><circle cx="636" cy="600" r="6.65"/><circle cx="617" cy="429" r="6.65"/><circle cx="707" cy="535" r="6.65"/><circle cx="521" cy="438" r="6.65"/><circle class="w" cx="795" cy="243" r="6.65"/><circle class="w" cx="793" cy="294" r="6.65"/><circle class="w" cx="722" cy="420" r="6.65"/><circle cx="598" cy="672" r="6.65"/><circle cx="544" cy="404" r="6.65"/><circle cx="711" cy="455" r="6.65"/><circle cx="541" cy="330" r="6.65"/><circle class="w" cx="821" cy="573" r="6.65"/><circle cx="641" cy="482" r="6.65"/><circle class="w" cx="768" cy="532" r="6.65"/><circle cx="518" cy="259" r="6.65"/><circle cx="570" cy="300" r="6.65"/><circle cx="563" cy="232" r="6.65"/><circle cx="565" cy="356" r="6.65"/><circle cx="627" cy="454" r="6.65"/><circle cx="650" cy="198" r="6.65"/><circle cx="660" cy="516" r="6.65"/><circle class="w" cx="718" cy="241" r="6.65"/><circle class="w" cx="816" cy="599" r="6.65"/><circle cx="749" cy="674" r="6.65"/><circle class="w" cx="732" cy="443" r="6.65"/><circle cx="587" cy="642" r="6.65"/><circle cx="693" cy="411" r="6.65"/><circle cx="632" cy="262" r="6.65"/><circle cx="617" cy="491" r="6.65"/><circle cx="581" cy="662" r="6.65"/><circle cx="624" cy="509" r="6.65"/><circle cx="640" cy="628" r="6.65"/><circle cx="564" cy="653" r="6.65"/><circle cx="550" cy="482" r="6.65"/><circle class="w" cx="853" cy="229" r="6.65"/><circle cx="666" cy="225" r="6.65"/><circle cx="524" cy="505" r="6.65"/><circle cx="588" cy="233" r="6.65"/><circle cx="598" cy="461" r="6.65"/><circle cx="594" cy="509" r="6.65"/><circle class="w" cx="745" cy="232" r="6.65"/><circle class="w" cx="752" cy="543" r="6.65"/><circle cx="557" cy="531" r="6.65"/><circle class="w" cx="791" cy="567" r="6.65"/><circle cx="596" cy="291" r="6.65"/><circle class="w" cx="778" cy="451" r="6.65"/><circle cx="694" cy="616" r="6.65"/><circle cx="725" cy="485" r="6.65"/><circle cx="681" cy="521" r="6.65"/><circle class="w" cx="870" cy="278" r="6.65"/><circle class="w" cx="832" cy="315" r="6.65"/><circle cx="590" cy="562" r="6.65"/><circle class="w" cx="871" cy="239" r="6.65"/><circle cx="542" cy="541" r="6.65"/><circle class="w" cx="776" cy="514" r="6.65"/><circle class="w" cx="830" cy="390" r="6.65"/><circle cx="550" cy="636" r="6.65"/><circle cx="539" cy="208" r="6.65"/><circle cx="650" cy="331" r="6.65"/><circle cx="646" cy="230" r="6.65"/><circle cx="651" cy="354" r="6.65"/><circle class="w" cx="732" cy="568" r="6.65"/><circle class="w" cx="842" cy="484" r="6.65"/><circle cx="715" cy="620" r="6.65"/><circle class="w" cx="847" cy="454" r="6.65"/><circle class="w" cx="695" cy="214" r="6.65"/><circle cx="683" cy="634" r="6.65"/><circle class="w" cx="849" cy="369" r="6.65"/><circle class="w" cx="844" cy="346" r="6.65"/><circle cx="578" cy="489" r="6.65"/><circle class="w" cx="775" cy="577" r="6.65"/><circle class="w" cx="778" cy="354" r="6.65"/><circle cx="566" cy="459" r="6.65"/><circle class="w" cx="748" cy="560" r="6.65"/><circle cx="680" cy="200" r="6.65"/><circle class="w" cx="775" cy="283" r="6.65"/><circle class="w" cx="813" cy="308" r="6.65"/><circle class="w" cx="743" cy="476" r="6.65"/><circle class="w" cx="813" cy="249" r="6.65"/><circle cx="575" cy="199" r="6.65"/><circle cx="679" cy="348" r="6.65"/><circle cx="516" cy="395" r="6.65"/><circle cx="700" cy="518" r="6.65"/><circle class="w" cx="793" cy="271" r="6.65"/><circle cx="533" cy="371" r="6.65"/><circle class="w" cx="782" cy="617" r="6.65"/><circle cx="656" cy="492" r="6.65"/><circle cx="581" cy="330" r="6.65"/><circle cx="688" cy="484" r="6.65"/><circle cx="619" cy="572" r="6.65"/><circle cx="640" cy="552" r="6.65"/><circle cx="670" cy="686" r="6.65"/><circle cx="647" cy="274" r="6.65"/><circle class="w" cx="759" cy="439" r="6.65"/><circle class="w" cx="795" cy="533" r="6.65"/><circle cx="549" cy="349" r="6.65"/><circle class="w" cx="727" cy="210" r="6.65"/><circle cx="600" cy="324" r="6.65"/><circle class="w" cx="756" cy="341" r="6.65"/><circle class="w" cx="766" cy="305" r="6.65"/><circle cx="706" cy="380" r="6.65"/><circle cx="724" cy="637" r="6.65"/><circle class="w" cx="822" cy="551" r="6.65"/><circle class="w" cx="870" cy="305" r="6.65"/><circle class="w" cx="802" cy="456" r="6.65"/><circle cx="572" cy="439" r="6.65"/><circle class="w" cx="780" cy="407" r="6.65"/><circle cx="699" cy="557" r="6.65"/><circle cx="531" cy="479" r="6.65"/><circle class="w" cx="878" cy="206" r="6.65"/><circle cx="596" cy="404" r="6.65"/><circle cx="548" cy="563" r="6.65"/><circle class="w" cx="831" cy="333" r="6.65"/><circle cx="596" cy="435" r="6.65"/><circle class="w" cx="728" cy="400" r="6.65"/><circle class="w" cx="783" cy="387" r="6.65"/><circle cx="515" cy="354" r="6.65"/><circle cx="628" cy="527" r="6.65"/><circle class="w" cx="749" cy="607" r="6.65"/><circle class="w" cx="814" cy="667" r="6.65"/><circle class="w" cx="834" cy="419" r="6.65"/><circle class="w" cx="826" cy="207" r="6.65"/><circle cx="547" cy="619" r="6.65"/><circle cx="569" cy="215" r="6.65"/><circle cx="647" cy="665" r="6.65"/><circle cx="514" cy="231" r="6.65"/><circle class="w" cx="754" cy="216" r="6.65"/><circle class="w" cx="831" cy="295" r="6.65"/><circle cx="588" cy="686" r="6.65"/><circle cx="697" cy="285" r="6.65"/><circle class="w" cx="841" cy="246" r="6.65"/><circle class="w" cx="744" cy="457" r="6.65"/><circle cx="513" cy="213" r="6.65"/><circle cx="579" cy="626" r="6.65"/><circle class="w" cx="809" cy="415" r="6.65"/><circle cx="606" cy="596" r="6.65"/><circle cx="579" cy="595" r="6.65"/><circle cx="557" cy="676" r="6.65"/><circle cx="622" cy="346" r="6.65"/><circle class="w" cx="801" cy="615" r="6.65"/><circle cx="554" cy="371" r="6.65"/><circle class="w" cx="850" cy="330" r="6.65"/><circle class="w" cx="797" cy="348" r="6.65"/><circle class="w" cx="822" cy="278" r="6.65"/><circle cx="561" cy="283" r="6.65"/><circle class="w" cx="745" cy="420" r="6.65"/><circle cx="541" cy="261" r="6.65"/><circle cx="714" cy="691" r="6.65"/><circle cx="507" cy="278" r="6.65"/><circle cx="670" cy="329" r="6.65"/><circle cx="606" cy="306" r="6.65"/><circle cx="494" cy="214" r="6.65"/><circle cx="544" cy="227" r="6.65"/><circle class="w" cx="797" cy="595" r="6.65"/><circle class="w" cx="805" cy="389" r="6.65"/><circle class="w" cx="803" cy="502" r="6.65"/><circle class="w" cx="795" cy="651" r="6.65"/><circle cx="525" cy="409" r="6.65"/><circle cx="562" cy="409" r="6.65"/><circle cx="677" cy="457" r="6.65"/><circle cx="552" cy="304" r="6.65"/><circle class="w" cx="747" cy="399" r="6.65"/><circle class="w" cx="817" cy="481" r="6.65"/><circle cx="618" cy="627" r="6.65"/><circle cx="622" cy="216" r="6.65"/><circle cx="736" cy="506" r="6.65"/><circle class="w" cx="737" cy="247" r="6.65"/><circle class="w" cx="784" cy="690" r="6.65"/><circle cx="650" cy="373" r="6.65"/><circle cx="575" cy="571" r="6.65"/><circle cx="606" cy="244" r="6.65"/><circle cx="633" cy="292" r="6.65"/><circle class="w" cx="778" cy="479" r="6.65"/><circle cx="650" cy="645" r="6.65"/><circle class="w" cx="802" cy="368" r="6.65"/><circle cx="700" cy="635" r="6.65"/><circle class="w" cx="788" cy="634" r="6.65"/><circle cx="618" cy="664" r="6.65"/><circle cx="559" cy="502" r="6.65"/><circle cx="751" cy="658" r="6.65"/><circle class="w" cx="724" cy="332" r="6.65"/><circle class="w" cx="822" cy="352" r="6.65"/><circle cx="531" cy="278" r="6.65"/><circle class="w" cx="792" cy="331" r="6.65"/><circle class="w" cx="741" cy="291" r="6.65"/><circle cx="573" cy="525" r="6.65"/><circle cx="732" cy="620" r="6.65"/><circle class="w" cx="727" cy="377" r="6.65"/><circle cx="636" cy="582" r="6.65"/><circle class="w" cx="829" cy="448" r="6.65"/><circle cx="630" cy="397" r="6.65"/><circle cx="538" cy="430" r="6.65"/><circle cx="646" cy="412" r="6.65"/><circle cx="652" cy="684" r="6.65"/><circle class="w" cx="778" cy="600" r="6.65"/><circle cx="606" cy="476" r="6.65"/><circle class="w" cx="764" cy="643" r="6.65"/><circle cx="595" cy="535" r="6.65"/><circle class="w" cx="765" cy="619" r="6.65"/><circle cx="714" cy="471" r="6.65"/><circle class="w" cx="759" cy="588" r="6.65"/><circle class="w" cx="828" cy="259" r="6.65"/><circle cx="709" cy="411" r="6.65"/><circle class="w" cx="827" cy="517" r="6.65"/><circle cx="625" cy="644" r="6.65"/><circle class="w" cx="782" cy="370" r="6.65"/><circle cx="625" cy="478" r="6.65"/><circle cx="657" cy="568" r="6.65"/><circle cx="706" cy="665" r="6.65"/><circle cx="681" cy="365" r="6.65"/><circle cx="602" cy="649" r="6.65"/><circle cx="618" cy="685" r="6.65"/><circle class="w" cx="762" cy="412" r="6.65"/><circle cx="725" cy="521" r="6.65"/><circle class="w" cx="795" cy="312" r="6.65"/><circle class="w" cx="858" cy="251" r="6.65"/><circle cx="529" cy="460" r="6.65"/><circle cx="731" cy="658" r="6.65"/><circle cx="614" cy="404" r="6.65"/><circle cx="681" cy="229" r="6.65"/><circle class="w" cx="812" cy="337" r="6.65"/><circle cx="561" cy="582" r="6.65"/><circle class="w" cx="846" cy="207" r="6.65"/><circle class="w" cx="810" cy="437" r="6.65"/><circle cx="637" cy="328" r="6.65"/><circle class="w" cx="788" cy="550" r="6.65"/><circle cx="615" cy="365" r="6.65"/><circle cx="719" cy="435" r="6.65"/><circle cx="574" cy="375" r="6.65"/><circle class="w" cx="716" cy="255" r="6.65"/><circle cx="610" cy="515" r="6.65"/><circle class="w" cx="810" cy="583" r="6.65"/><circle cx="534" cy="393" r="6.65"/><circle cx="603" cy="419" r="6.65"/><circle cx="594" cy="266" r="6.65"/><circle class="w" cx="788" cy="257" r="6.65"/><circle cx="588" cy="476" r="6.65"/><circle class="w" cx="744" cy="200" r="6.65"/><circle cx="514" cy="312" r="6.65"/><circle cx="589" cy="612" r="6.65"/><circle cx="605" cy="564" r="6.65"/><circle cx="682" cy="671" r="6.65"/><circle cx="732" cy="677" r="6.65"/><circle class="w" cx="849" cy="297" r="6.65"/><circle cx="586" cy="247" r="6.65"/><circle cx="620" cy="316" r="6.65"/><circle class="w" cx="775" cy="319" r="6.65"/><circle class="w" cx="750" cy="381" r="6.65"/><circle class="w" cx="838" cy="403" r="6.65"/><circle cx="576" cy="507" r="6.65"/><circle cx="699" cy="681" r="6.65"/><circle cx="592" cy="375" r="6.65"/><circle class="w" cx="782" cy="297" r="6.65"/><circle cx="565" cy="244" r="6.65"/><circle class="w" cx="808" cy="266" r="6.65"/><circle class="w" cx="821" cy="236" r="6.65"/><circle class="w" cx="736" cy="222" r="6.65"/><circle class="w" cx="782" cy="669" r="6.65"/><circle cx="660" cy="533" r="6.65"/><circle class="w" cx="810" cy="644" r="6.65"/><circle cx="674" cy="622" r="6.65"/><circle cx="636" cy="207" r="6.65"/><circle class="w" cx="790" cy="465" r="6.65"/><circle cx="672" cy="486" r="6.65"/><circle cx="563" cy="635" r="6.65"/><circle class="w" cx="809" cy="565" r="6.65"/><circle cx="709" cy="344" r="6.65"/><circle cx="569" cy="475" r="6.65"/><circle cx="739" cy="642" r="6.65"/><circle cx="683" cy="562" r="6.65"/><circle cx="614" cy="548" r="6.65"/><circle cx="565" cy="616" r="6.65"/><circle class="w" cx="794" cy="422" r="6.65"/><circle cx="623" cy="444" r="6.65"/><circle class="w" cx="775" cy="229" r="6.65"/><circle cx="556" cy="440" r="6.65"/><circle cx="517" cy="293" r="6.65"/><circle cx="694" cy="252" r="6.65"/><circle cx="715" cy="556" r="6.65"/><circle class="w" cx="780" cy="528" r="6.65"/><circle cx="653" cy="624" r="6.65"/><circle cx="658" cy="235" r="6.65"/><circle class="w" cx="740" cy="355" r="6.65"/><circle cx="638" cy="353" r="6.65"/><circle cx="718" cy="315" r="6.65"/><circle cx="675" cy="273" r="6.65"/><circle class="w" cx="770" cy="463" r="6.65"/><circle cx="661" cy="396" r="6.65"/><circle cx="570" cy="549" r="6.65"/><circle class="w" cx="821" cy="464" r="6.65"/><circle cx="619" cy="606" r="6.65"/><circle class="w" cx="746" cy="573" r="6.65"/><circle cx="600" cy="631" r="6.65"/><circle cx="634" cy="675" r="6.65"/><circle class="w" cx="804" cy="295" r="6.65"/><circle cx="748" cy="626" r="6.65"/><circle class="w" cx="757" cy="532" r="6.65"/><circle cx="635" cy="564" r="6.65"/><circle cx="660" cy="469" r="6.65"/><circle cx="553" cy="459" r="6.65"/><circle cx="593" cy="211" r="6.65"/><circle class="w" cx="841" cy="384" r="6.65"/><circle cx="517" cy="266" r="6.65"/><circle cx="710" cy="511" r="6.65"/><circle class="w" cx="775" cy="562" r="6.65"/><circle cx="619" cy="236" r="6.65"/><circle cx="654" cy="591" r="6.65"/><circle cx="713" cy="390" r="6.65"/><circle cx="619" cy="586" r="6.65"/><circle class="w" cx="708" cy="203" r="6.65"/><circle cx="725" cy="575" r="6.65"/><circle cx="686" cy="402" r="6.65"/><circle cx="676" cy="213" r="6.65"/><circle cx="584" cy="316" r="6.65"/><circle class="w" cx="774" cy="209" r="6.65"/><circle class="w" cx="725" cy="418" r="6.65"/><circle cx="574" cy="453" r="6.65"/><circle cx="707" cy="454" r="6.65"/><circle class="w" cx="861" cy="230" r="6.65"/><circle cx="561" cy="346" r="6.65"/><circle cx="726" cy="539" r="6.65"/><circle cx="665" cy="511" r="6.65"/><circle class="w" cx="821" cy="424" r="6.65"/><circle cx="695" cy="471" r="6.65"/><circle class="w" cx="843" cy="358" r="6.65"/><circle cx="561" cy="263" r="6.65"/><circle class="w" cx="856" cy="281" r="6.65"/><circle class="w" cx="768" cy="507" r="6.65"/><circle cx="575" cy="357" r="6.65"/><circle cx="618" cy="283" r="6.65"/><circle cx="633" cy="543" r="6.65"/><circle class="w" cx="782" cy="496" r="6.65"/><circle class="w" cx="753" cy="253" r="6.65"/><circle cx="542" cy="499" r="6.65"/><circle class="w" cx="801" cy="522" r="6.65"/><circle cx="722" cy="496" r="6.65"/><circle cx="641" cy="436" r="6.65"/><circle class="w" cx="841" cy="233" r="6.65"/><circle cx="575" cy="690" r="6.65"/><circle cx="636" cy="244" r="6.65"/><circle cx="533" cy="248" r="6.65"/><circle cx="590" cy="554" r="6.65"/><circle cx="615" cy="494" r="6.65"/><circle cx="576" cy="283" r="6.65"/><circle cx="585" cy="432" r="6.65"/><circle class="w" cx="792" cy="236" r="6.65"/><circle cx="704" cy="540" r="6.65"/><circle cx="634" cy="502" r="6.65"/><circle class="w" cx="826" cy="316" r="6.65"/><circle class="w" cx="758" cy="426" r="6.65"/><circle class="w" cx="826" cy="219" r="6.65"/><circle class="w" cx="781" cy="582" r="6.65"/><circle cx="626" cy="462" r="6.65"/><circle cx="573" cy="395" r="6.65"/><circle cx="566" cy="598" r="6.65"/><circle class="w" cx="802" cy="481" r="6.65"/><circle cx="553" cy="538" r="6.65"/><circle cx="638" cy="310" r="6.65"/><circle cx="737" cy="474" r="6.65"/><circle cx="605" cy="460" r="6.65"/><circle cx="690" cy="649" r="6.65"/><circle cx="748" cy="686" r="6.65"/><circle cx="589" cy="572" r="6.65"/><circle cx="744" cy="590" r="6.65"/><circle class="w" cx="750" cy="514" r="6.65"/><circle class="w" cx="778" cy="433" r="6.65"/><circle class="w" cx="816" cy="373" r="6.65"/><circle class="w" cx="794" cy="214" r="6.65"/><circle cx="533" cy="333" r="6.65"/><circle cx="574" cy="415" r="6.65"/><circle cx="628" cy="261" r="6.65"/><circle cx="730" cy="602" r="6.65"/><circle cx="664" cy="677" r="6.65"/><circle cx="528" cy="372" r="6.65"/><circle cx="612" cy="207" r="6.65"/><circle cx="548" cy="360" r="6.65"/><circle cx="627" cy="381" r="6.65"/><circle cx="697" cy="219" r="6.65"/><circle class="w" cx="836" cy="339" r="6.65"/><circle class="w" cx="820" cy="402" r="6.65"/><circle cx="711" cy="363" r="6.65"/><circle class="w" cx="793" cy="624" r="6.65"/><circle cx="677" cy="605" r="6.65"/><circle cx="543" cy="315" r="6.65"/><circle cx="559" cy="326" r="6.65"/><circle class="w" cx="806" cy="350" r="6.65"/><circle cx="709" cy="646" r="6.65"/><circle class="w" cx="750" cy="272" r="6.65"/><circle cx="609" cy="259" r="6.65"/><circle cx="652" cy="218" r="6.65"/><circle cx="606" cy="440" r="6.65"/><circle cx="585" cy="300" r="6.65"/><circle cx="692" cy="274" r="6.65"/><circle class="w" cx="792" cy="445" r="6.65"/><circle class="w" cx="773" cy="406" r="6.65"/><circle cx="670" cy="339" r="6.65"/><circle class="w" cx="762" cy="573" r="6.65"/><circle cx="576" cy="220" r="6.65"/><circle class="w" cx="833" cy="271" r="6.65"/><circle class="w" cx="788" cy="272" r="6.65"/><circle cx="634" cy="226" r="6.65"/><circle class="w" cx="760" cy="341" r="6.65"/><circle cx="629" cy="658" r="6.65"/><circle cx="608" cy="659" r="6.65"/><circle class="w" cx="792" cy="397" r="6.65"/><circle class="w" cx="753" cy="459" r="6.65"/><circle cx="721" cy="687" r="6.65"/><circle class="w" cx="730" cy="235" r="6.65"/><circle cx="604" cy="615" r="6.65"/><circle cx="596" cy="281" r="6.65"/><circle class="w" cx="802" cy="606" r="6.65"/><circle cx="661" cy="202" r="6.65"/><circle cx="641" cy="276" r="6.65"/><circle cx="708" cy="569" r="6.65"/><circle class="w" cx="834" cy="297" r="6.65"/><circle cx="633" cy="420" r="6.65"/><circle cx="605" cy="597" r="6.65"/><circle cx="559" cy="375" r="6.65"/><circle class="w" cx="733" cy="391" r="6.65"/><circle cx="724" cy="349" r="6.65"/><circle cx="561" cy="514" r="6.65"/><circle cx="632" cy="524" r="6.65"/><circle cx="556" cy="297" r="6.65"/><circle class="w" cx="759" cy="231" r="6.65"/><circle cx="744" cy="542" r="6.65"/><circle class="w" cx="837" cy="250" r="6.65"/><circle cx="567" cy="571" r="6.65"/><circle cx="640" cy="484" r="6.65"/><circle class="w" cx="764" cy="375" r="6.65"/><circle cx="611" cy="391" r="6.65"/><circle cx="529" cy="303" r="6.65"/><circle cx="711" cy="291" r="6.65"/><circle cx="610" cy="529" r="6.65"/><circle cx="644" cy="395" r="6.65"/><circle cx="654" cy="376" r="6.65"/><circle class="w" cx="809" cy="227" r="6.65"/><circle class="w" cx="806" cy="549" r="6.65"/><circle cx="664" cy="577" r="6.65"/><circle class="w" cx="845" cy="314" r="6.65"/><circle class="w" cx="801" cy="499" r="6.65"/><circle class="w" cx="793" cy="567" r="6.65"/><circle cx="622" cy="633" r="6.65"/><circle cx="550" cy="232" r="6.65"/><circle cx="542" cy="442" r="6.65"/><circle class="w" cx="805" cy="461" r="6.65"/><circle cx="655" cy="662" r="6.65"/><circle class="w" cx="851" cy="218" r="6.65"/><circle cx="606" cy="687" r="6.65"/><circle cx="642" cy="631" r="6.65"/><circle class="w" cx="764" cy="548" r="6.65"/><circle cx="695" cy="669" r="6.65"/><circle class="w" cx="767" cy="600" r="6.65"/><circle cx="718" cy="667" r="6.65"/><circle class="w" cx="812" cy="247" r="6.65"/><circle cx="701" cy="498" r="6.65"/><circle class="w" cx="775" cy="253" r="6.65"/><circle cx="608" cy="373" r="6.65"/><circle class="w" cx="793" cy="364" r="6.65"/><circle cx="695" cy="420" r="6.65"/><circle cx="592" cy="357" r="6.65"/><circle cx="578" cy="618" r="6.65"/><circle cx="576" cy="638" r="6.65"/><circle class="w" cx="800" cy="333" r="6.65"/><circle class="w" cx="790" cy="540" r="6.65"/><circle cx="570" cy="311" r="6.65"/><circle cx="717" cy="616" r="6.65"/><circle cx="578" cy="335" r="6.65"/><circle cx="582" cy="594" r="6.65"/><circle cx="594" cy="487" r="6.65"/><circle cx="546" cy="269" r="6.65"/><circle cx="639" cy="339" r="6.65"/><circle cx="697" cy="585" r="6.65"/><circle class="w" cx="735" cy="372" r="6.65"/><circle cx="570" cy="534" r="6.65"/><circle cx="543" cy="386" r="6.65"/><circle class="w" cx="782" cy="381" r="6.65"/><circle class="w" cx="819" cy="333" r="6.65"/><circle cx="749" cy="606" r="6.65"/><circle cx="558" cy="422" r="6.65"/><circle cx="672" cy="231" r="6.65"/><circle class="w" cx="788" cy="640" r="6.65"/><circle cx="661" cy="276" r="6.65"/><circle cx="520" cy="237" r="6.65"/><circle cx="652" cy="525" r="6.65"/><circle cx="720" cy="477" r="6.65"/><circle cx="576" cy="238" r="6.65"/><circle cx="576" cy="267" r="6.65"/><circle cx="730" cy="319" r="6.65"/><circle cx="715" cy="439" r="6.65"/><circle class="w" cx="785" cy="320" r="6.65"/><circle cx="708" cy="524" r="6.65"/><circle cx="749" cy="561" r="6.65"/><circle cx="724" cy="635" r="6.65"/><circle class="w" cx="741" cy="344" r="6.65"/><circle class="w" cx="749" cy="206" r="6.65"/><circle cx="605" cy="578" r="6.65"/><circle cx="674" cy="469" r="6.65"/><circle class="w" cx="824" cy="353" r="6.65"/><circle cx="690" cy="296" r="6.65"/><circle class="w" cx="767" cy="288" r="6.65"/><circle class="w" cx="833" cy="372" r="6.65"/><circle cx="640" cy="362" r="6.65"/><circle cx="704" cy="688" r="6.65"/><circle cx="692" cy="234" r="6.65"/><circle cx="651" cy="565" r="6.65"/><circle class="w" cx="796" cy="304" r="6.65"/><circle cx="581" cy="519" r="6.65"/><circle cx="606" cy="339" r="6.65"/><circle class="w" cx="749" cy="360" r="6.65"/><circle class="w" cx="800" cy="587" r="6.65"/><circle class="w" cx="784" cy="347" r="6.65"/><circle cx="620" cy="673" r="6.65"/><circle cx="561" cy="279" r="6.65"/><circle cx="658" cy="320" r="6.65"/><circle cx="678" cy="690" r="6.65"/><circle class="w" cx="720" cy="256" r="6.65"/><circle cx="566" cy="463" r="6.65"/><circle class="w" cx="780" cy="465" r="6.65"/><circle cx="662" cy="248" r="6.65"/><circle cx="667" cy="542" r="6.65"/><circle class="w" cx="809" cy="386" r="6.65"/><circle class="w" cx="714" cy="228" r="6.65"/><circle cx="549" cy="404" r="6.65"/><circle cx="589" cy="692" r="6.65"/><circle class="w" cx="783" cy="675" r="6.65"/><circle class="w" cx="807" cy="266" r="6.65"/><circle class="w" cx="817" cy="294" r="6.65"/><circle cx="569" cy="485" r="6.65"/><circle cx="593" cy="226" r="6.65"/><circle cx="597" cy="673" r="6.65"/><circle cx="677" cy="356" r="6.65"/><circle cx="666" cy="628" r="6.65"/><circle cx="736" cy="576" r="6.65"/><circle class="w" cx="759" cy="477" r="6.65"/><circle cx="622" cy="360" r="6.65"/><circle cx="539" cy="216" r="6.65"/><circle class="w" cx="769" cy="523" r="6.65"/><circle cx="750" cy="639" r="6.65"/><circle cx="673" cy="654" r="6.65"/><circle cx="594" cy="311" r="6.65"/><circle cx="638" cy="580" r="6.65"/><circle cx="622" cy="509" r="6.65"/><circle cx="555" cy="498" r="6.65"/><circle cx="690" cy="327" r="6.65"/><circle cx="677" cy="268" r="6.65"/><circle cx="606" cy="638" r="6.65"/><circle cx="701" cy="375" r="6.65"/><circle cx="764" cy="687" r="6.65"/><circle cx="689" cy="565" r="6.65"/><circle class="w" cx="780" cy="225" r="6.65"/><circle cx="680" cy="249" r="6.65"/><circle cx="690" cy="460" r="6.65"/><circle class="w" cx="785" cy="602" r="6.65"/><circle cx="528" cy="271" r="6.65"/><circle cx="736" cy="412" r="6.65"/><circle cx="619" cy="479" r="6.65"/><circle class="w" cx="758" cy="442" r="6.65"/><circle cx="587" cy="254" r="6.65"/><circle class="w" cx="750" cy="399" r="6.65"/><circle cx="650" cy="598" r="6.65"/><circle class="w" cx="805" cy="433" r="6.65"/><circle cx="677" cy="590" r="6.65"/><circle cx="627" cy="554" r="6.65"/><circle class="w" cx="767" cy="357" r="6.65"/><circle cx="621" cy="218" r="6.65"/><circle cx="651" cy="434" r="6.65"/><circle cx="581" cy="561" r="6.65"/><circle cx="735" cy="494" r="6.65"/><circle class="w" cx="748" cy="327" r="6.65"/><circle cx="578" cy="673" r="6.65"/><circle cx="709" cy="327" r="6.65"/><circle cx="621" cy="441" r="6.65"/><circle cx="759" cy="622" r="6.65"/><circle class="w" cx="815" cy="415" r="6.65"/><circle cx="595" cy="505" r="6.65"/><circle class="w" cx="723" cy="209" r="6.65"/><circle cx="708" cy="464" r="6.65"/><circle class="w" cx="773" cy="207" r="6.65"/><circle class="w" cx="789" cy="485" r="6.65"/><circle class="w" cx="797" cy="285" r="6.65"/><circle class="w" cx="786" cy="505" r="6.65"/><circle cx="748" cy="673" r="6.65"/><circle cx="671" cy="561" r="6.65"/><circle cx="733" cy="300" r="6.65"/><circle cx="540" cy="285" r="6.65"/><circle cx="584" cy="376" r="6.65"/><circle cx="682" cy="512" r="6.65"/><circle cx="639" cy="538" r="6.65"/><circle cx="718" cy="403" r="6.65"/><circle cx="641" cy="676" r="6.65"/><circle cx="539" cy="351" r="6.65"/><circle cx="595" cy="540" r="6.65"/><circle cx="559" cy="447" r="6.65"/><circle cx="644" cy="252" r="6.65"/><circle cx="739" cy="513" r="6.65"/><circle cx="593" cy="439" r="6.65"/><circle cx="737" cy="689" r="6.65"/><circle cx="658" cy="460" r="6.65"/><circle class="w" cx="832" cy="283" r="6.65"/><circle class="w" cx="739" cy="256" r="6.65"/><circle cx="638" cy="470" r="6.65"/><circle class="w" cx="817" cy="215" r="6.65"/><circle cx="722" cy="533" r="6.65"/><circle cx="617" cy="249" r="6.65"/><circle cx="682" cy="492" r="6.65"/><circle cx="659" cy="393" r="6.65"/><circle cx="695" cy="442" r="6.65"/><circle cx="655" cy="230" r="6.65"/><circle cx="775" cy="631" r="6.65"/><circle cx="700" cy="548" r="6.65"/><circle cx="582" cy="408" r="6.65"/><circle cx="696" cy="604" r="6.65"/><circle cx="675" cy="448" r="6.65"/><circle cx="683" cy="218" r="6.65"/><circle cx="672" cy="410" r="6.65"/><circle cx="642" cy="653" r="6.65"/><circle cx="762" cy="655" r="6.65"/><circle cx="571" cy="429" r="6.65"/><circle class="w" cx="762" cy="310" r="6.65"/><circle class="w" cx="826" cy="309" r="6.65"/><circle cx="716" cy="422" r="6.65"/><circle cx="623" cy="648" r="6.65"/><circle cx="652" cy="410" r="6.65"/><circle class="w" cx="783" cy="584" r="6.65"/><circle cx="705" cy="486" r="6.65"/><circle cx="574" cy="360" r="6.65"/><circle cx="559" cy="258" r="6.65"/><circle cx="704" cy="211" r="6.65"/><circle cx="540" cy="255" r="6.65"/><circle class="w" cx="763" cy="271" r="6.65"/><circle class="w" cx="775" cy="415" r="6.65"/><circle cx="526" cy="204" r="6.65"/><circle class="w" cx="807" cy="318" r="6.65"/><circle cx="649" cy="502" r="6.65"/><circle cx="634" cy="608" r="6.65"/><circle cx="712" cy="653" r="6.65"/><circle class="w" cx="782" cy="296" r="6.65"/><circle cx="679" cy="668" r="6.65"/><circle cx="606" cy="209" r="6.65"/><circle cx="599" cy="623" r="6.65"/><circle cx="621" cy="416" r="6.65"/><circle cx="723" cy="453" r="6.65"/><circle class="w" cx="809" cy="361" r="6.65"/><circle cx="623" cy="694" r="6.65"/><circle class="w" cx="787" cy="525" r="6.65"/><circle cx="552" cy="329" r="6.65"/><circle cx="698" cy="396" r="6.65"/><circle cx="571" cy="546" r="6.65"/><circle cx="762" cy="460" r="6.65"/><circle cx="617" cy="599" r="6.65"/><circle cx="584" cy="476" r="6.65"/><circle class="w" cx="763" cy="247" r="6.65"/><circle cx="651" cy="620" r="6.65"/><circle cx="634" cy="404" r="6.65"/><circle cx="735" cy="605" r="6.65"/><circle cx="743" cy="469" r="6.65"/><circle cx="693" cy="652" r="6.65"/><circle cx="622" cy="460" r="6.65"/><circle cx="663" cy="368" r="6.65"/><circle cx="550" cy="311" r="6.65"/><circle cx="583" cy="278" r="6.65"/><circle cx="756" cy="576" r="6.65"/><circle cx="626" cy="383" r="6.65"/><circle cx="765" cy="505" r="6.65"/><circle cx="704" cy="268" r="6.65"/><circle cx="705" cy="576" r="6.65"/><circle cx="586" cy="609" r="6.65"/><circle class="w" cx="786" cy="562" r="6.65"/><circle class="w" cx="777" cy="546" r="6.65"/><circle class="w" cx="829" cy="233" r="6.65"/><circle cx="565" cy="295" r="6.65"/><circle class="w" cx="810" cy="237" r="6.65"/><circle cx="663" cy="335" r="6.65"/><circle cx="592" cy="331" r="6.65"/><circle cx="584" cy="298" r="6.65"/><circle class="w" cx="781" cy="332" r="6.65"/><circle cx="599" cy="390" r="6.65"/><circle cx="668" cy="428" r="6.65"/><circle cx="755" cy="539" r="6.65"/><circle class="w" cx="795" cy="216" r="6.65"/><circle cx="621" cy="330" r="6.65"/><circle class="w" cx="785" cy="265" r="6.65"/><circle cx="737" cy="660" r="6.65"/><circle cx="738" cy="530" r="6.65"/><circle cx="623" cy="573" r="6.65"/><circle cx="637" cy="275" r="6.65"/><circle cx="561" cy="241" r="6.65"/><circle cx="567" cy="340" r="6.65"/><circle cx="724" cy="582" r="6.65"/><circle class="w" cx="757" cy="217" r="6.65"/><circle cx="619" cy="494" r="6.65"/><circle cx="606" cy="263" r="6.65"/><circle cx="678" cy="380" r="6.65"/><circle cx="601" cy="366" r="6.65"/><circle cx="622" cy="626" r="6.65"/><circle cx="662" cy="687" r="6.65"/><circle class="w" cx="798" cy="460" r="6.65"/><circle cx="662" cy="292" r="6.65"/><circle class="w" cx="831" cy="253" r="6.65"/><circle cx="643" cy="314" r="6.65"/><circle cx="654" cy="265" r="6.65"/><circle cx="572" cy="317" r="6.65"/><circle cx="666" cy="495" r="6.65"/><circle cx="727" cy="562" r="6.65"/><circle cx="629" cy="524" r="6.65"/><circle cx="581" cy="392" r="6.65"/><circle cx="734" cy="334" r="6.65"/><circle class="w" cx="791" cy="359" r="6.65"/><circle class="w" cx="729" cy="243" r="6.65"/><circle cx="704" cy="618" r="6.65"/><circle class="w" cx="760" cy="370" r="6.65"/><circle cx="691" cy="312" r="6.65"/><circle cx="713" cy="672" r="6.65"/><circle cx="653" cy="579" r="6.65"/><circle cx="602" cy="282" r="6.65"/><circle class="w" cx="762" cy="334" r="6.65"/><circle cx="592" cy="456" r="6.65"/><circle cx="735" cy="642" r="6.65"/><circle cx="741" cy="624" r="6.65"/><circle cx="593" cy="349" r="6.65"/><circle cx="683" cy="543" r="6.65"/><circle cx="611" cy="347" r="6.65"/><circle cx="679" cy="625" r="6.65"/><circle cx="712" cy="341" r="6.65"/><circle cx="650" cy="347" r="6.65"/><circle cx="656" cy="539" r="6.65"/><circle cx="701" cy="228" r="6.65"/><circle cx="759" cy="607" r="6.65"/><circle class="w" cx="774" cy="488" r="6.65"/><circle cx="739" cy="365" r="6.65"/><circle cx="754" cy="520" r="6.65"/><circle cx="718" cy="607" r="6.65"/><circle cx="593" cy="556" r="6.65"/><circle cx="595" cy="642" r="6.65"/><circle cx="717" cy="634" r="6.65"/><circle class="w" cx="780" cy="451" r="6.65"/><circle cx="640" cy="332" r="6.65"/><circle class="w" cx="757" cy="423" r="6.65"/><circle cx="613" cy="557" r="6.65"/><circle cx="562" cy="397" r="6.65"/><circle class="w" cx="778" cy="313" r="6.65"/><circle cx="662" cy="309" r="6.65"/><circle class="w" cx="781" cy="390" r="6.65"/><circle class="w" cx="762" cy="390" r="6.65"/><circle cx="575" cy="510" r="6.65"/><circle cx="675" cy="476" r="6.65"/><circle class="w" cx="803" cy="257" r="6.65"/><circle cx="606" cy="579" r="6.65"/><circle cx="717" cy="301" r="6.65"/><circle class="w" cx="799" cy="376" r="6.65"/><circle cx="645" cy="217" r="6.65"/><circle cx="543" cy="226" r="6.65"/><circle cx="556" cy="275" r="6.65"/><circle cx="604" cy="316" r="6.65"/><circle cx="648" cy="560" r="6.65"/><circle cx="577" cy="208" r="6.65"/><circle cx="701" cy="685" r="6.65"/><circle cx="746" cy="488" r="6.65"/><circle cx="721" cy="281" r="6.65"/><circle cx="690" cy="292" r="6.65"/><circle cx="688" cy="410" r="6.65"/><circle class="w" cx="740" cy="225" r="6.65"/><circle cx="745" cy="383" r="6.65"/><circle class="w" cx="805" cy="337" r="6.65"/><circle cx="642" cy="366" r="6.65"/><circle cx="602" cy="516" r="6.65"/><circle cx="724" cy="354" r="6.65"/><circle cx="577" cy="443" r="6.65"/><circle cx="684" cy="361" r="6.65"/><circle cx="599" cy="682" r="6.65"/><circle cx="718" cy="690" r="6.65"/><circle class="w" cx="810" cy="398" r="6.65"/><circle cx="747" cy="558" r="6.65"/><circle cx="762" cy="680" r="6.65"/><circle cx="738" cy="422" r="6.65"/><circle cx="622" cy="237" r="6.65"/><circle cx="650" cy="382" r="6.65"/><circle cx="736" cy="269" r="6.65"/><circle class="w" cx="753" cy="259" r="6.65"/><circle cx="720" cy="481" r="6.65"/><circle cx="644" cy="694" r="6.65"/><circle cx="641" cy="236" r="6.65"/><circle cx="681" cy="692" r="6.65"/><circle cx="598" cy="242" r="6.65"/><circle cx="726" cy="316" r="6.65"/><circle class="w" cx="771" cy="230" r="6.65"/><circle cx="607" cy="466" r="6.65"/><circle class="w" cx="802" cy="440" r="6.65"/><circle cx="616" cy="669" r="6.65"/><circle cx="696" cy="667" r="6.65"/><circle cx="702" cy="356" r="6.65"/><circle cx="764" cy="444" r="6.65"/><circle cx="605" cy="223" r="6.65"/><circle cx="678" cy="645" r="6.65"/><circle cx="561" cy="357" r="6.65"/><circle cx="683" cy="596" r="6.65"/><circle cx="570" cy="266" r="6.65"/><circle class="w" cx="750" cy="288" r="6.65"/><circle cx="717" cy="391" r="6.65"/><circle cx="719" cy="259" r="6.65"/><circle cx="583" cy="253" r="6.65"/><circle cx="658" cy="474" r="6.65"/><circle cx="656" cy="643" r="6.65"/><circle cx="568" cy="377" r="6.65"/><circle class="w" cx="781" cy="432" r="6.65"/><circle cx="609" cy="298" r="6.65"/><circle cx="627" cy="479" r="6.65"/><circle cx="729" cy="497" r="6.65"/><circle class="w" cx="814" cy="302" r="6.65"/><circle cx="632" cy="589" r="6.65"/><circle cx="698" cy="375" r="6.65"/><circle cx="653" cy="602" r="6.65"/><circle cx="693" cy="483" r="6.65"/><circle cx="701" cy="462" r="6.65"/><circle class="w" cx="816" cy="206" r="6.65"/><circle cx="742" cy="581" r="6.65"/><circle cx="591" cy="590" r="6.65"/><circle cx="602" cy="608" r="6.65"/><circle cx="589" cy="500" r="6.65"/><circle cx="735" cy="443" r="6.65"/><circle cx="750" cy="697" r="6.65"/><circle cx="631" cy="508" r="6.65"/><circle cx="591" cy="412" r="6.65"/><circle cx="707" cy="320" r="6.65"/><circle cx="769" cy="590" r="6.65"/><circle cx="758" cy="628" r="6.65"/><circle cx="641" cy="628" r="6.65"/><circle cx="667" cy="352" r="6.65"/><circle cx="654" cy="670" r="6.65"/><circle cx="716" cy="512" r="6.65"/><circle cx="691" cy="253" r="6.65"/><circle cx="601" cy="542" r="6.65"/><circle cx="699" cy="537" r="6.65"/><circle cx="710" cy="559" r="6.65"/><circle cx="626" cy="255" r="6.65"/><circle cx="636" cy="662" r="6.65"/><circle cx="570" cy="474" r="6.65"/><circle cx="721" cy="464" r="6.65"/><circle cx="588" cy="525" r="6.65"/><circle cx="690" cy="448" r="6.65"/><circle cx="748" cy="457" r="6.65"/><circle cx="693" cy="333" r="6.65"/><circle cx="628" cy="316" r="6.65"/><circle cx="609" cy="420" r="6.65"/><circle cx="693" cy="633" r="6.65"/><circle class="w" cx="767" cy="282" r="6.65"/><circle cx="754" cy="657" r="6.65"/><circle cx="745" cy="319" r="6.65"/><circle class="w" cx="781" cy="244" r="6.65"/><circle cx="606" cy="485" r="6.65"/><circle class="w" cx="791" cy="492" r="6.65"/><circle cx="630" cy="644" r="6.65"/><circle cx="646" cy="287" r="6.65"/><circle cx="703" cy="600" r="6.65"/><circle cx="615" cy="450" r="6.65"/><circle class="w" cx="808" cy="274" r="6.65"/><circle cx="740" cy="399" r="6.65"/><circle cx="716" cy="209" r="6.65"/><circle cx="638" cy="546" r="6.65"/><circle cx="663" cy="616" r="6.65"/><circle cx="608" cy="652" r="6.65"/><circle cx="559" cy="311" r="6.65"/><circle cx="587" cy="312" r="6.65"/><circle cx="745" cy="507" r="6.65"/><circle cx="618" cy="275" r="6.65"/><circle class="w" cx="784" cy="516" r="6.65"/><circle cx="573" cy="421" r="6.65"/><circle cx="620" cy="543" r="6.65"/><circle cx="656" cy="327" r="6.65"/><circle cx="635" cy="349" r="6.65"/><circle cx="708" cy="245" r="6.65"/><circle cx="609" cy="631" r="6.65"/><circle cx="678" cy="319" r="6.65"/><circle cx="645" cy="528" r="6.65"/><circle cx="693" cy="426" r="6.65"/><circle cx="741" cy="609" r="6.65"/><circle cx="717" cy="654" r="6.65"/><circle cx="557" cy="215" r="6.65"/><circle cx="643" cy="448" r="6.65"/><circle class="w" cx="772" cy="409" r="6.65"/><circle cx="738" cy="303" r="6.65"/><circle cx="703" cy="406" r="6.65"/><circle cx="649" cy="254" r="6.65"/><circle class="w" cx="794" cy="404" r="6.65"/><circle cx="726" cy="620" r="6.65"/><circle class="w" cx="795" cy="293" r="6.65"/><circle cx="779" cy="473" r="6.65"/><circle cx="614" cy="593" r="6.65"/><circle cx="631" cy="221" r="6.65"/><circle cx="752" cy="343" r="6.65"/><circle cx="627" cy="691" r="6.65"/><circle cx="732" cy="552" r="6.65"/><circle cx="641" cy="427" r="6.65"/><circle cx="749" cy="435" r="6.65"/><circle cx="591" cy="276" r="6.65"/><circle cx="706" cy="275" r="6.65"/><circle cx="646" cy="405" r="6.65"/><circle class="w" cx="798" cy="237" r="6.65"/><circle cx="664" cy="527" r="6.65"/><circle cx="671" cy="510" r="6.65"/><circle cx="613" cy="504" r="6.65"/><circle cx="573" cy="228" r="6.65"/><circle cx="691" cy="616" r="6.65"/><circle cx="739" cy="682" r="6.65"/><circle cx="765" cy="510" r="6.65"/><circle class="w" cx="756" cy="237" r="6.65"/><circle cx="635" cy="605" r="6.65"/><circle cx="662" cy="275" r="6.65"/><circle class="w" cx="790" cy="275" r="6.65"/><circle cx="567" cy="246" r="6.65"/><circle cx="660" cy="213" r="6.65"/><circle cx="603" cy="401" r="6.65"/><circle cx="758" cy="533" r="6.65"/><circle cx="671" cy="255" r="6.65"/><circle cx="603" cy="374" r="6.65"/><circle class="w" cx="793" cy="348" r="6.65"/><circle cx="571" cy="295" r="6.65"/><circle cx="703" cy="297" r="6.65"/><circle cx="760" cy="488" r="6.65"/><circle cx="671" cy="678" r="6.65"/><circle cx="665" cy="380" r="6.65"/><circle cx="694" cy="650" r="6.65"/><circle class="w" cx="748" cy="213" r="6.65"/><circle class="w" cx="763" cy="361" r="6.65"/><circle class="w" cx="813" cy="222" r="6.65"/><circle cx="582" cy="463" r="6.65"/><circle cx="720" cy="417" r="6.65"/><circle cx="752" cy="595" r="6.65"/><circle cx="711" cy="225" r="6.65"/><circle cx="671" cy="406" r="6.65"/><circle cx="653" cy="497" r="6.65"/><circle class="w" cx="783" cy="331" r="6.65"/><circle cx="618" cy="332" r="6.65"/><circle class="w" cx="776" cy="261" r="6.65"/><circle cx="639" cy="467" r="6.65"/><circle cx="636" cy="301" r="6.65"/><circle cx="732" cy="533" r="6.65"/><circle cx="595" cy="357" r="6.65"/><circle cx="578" cy="400" r="6.65"/><circle cx="732" cy="342" r="6.65"/><circle cx="733" cy="281" r="6.65"/><circle cx="673" cy="337" r="6.65"/><circle cx="578" cy="335" r="6.65"/><circle cx="641" cy="679" r="6.65"/><circle cx="671" cy="489" r="6.65"/><circle cx="623" cy="409" r="6.65"/><circle cx="736" cy="655" r="6.65"/><circle cx="652" cy="588" r="6.65"/><circle cx="743" cy="635" r="6.65"/><circle class="w" cx="770" cy="316" r="6.65"/><circle cx="663" cy="237" r="6.65"/><circle cx="720" cy="440" r="6.65"/><circle class="w" cx="782" cy="225" r="6.65"/><circle cx="712" cy="529" r="6.65"/><circle cx="599" cy="325" r="6.65"/><circle cx="680" cy="286" r="6.65"/><circle cx="757" cy="300" r="6.65"/><circle cx="592" cy="482" r="6.65"/><circle cx="732" cy="245" r="6.65"/><circle cx="687" cy="552" r="6.65"/><circle class="w" cx="784" cy="364" r="6.65"/><circle cx="718" cy="582" r="6.65"/><circle cx="756" cy="385" r="6.65"/><circle cx="655" cy="458" r="6.65"/><circle cx="705" cy="477" r="6.65"/><circle cx="683" cy="238" r="6.65"/><circle cx="763" cy="425" r="6.65"/><circle cx="685" cy="304" r="6.65"/><circle cx="709" cy="683" r="6.65"/><circle cx="716" cy="359" r="6.65"/><circle cx="649" cy="654" r="6.65"/><circle cx="734" cy="458" r="6.65"/><circle cx="625" cy="521" r="6.65"/><circle class="w" cx="800" cy="313" r="6.65"/><circle cx="588" cy="293" r="6.65"/><circle cx="714" cy="334" r="6.65"/><circle cx="724" cy="378" r="6.65"/><circle class="w" cx="784" cy="422" r="6.65"/><circle class="w" cx="780" cy="385" r="6.65"/><circle class="w" cx="758" cy="255" r="6.65"/><circle cx="655" cy="304" r="6.65"/><circle cx="607" cy="527" r="6.65"/><circle cx="578" cy="365" r="6.65"/><circle cx="598" cy="448" r="6.65"/><circle cx="661" cy="632" r="6.65"/><circle cx="777" cy="495" r="6.65"/><circle cx="690" cy="270" r="6.65"/><circle cx="585" cy="432" r="6.65"/><circle cx="652" cy="480" r="6.65"/><circle cx="773" cy="442" r="6.65"/><circle cx="601" cy="214" r="6.65"/><circle cx="619" cy="676" r="6.65"/><circle cx="749" cy="412" r="6.65"/><circle cx="621" cy="487" r="6.65"/><circle cx="616" cy="610" r="6.65"/><circle cx="635" cy="565" r="6.65"/><circle cx="690" cy="360" r="6.65"/><circle cx="685" cy="501" r="6.65"/><circle cx="563" cy="272" r="6.65"/><circle cx="722" cy="296" r="6.65"/><circle cx="761" cy="460" r="6.65"/><circle cx="702" cy="441" r="6.65"/><circle cx="629" cy="361" r="6.65"/><circle cx="716" cy="605" r="6.65"/><circle cx="696" cy="321" r="6.65"/><circle cx="575" cy="382" r="6.65"/><circle cx="620" cy="467" r="6.65"/><circle cx="618" cy="382" r="6.65"/><circle cx="716" cy="547" r="6.65"/><circle cx="720" cy="397" r="6.65"/><circle cx="660" cy="569" r="6.65"/><circle cx="645" cy="238" r="6.65"/><circle cx="649" cy="694" r="6.65"/><circle cx="696" cy="669" r="6.65"/><circle cx="668" cy="470" r="6.65"/><circle cx="729" cy="215" r="6.65"/><circle cx="605" cy="301" r="6.65"/><circle cx="664" cy="435" r="6.65"/><circle cx="680" cy="635" r="6.65"/><circle cx="577" cy="257" r="6.65"/><circle cx="631" cy="280" r="6.65"/><circle cx="601" cy="574" r="6.65"/><circle cx="736" cy="496" r="6.65"/><circle cx="653" cy="393" r="6.65"/><circle cx="762" cy="273" r="6.65"/><circle cx="635" cy="257" r="6.65"/><circle cx="717" cy="316" r="6.65"/><circle cx="700" cy="253" r="6.65"/><circle cx="738" cy="440" r="6.65"/><circle cx="752" cy="570" r="6.65"/><circle cx="665" cy="663" r="6.65"/><circle cx="638" cy="319" r="6.65"/><circle cx="597" cy="266" r="6.65"/><circle cx="676" cy="219" r="6.65"/><circle cx="712" cy="461" r="6.65"/><circle cx="708" cy="653" r="6.65"/><circle cx="612" cy="424" r="6.65"/><circle cx="735" cy="423" r="6.65"/><circle cx="713" cy="565" r="6.65"/><circle cx="614" cy="249" r="6.65"/><circle cx="668" cy="317" r="6.65"/><circle cx="719" cy="506" r="6.65"/><circle cx="618" cy="218" r="6.65"/><circle cx="715" cy="265" r="6.65"/><circle cx="643" cy="537" r="6.65"/><circle cx="678" cy="566" r="6.65"/><circle cx="616" cy="450" r="6.65"/><circle cx="627" cy="646" r="6.65"/><circle cx="645" cy="220" r="6.65"/><circle cx="746" cy="333" r="6.65"/><circle cx="637" cy="377" r="6.65"/><circle cx="686" cy="407" r="6.65"/><circle cx="686" cy="519" r="6.65"/><circle cx="649" cy="516" r="6.65"/><circle cx="665" cy="541" r="6.65"/><circle cx="600" cy="340" r="6.65"/><circle cx="727" cy="630" r="6.65"/><circle cx="661" cy="286" r="6.65"/><circle cx="651" cy="421" r="6.65"/><circle cx="567" cy="219" r="6.65"/><circle cx="671" cy="607" r="6.65"/><circle cx="693" cy="342" r="6.65"/><circle cx="745" cy="513" r="6.65"/><circle cx="627" cy="586" r="6.65"/><circle cx="672" cy="352" r="6.65"/><circle cx="704" cy="424" r="6.65"/><circle cx="679" cy="423" r="6.65"/><circle cx="763" cy="521" r="6.65"/><circle class="w" cx="768" cy="216" r="6.65"/><circle cx="739" cy="616" r="6.65"/><circle cx="626" cy="547" r="6.65"/><circle cx="741" cy="295" r="6.65"/><circle cx="680" cy="450" r="6.65"/><circle class="w" cx="775" cy="302" r="6.65"/><circle class="w" cx="800" cy="225" r="6.65"/><circle cx="745" cy="533" r="6.65"/><circle cx="632" cy="505" r="6.65"/><circle cx="585" cy="323" r="6.65"/><circle cx="628" cy="237" r="6.65"/><circle cx="700" cy="228" r="6.65"/><circle cx="650" cy="554" r="6.65"/><circle cx="698" cy="606" r="6.65"/><circle cx="611" cy="504" r="6.65"/><circle cx="734" cy="561" r="6.65"/><circle cx="698" cy="635" r="6.65"/><circle cx="707" cy="370" r="6.65"/><circle cx="705" cy="586" r="6.65"/><circle cx="573" cy="285" r="6.65"/><circle cx="734" cy="673" r="6.65"/><circle cx="656" cy="338" r="6.65"/><circle cx="704" cy="404" r="6.65"/><circle cx="613" cy="319" r="6.65"/><circle cx="641" cy="453" r="6.65"/><circle cx="700" cy="551" r="6.65"/><circle cx="620" cy="345" r="6.65"/><circle cx="754" cy="498" r="6.65"/><circle cx="607" cy="233" r="6.65"/><circle cx="598" cy="408" r="6.65"/><circle cx="592" cy="382" r="6.65"/><circle cx="663" cy="503" r="6.65"/><circle cx="669" cy="247" r="6.65"/><circle cx="678" cy="652" r="6.65"/><circle cx="701" cy="306" r="6.65"/><circle class="w" cx="776" cy="244" r="6.65"/><circle cx="664" cy="369" r="6.65"/><circle cx="686" cy="470" r="6.65"/><circle cx="753" cy="317" r="6.65"/><circle cx="632" cy="692" r="6.65"/><circle cx="652" cy="676" r="6.65"/><circle cx="632" cy="667" r="6.65"/><circle cx="686" cy="620" r="6.65"/><circle cx="702" cy="499" r="6.65"/><circle cx="644" cy="606" r="6.65"/><circle cx="715" cy="670" r="6.65"/><circle cx="687" cy="581" r="6.65"/><circle cx="734" cy="405" r="6.65"/><circle cx="759" cy="351" r="6.65"/><circle class="w" cx="795" cy="243" r="6.65"/><circle cx="615" cy="368" r="6.65"/><circle cx="755" cy="242" r="6.65"/><circle cx="732" cy="647" r="6.65"/><circle cx="667" cy="523" r="6.65"/><circle cx="596" cy="248" r="6.65"/><circle cx="647" cy="633" r="6.65"/><circle cx="636" cy="485" r="6.65"/><circle class="w" cx="775" cy="266" r="6.65"/><circle cx="636" cy="409" r="6.65"/><circle cx="636" cy="432" r="6.65"/><circle cx="628" cy="619" r="6.65"/><circle cx="687" cy="282" r="6.65"/><circle cx="765" cy="411" r="6.65"/><circle cx="608" cy="547" r="6.65"/><circle class="w" cx="780" cy="331" r="6.65"/><circle cx="731" cy="271" r="6.65"/><circle cx="642" cy="299" r="6.65"/><circle cx="611" cy="275" r="6.65"/><circle cx="769" cy="430" r="6.65"/><circle cx="755" cy="445" r="6.65"/><circle cx="687" cy="389" r="6.65"/><circle cx="647" cy="363" r="6.65"/><circle cx="648" cy="572" r="6.65"/><circle cx="607" cy="487" r="6.65"/><circle cx="687" cy="260" r="6.65"/><circle cx="667" cy="698" r="6.65"/><circle cx="769" cy="384" r="6.65"/><circle cx="666" cy="265" r="6.65"/><circle cx="711" cy="347" r="6.65"/><circle cx="672" cy="591" r="6.65"/><circle cx="667" cy="398" r="6.65"/><circle cx="728" cy="464" r="6.65"/><circle cx="716" cy="445" r="6.65"/><circle cx="617" cy="566" r="6.65"/><circle cx="595" cy="364" r="6.65"/><circle cx="729" cy="523" r="6.65"/><circle cx="757" cy="288" r="6.65"/><circle class="w" cx="783" cy="283" r="6.65"/><circle cx="571" cy="238" r="6.65"/><circle cx="738" cy="387" r="6.65"/><circle cx="684" cy="678" r="6.65"/><circle cx="647" cy="469" r="6.65"/><circle cx="687" cy="700" r="6.65"/><circle cx="750" cy="465" r="6.65"/><circle cx="667" cy="633" r="6.65"/><circle cx="643" cy="651" r="6.65"/><circle cx="691" cy="242" r="6.65"/><circle cx="694" cy="659" r="6.65"/><circle cx="719" cy="687" r="6.65"/><circle cx="731" cy="483" r="6.65"/><circle cx="600" cy="219" r="6.65"/><circle cx="662" cy="302" r="6.65"/><circle cx="635" cy="210" r="6.65"/><circle cx="731" cy="584" r="6.65"/><circle cx="663" cy="212" r="6.65"/><circle cx="690" cy="215" r="6.65"/><circle cx="605" cy="455" r="6.65"/><circle cx="706" cy="387" r="6.65"/><circle cx="594" cy="310" r="6.65"/><circle cx="700" cy="568" r="6.65"/><circle cx="623" cy="288" r="6.65"/><circle cx="640" cy="346" r="6.65"/><circle cx="617" cy="605" r="6.65"/><circle cx="736" cy="310" r="6.65"/><circle cx="623" cy="261" r="6.65"/><circle cx="759" cy="258" r="6.65"/><circle cx="693" cy="359" r="6.65"/><circle cx="656" cy="323" r="6.65"/><circle cx="722" cy="228" r="6.65"/><circle cx="611" cy="383" r="6.65"/><circle cx="661" cy="444" r="6.65"/><circle cx="711" cy="484" r="6.65"/><circle cx="713" cy="600" r="6.65"/><circle cx="602" cy="329" r="6.65"/><circle cx="729" cy="350" r="6.65"/><circle cx="728" cy="545" r="6.65"/><circle cx="586" cy="294" r="6.65"/><circle cx="684" cy="532" r="6.65"/><circle cx="670" cy="488" r="6.65"/><circle cx="682" cy="551" r="6.65"/><circle cx="664" cy="466" r="6.65"/><circle cx="735" cy="602" r="6.65"/><circle cx="585" cy="276" r="6.65"/><circle cx="710" cy="280" r="6.65"/><circle cx="718" cy="652" r="6.65"/><circle cx="715" cy="634" r="6.65"/><circle cx="734" cy="446" r="6.65"/><circle cx="637" cy="552" r="6.65"/><circle cx="692" cy="432" r="6.65"/><circle cx="603" cy="427" r="6.65"/><circle cx="702" cy="537" r="6.65"/><circle cx="763" cy="304" r="6.65"/><circle cx="647" cy="240" r="6.65"/><circle cx="747" cy="414" r="6.65"/><circle cx="763" cy="227" r="6.65"/><circle cx="643" cy="388" r="6.65"/><circle cx="675" cy="378" r="6.65"/><circle cx="665" cy="421" r="6.65"/><circle cx="677" cy="510" r="6.65"/><circle cx="653" cy="593" r="6.65"/><circle cx="711" cy="555" r="6.65"/><circle cx="620" cy="535" r="6.65"/><circle cx="701" cy="686" r="6.65"/><circle cx="768" cy="321" r="6.65"/><circle cx="744" cy="341" r="6.65"/><circle cx="762" cy="368" r="6.65"/><circle cx="671" cy="566" r="6.65"/><circle cx="720" cy="407" r="6.65"/><circle cx="744" cy="496" r="6.65"/><circle cx="628" cy="359" r="6.65"/><circle class="w" cx="789" cy="213" r="6.65"/><circle cx="699" cy="624" r="6.65"/><circle cx="730" cy="423" r="6.65"/><circle cx="623" cy="480" r="6.65"/><circle cx="649" cy="689" r="6.65"/><circle cx="626" cy="450" r="6.65"/><circle cx="699" cy="414" r="6.65"/><circle cx="686" cy="493" r="6.65"/><circle cx="609" cy="401" r="6.65"/><circle cx="605" cy="350" r="6.65"/><circle cx="711" cy="299" r="6.65"/><circle cx="619" cy="239" r="6.65"/><circle cx="700" cy="333" r="6.65"/><circle cx="746" cy="515" r="6.65"/><circle cx="670" cy="615" r="6.65"/><circle cx="578" cy="222" r="6.65"/><circle cx="657" cy="553" r="6.65"/><circle cx="744" cy="241" r="6.65"/><circle cx="678" cy="351" r="6.65"/><circle cx="740" cy="369" r="6.65"/><circle cx="584" cy="245" r="6.65"/><circle cx="730" cy="567" r="6.65"/><circle cx="633" cy="227" r="6.65"/><circle cx="654" cy="288" r="6.65"/><circle cx="633" cy="638" r="6.65"/><circle cx="647" cy="517" r="6.65"/><circle cx="622" cy="304" r="6.65"/><circle cx="643" cy="669" r="6.65"/><circle cx="662" cy="251" r="6.65"/><circle cx="723" cy="388" r="6.65"/><circle cx="660" cy="652" r="6.65"/><circle cx="622" cy="427" r="6.65"/><circle cx="596" cy="260" r="6.65"/><circle cx="616" cy="505" r="6.65"/><circle cx="686" cy="463" r="6.65"/><circle cx="628" cy="586" r="6.65"/><circle cx="658" cy="369" r="6.65"/><circle cx="625" cy="337" r="6.65"/><circle cx="710" cy="430" r="6.65"/><circle cx="738" cy="281" r="6.65"/><circle cx="649" cy="609" r="6.65"/><circle cx="694" cy="377" r="6.65"/><circle cx="714" cy="467" r="6.65"/><circle cx="648" cy="309" r="6.65"/><circle cx="653" cy="482" r="6.65"/><circle cx="711" cy="363" r="6.65"/><circle cx="713" cy="319" r="6.65"/><circle cx="696" cy="594" r="6.65"/><circle cx="686" cy="275" r="6.65"/><circle cx="773" cy="289" r="6.65"/><circle cx="710" cy="247" r="6.65"/><circle cx="609" cy="367" r="6.65"/><circle cx="711" cy="669" r="6.65"/><circle cx="750" cy="390" r="6.65"/><circle cx="632" cy="403" r="6.65"/><circle cx="654" cy="402" r="6.65"/><circle cx="666" cy="529" r="6.65"/><circle cx="654" cy="500" r="6.65"/><circle cx="740" cy="462" r="6.65"/><circle cx="603" cy="301" r="6.65"/><circle cx="696" cy="312" r="6.65"/><circle cx="637" cy="279" r="6.65"/><circle cx="651" cy="221" r="6.65"/><circle cx="643" cy="577" r="6.65"/><circle cx="717" cy="344" r="6.65"/><circle cx="680" cy="691" r="6.65"/><circle cx="670" cy="586" r="6.65"/><circle cx="703" cy="649" r="6.65"/><circle cx="632" cy="620" r="6.65"/><circle cx="712" cy="498" r="6.65"/><circle cx="643" cy="329" r="6.65"/><circle cx="686" cy="257" r="6.65"/><circle cx="733" cy="256" r="6.65"/><circle cx="628" cy="564" r="6.65"/><circle cx="753" cy="328" r="6.65"/><circle cx="639" cy="469" r="6.65"/><circle cx="696" cy="507" r="6.65"/><circle cx="639" cy="432" r="6.65"/><circle cx="595" cy="230" r="6.65"/><circle cx="756" cy="280" r="6.65"/><circle cx="664" cy="339" r="6.65"/><circle cx="674" cy="639" r="6.65"/><circle cx="719" cy="266" r="6.65"/><circle cx="768" cy="265" r="6.65"/><circle cx="607" cy="282" r="6.65"/><circle cx="693" cy="575" r="6.65"/><circle cx="683" cy="334" r="6.65"/><circle cx="678" cy="437" r="6.65"/><circle cx="749" cy="306" r="6.65"/><circle cx="671" cy="284" r="6.65"/><circle cx="661" cy="268" r="6.65"/><circle cx="620" cy="270" r="6.65"/><circle cx="705" cy="610" r="6.65"/><circle cx="729" cy="518" r="6.65"/><circle cx="689" cy="221" r="6.65"/><circle cx="613" cy="324" r="6.65"/><circle cx="747" cy="445" r="6.65"/><circle cx="733" cy="315" r="6.65"/><circle cx="679" cy="403" r="6.65"/><circle cx="765" cy="243" r="6.65"/><circle cx="740" cy="226" r="6.65"/><circle cx="697" cy="450" r="6.65"/><circle cx="666" cy="668" r="6.65"/><circle cx="637" cy="489" r="6.65"/><circle cx="691" cy="547" r="6.65"/><circle cx="685" cy="675" r="6.65"/><circle cx="639" cy="368" r="6.65"/><circle cx="724" cy="441" r="6.65"/><circle cx="652" cy="449" r="6.65"/><circle cx="730" cy="491" r="6.65"/><circle cx="726" cy="238" r="6.65"/><circle cx="653" cy="422" r="6.65"/><circle cx="691" cy="357" r="6.65"/><circle cx="673" cy="552" r="6.65"/><circle cx="680" cy="655" r="6.65"/><circle cx="711" cy="220" r="6.65"/><circle cx="642" cy="261" r="6.65"/><circle cx="626" cy="249" r="6.65"/><circle cx="687" cy="522" r="6.65"/><circle cx="636" cy="509" r="6.65"/><circle cx="633" cy="526" r="6.65"/><circle cx="713" cy="416" r="6.65"/><circle cx="674" cy="382" r="6.65"/><circle cx="613" cy="409" r="6.65"/><circle cx="638" cy="295" r="6.65"/><circle cx="702" cy="262" r="6.65"/><circle cx="662" cy="318" r="6.65"/><circle cx="736" cy="381" r="6.65"/><circle cx="675" cy="245" r="6.65"/><circle cx="758" cy="226" r="6.65"/><circle cx="625" cy="380" r="6.65"/><circle cx="614" cy="343" r="6.65"/><circle cx="751" cy="367" r="6.65"/><circle cx="710" cy="553" r="6.65"/><circle cx="644" cy="390" r="6.65"/><circle cx="676" cy="456" r="6.65"/><circle cx="687" cy="607" r="6.65"/><circle cx="622" cy="361" r="6.65"/><circle cx="652" cy="594" r="6.65"/><circle cx="692" cy="390" r="6.65"/><circle cx="661" cy="572" r="6.65"/><circle cx="744" cy="291" r="6.65"/><circle cx="668" cy="356" r="6.65"/><circle cx="711" cy="572" r="6.65"/><circle cx="612" cy="229" r="6.65"/><circle cx="709" cy="397" r="6.65"/><circle cx="732" cy="424" r="6.65"/><circle cx="727" cy="298" r="6.65"/><circle cx="726" cy="332" r="6.65"/><circle cx="605" cy="248" r="6.65"/><circle cx="749" cy="254" r="6.65"/><circle cx="660" cy="610" r="6.65"/><circle cx="727" cy="280" r="6.65"/><circle cx="713" cy="595" r="6.65"/><circle cx="742" cy="340" r="6.65"/><circle cx="708" cy="436" r="6.65"/><circle cx="648" cy="559" r="6.65"/><circle cx="684" cy="317" r="6.65"/><circle cx="706" cy="369" r="6.65"/><circle cx="729" cy="406" r="6.65"/><circle cx="635" cy="544" r="6.65"/><circle cx="658" cy="252" r="6.65"/><circle cx="667" cy="507" r="6.65"/><circle cx="661" cy="467" r="6.65"/><circle cx="717" cy="253" r="6.65"/><circle cx="686" cy="491" r="6.65"/><circle cx="633" cy="339" r="6.65"/><circle cx="650" cy="529" r="6.65"/><circle cx="672" cy="535" r="6.65"/><circle cx="706" cy="348" r="6.65"/><circle cx="650" cy="350" r="6.65"/><circle cx="689" cy="424" r="6.65"/><circle cx="716" cy="314" r="6.65"/><circle cx="656" cy="283" r="6.65"/><circle cx="630" cy="224" r="6.65"/><circle cx="728" cy="364" r="6.65"/><circle cx="716" cy="514" r="6.65"/><circle cx="697" cy="586" r="6.65"/><circle cx="627" cy="310" r="6.65"/><circle cx="631" cy="413" r="6.65"/><circle cx="617" cy="290" r="6.65"/><circle cx="678" cy="582" r="6.65"/><circle cx="675" cy="623" r="6.65"/><circle cx="691" cy="277" r="6.65"/><circle cx="749" cy="271" r="6.65"/><circle cx="687" cy="296" r="6.65"/><circle cx="674" cy="331" r="6.65"/><circle cx="720" cy="468" r="6.65"/><circle cx="667" cy="225" r="6.65"/><circle cx="700" cy="639" r="6.65"/><circle cx="660" cy="697" r="6.65"/><circle cx="719" cy="383" r="6.65"/><circle cx="655" cy="409" r="6.65"/><circle cx="604" cy="272" r="6.65"/><circle cx="665" cy="442" r="6.65"/><circle cx="712" cy="275" r="6.65"/><circle cx="642" cy="429" r="6.65"/><circle cx="626" cy="263" r="6.65"/><circle cx="689" cy="697" r="6.65"/><circle cx="704" cy="620" r="6.65"/><circle cx="697" cy="328" r="6.65"/><circle cx="649" cy="330" r="6.65"/><circle cx="650" cy="234" r="6.65"/><circle cx="688" cy="372" r="6.65"/><circle cx="659" cy="490" r="6.65"/><circle cx="706" cy="492" r="6.65"/><circle cx="642" cy="457" r="6.65"/><circle cx="686" cy="346" r="6.65"/><circle cx="662" cy="656" r="6.65"/><circle cx="688" cy="542" r="6.65"/><circle cx="668" cy="395" r="6.65"/><circle cx="695" cy="221" r="6.65"/><circle cx="648" cy="511" r="6.65"/><circle cx="693" cy="446" r="6.65"/><circle cx="685" cy="678" r="6.65"/><circle cx="667" cy="302" r="6.65"/><circle cx="697" cy="516" r="6.65"/><circle cx="689" cy="465" r="6.65"/><circle cx="680" cy="642" r="6.65"/><circle cx="704" cy="532" r="6.65"/><circle cx="733" cy="261" r="6.65"/><circle cx="701" cy="240" r="6.65"/><circle cx="689" cy="567" r="6.65"/><circle cx="641" cy="273" r="6.65"/><circle cx="682" cy="263" r="6.65"/><circle cx="694" cy="659" r="6.65"/><circle cx="658" cy="543" r="6.65"/><circle cx="666" cy="674" r="6.65"/><circle cx="616" cy="325" r="6.65"/><circle cx="721" cy="236" r="6.65"/><circle cx="686" cy="400" r="6.65"/><circle cx="681" cy="237" r="6.65"/><circle cx="715" cy="420" r="6.65"/><circle cx="669" cy="563" r="6.65"/><circle cx="628" cy="368" r="6.65"/><circle cx="715" cy="296" r="6.65"/><circle cx="739" cy="230" r="6.65"/><circle cx="663" cy="522" r="6.65"/><circle cx="673" cy="366" r="6.65"/><circle cx="712" cy="218" r="6.65"/><circle cx="672" cy="417" r="6.65"/><circle cx="661" cy="580" r="6.65"/><circle cx="646" cy="313" r="6.65"/><circle cx="679" cy="610" r="6.65"/><circle cx="645" cy="482" r="6.65"/><circle cx="662" cy="602" r="6.65"/><circle cx="659" cy="629" r="6.65"/><circle cx="649" cy="443" r="6.65"/><circle cx="731" cy="308" r="6.65"/><circle cx="672" cy="457" r="6.65"/><circle cx="637" cy="394" r="6.65"/><circle cx="667" cy="251" r="6.65"/><circle cx="649" cy="257" r="6.65"/><circle cx="659" cy="340" r="6.65"/><circle cx="640" cy="352" r="6.65"/><circle cx="726" cy="276" r="6.65"/><circle cx="708" cy="319" r="6.65"/><circle cx="654" cy="294" r="6.65"/><circle cx="701" cy="365" r="6.65"/><circle cx="621" cy="222" r="6.65"/><circle cx="703" cy="433" r="6.65"/><circle cx="702" cy="405" r="6.65"/><circle cx="680" cy="218" r="6.65"/><circle cx="625" cy="302" r="6.65"/><circle cx="642" cy="412" r="6.65"/><circle cx="658" cy="426" r="6.65"/><circle cx="645" cy="370" r="6.65"/><circle cx="719" cy="361" r="6.65"/><circle cx="639" cy="241" r="6.65"/><circle cx="619" cy="242" r="6.65"/><circle cx="655" cy="393" r="6.65"/><circle cx="677" cy="433" r="6.65"/><circle cx="678" cy="662" r="6.65"/><circle cx="667" cy="274" r="6.65"/><circle cx="725" cy="328" r="6.65"/><circle cx="694" cy="480" r="6.65"/><circle cx="675" cy="690" r="6.65"/><circle cx="704" cy="463" r="6.65"/><circle cx="671" cy="485" r="6.65"/><circle cx="688" cy="301" r="6.65"/><circle cx="677" cy="337" r="6.65"/><circle cx="654" cy="496" r="6.65"/><circle cx="677" cy="593" r="6.65"/><circle cx="628" cy="259" r="6.65"/><circle cx="659" cy="358" r="6.65"/><circle cx="689" cy="498" r="6.65"/><circle cx="693" cy="388" r="6.65"/><circle cx="688" cy="521" r="6.65"/><circle cx="705" cy="286" r="6.65"/><circle cx="668" cy="230" r="6.65"/><circle cx="675" cy="575" r="6.65"/><circle cx="684" cy="320" r="6.65"/><circle cx="663" cy="377" r="6.65"/><circle cx="704" cy="248" r="6.65"/><circle cx="686" cy="282" r="6.65"/><circle cx="668" cy="310" r="6.65"/><circle cx="649" cy="330" r="6.65"/><circle cx="674" cy="394" r="6.65"/><circle cx="692" cy="542" r="6.65"/><circle cx="694" cy="232" r="6.65"/><circle cx="724" cy="290" r="6.65"/><circle cx="728" cy="240" r="6.65"/><circle cx="670" cy="469" r="6.65"/><circle cx="634" cy="286" r="6.65"/><circle cx="697" cy="348" r="6.65"/><circle cx="722" cy="220" r="6.65"/><circle cx="649" cy="311" r="6.65"/><circle cx="699" cy="330" r="6.65"/><circle cx="704" cy="304" r="6.65"/><circle cx="676" cy="260" r="6.65"/><circle cx="674" cy="541" r="6.65"/><circle cx="685" cy="408" r="6.65"/><circle cx="682" cy="452" r="6.65"/><circle cx="696" cy="440" r="6.65"/><circle cx="678" cy="352" r="6.65"/><circle cx="650" cy="267" r="6.65"/><circle cx="663" cy="452" r="6.65"/><circle cx="674" cy="295" r="6.65"/><circle cx="665" cy="434" r="6.65"/><circle cx="674" cy="499" r="6.65"/><circle cx="713" cy="270" r="6.65"/><circle cx="684" cy="378" r="6.65"/><circle cx="637" cy="251" r="6.65"/><circle cx="654" cy="366" r="6.65"/><circle cx="657" cy="395" r="6.65"/><circle cx="662" cy="416" r="6.65"/><circle cx="632" cy="233" r="6.65"/><circle cx="679" cy="524" r="6.65"/><circle cx="662" cy="322" r="6.65"/><circle cx="679" cy="330" r="6.65"/><circle cx="707" cy="220" r="6.65"/><circle cx="652" cy="224" r="6.65"/><circle cx="679" cy="310" r="6.65"/><circle cx="681" cy="432" r="6.65"/><circle cx="706" cy="289" r="6.65"/><circle cx="689" cy="242" r="6.65"/><circle cx="683" cy="473" r="6.65"/><circle cx="663" cy="351" r="6.65"/><circle cx="686" cy="284" r="6.65"/><circle cx="660" cy="303" r="6.65"/><circle cx="706" cy="252" r="6.65"/><circle cx="676" cy="395" r="6.65"/><circle cx="691" cy="364" r="6.65"/><circle cx="664" cy="380" r="6.65"/><circle cx="668" cy="284" r="6.65"/><circle cx="701" cy="323" r="6.65"/><circle cx="659" cy="267" r="6.65"/><circle cx="685" cy="345" r="6.65"/><circle cx="675" cy="419" r="6.65"/><circle cx="696" cy="230" r="6.65"/><circle cx="677" cy="244" r="6.65"/><circle cx="679" cy="224" r="6.65"/><circle cx="685" cy="317" r="6.65"/><circle cx="675" cy="333" r="6.65"/><circle cx="678" cy="300" r="6.65"/><circle cx="687" cy="276" r="6.65"/><circle cx="661" cy="256" r="6.65"/><circle cx="662" cy="238" r="6.65"/><circle cx="673" cy="268" r="6.65"/><circle cx="671" cy="225" r="6.65"/></g><path d="M675.3 710.2L675.3 225.7M339.5 661.8L339.5 177.3M1031.4 664.6L1031.4 180.1M695.6 141.2L695.6 131.7M675.3 710.2L438.4 676.1M434.9 675.6L339.5 661.8M675.3 710.2L1031.4 664.6M339.5 661.8L347.4 660.8M358.8 659.3L377.1 657.0M401.9 653.8L405.4 653.4M1031.4 664.6L1010.1 661.5M997.3 659.7L992.8 659.0M971.1 655.9L965.6 655.1M675.3 225.7L339.5 177.3M675.3 225.7L1031.4 180.1M339.5 177.3L465.3 161.2M470.7 160.5L682.2 133.4M691.6 132.2L695.6 131.7M1031.4 180.1L908.8 162.4M901.3 161.4L890.0 159.7M881.1 158.4L848.9 153.8M831.1 151.2L748.5 139.3M740.1 138.1L722.8 135.6M711.4 134.0L695.6 131.7" stroke="#fff" stroke-width="1.1" fill="none"/></g></svg>
<div class="t" style="left:5.3px;top:100.7px;font-size:13.3px;line-height:13.3px;color:#e6e6e6">Ortho</div>
<svg class="a" style="left:10px;top:698px;" width="70" height="60" viewBox="0 0 70 60"><path d="M32.7 44.3V16.2M28.1 20.8l4.6-4.6 5.1 4.6" fill="none" stroke="#6a6aff" stroke-width="1.1"/><path d="M32.7 44.3L12.2 46.3M14.8 43.2l-2.6 3.1 3.7 3.4" fill="none" stroke="#ff1a1a" stroke-width="1.1"/><path d="M32.7 44.3L52.6 46.3M50.3 43.2l2.3 3.1-3.4 3.4" fill="none" stroke="#10f010" stroke-width="1.1"/></svg>
<div class="t" style="left:39.9px;top:700.1px;font-size:13px;line-height:13px;color:#6a6aff">z</div>
<div class="t" style="left:14.3px;top:737.9px;font-size:13px;line-height:13px;color:#ff1a1a">x</div>
<div class="t" style="left:64.2px;top:737.9px;font-size:13px;line-height:13px;color:#10f010">y</div>
<div class="a" style="left:0px;top:0px;width:1848px;height:37px;background:#ebebeb"></div>
<div class="a" style="left:0px;top:37px;width:1848px;height:1px;background:#c4c4c4"></div>
<div class="t" style="left:624.3px;width:600px;text-align:center;top:12.7px;font-size:14.9px;line-height:14.9px;font-weight:bold;color:#3b3b3b">OVITO Basic (Open Visualization Tool) *</div>
<div class="a" style="left:1750.2px;top:7.9px;width:21.6px;height:21.6px;border-radius:50%;background:#dadada"></div>
<div class="a" style="left:1784.2px;top:7.9px;width:21.6px;height:21.6px;border-radius:50%;background:#dadada"></div>
<div class="a" style="left:1818.1000000000001px;top:7.9px;width:21.6px;height:21.6px;border-radius:50%;background:#dadada"></div>
<svg class="a" style="left:1740px;top:0px;" width="108" height="37" viewBox="0 0 108 37"><path d="M17 21.4h8" stroke="#2e2e2e" stroke-width="1.2"/><rect x="51.7" y="17.5" width="4.6" height="4.6" fill="none" stroke="#2e2e2e" stroke-width="1.1"/><path d="M53.3 15.6h5.4v5.2" fill="none" stroke="#5a5a5a" stroke-width="0.9"/><path d="M85.2 15.3l7.7 7.6M92.9 15.3l-7.7 7.6" stroke="#2e2e2e" stroke-width="1.2"/></svg>
<div class="a" style="left:0px;top:38px;width:1848px;height:18px;background:#efefef"></div>
<div class="a" style="left:0px;top:56px;width:1848px;height:1px;background:#dadada"></div>
<div class="t" style="left:11.4px;top:40.2px;font-size:13.3px;line-height:13.3px;"><u>F</u>ile</div>
<div class="t" style="left:46.5px;top:40.2px;font-size:13.3px;line-height:13.3px;"><u>E</u>dit</div>
<div class="t" style="left:84.4px;top:40.2px;font-size:13.3px;line-height:13.3px;"><u>H</u>elp</div>
<div class="a" style="left:0px;top:57px;width:1848px;height:38px;background:linear-gradient(#f7f7f7,#efefef)"></div>
<div class="a" style="left:0px;top:95px;width:1848px;height:1px;background:#c9c9c9"></div>
<svg class="a" style="left:10px;top:66px;" width="22" height="20" viewBox="0 0 22 20"><path d="M1 3.5q0-1.5 1.5-1.5h5l2 2h7q1.5 0 1.5 1.5V8H6.5q-1 0-1.6 1L1.5 15.5z M2.5 17.5l4-7.5q.5-1 1.6-1H21l-4.2 7.6q-.6.9-1.6.9z" fill="#545454"/></svg>
<svg class="a" style="left:43px;top:67px;" width="22" height="18" viewBox="0 0 22 18"><path d="M6 16.5q-5 0-5-4.5 0-4 4-4.6Q6.5 2 11.5 2q5.2 0 6.3 5.4Q21.5 8 21.5 12q0 4.5-5 4.5z" fill="#545454"/><path d="M9.8 6.5h2.6v4.3h2.6l-3.9 4.2-3.9-4.2h2.6z" fill="#f3f3f3"/></svg>
<div class="a" style="left:74.5px;top:67px;width:1px;height:20px;background:#d8d8d8"></div>
<div class="a" style="left:147.5px;top:67px;width:1px;height:20px;background:#d8d8d8"></div>
<div class="a" style="left:220.5px;top:67px;width:1px;height:20px;background:#d8d8d8"></div>
<div class="a" style="left:326.5px;top:67px;width:1px;height:20px;background:#d8d8d8"></div>
<div class="a" style="left:366px;top:67px;width:1px;height:20px;background:#d8d8d8"></div>
<svg class="a" style="left:80px;top:62px;" width="60" height="28" viewBox="0 0 60 28"><path d="M5.5 10.4V20.6q0 .7.7.7h15q.7 0 .7-.7V12.2q0-1.9-1.3-2.5M5.5 10.4V9.6q0-2 2-2H13l2.3 2.8H5.5" fill="none" stroke="#4e4e4e" stroke-width="1.35"/><path d="M18 13.6V7" stroke="#4e4e4e" stroke-width="1.5"/><path d="M15.9 8L18 4.7 20.1 8z" fill="#4e4e4e"/><path d="M38.5 10.4V20.6q0 .7.7.7h15q.7 0 .7-.7V12.2q0-1.9-1.3-2.5M38.5 10.4V9.6q0-2 2-2H46l2.3 2.8H38.5" fill="none" stroke="#4e4e4e" stroke-width="1.35"/><path d="M51.1 6.8V12.5" stroke="#4e4e4e" stroke-width="1.5"/><path d="M49 12.4l2.1 3.2 2.1-3.2z" fill="#4e4e4e"/></svg>
<svg class="a" style="left:156px;top:68px;" width="22" height="14" viewBox="0 0 22 14"><path d="M1 3v8h7.5L6 8.3q2-2 4.6-2 4.2 0 6.6 4.2l2-1.2Q16 3.5 10.6 3.5 7 3.5 4 6.3z" fill="#545454"/></svg>
<svg class="a" style="left:189px;top:68px;" width="22" height="14" viewBox="0 0 22 14"><path d="M21 3v8h-7.5L16 8.3q-2-2-4.6-2-4.2 0-6.6 4.2l-2-1.2Q6 3.5 11.4 3.5 15 3.5 18 6.3z" fill="#9a9a9a"/></svg>
<div class="a" style="left:224px;top:61px;width:32px;height:31px;background:#d9d9d9;border:1px solid #b9b9b9;border-radius:3px"></div>
<svg class="a" style="left:234px;top:66px;" width="14" height="21" viewBox="0 0 14 21"><path d="M2.5 1.5v15l3.7-3.6 3 6.4 2-.9-2.9-6.2h5z" fill="#545454"/></svg>
<svg class="a" style="left:263px;top:66px;" width="20" height="20" viewBox="0 0 20 20"><path d="M10 .9L14 4.8H11.8V6.7H8.2V4.8H6zM10 18.9L14 15.2H11.8V12.9H8.2V15.2H6zM.9 9.8L4.6 6V8H7V11.6H4.6V13.9zM19.1 9.8L15.3 6V8H13V11.6H15.3V13.9z" fill="#545454"/></svg>
<svg class="a" style="left:296px;top:64px;" width="22" height="22" viewBox="0 0 22 22"><path d="M9.5 4.9A7.1 7.1 0 0 0 8.2 18.9" fill="none" stroke="#545454" stroke-width="1.8"/><path d="M11.9 18.9A7.1 7.1 0 0 0 14.2 6.2" fill="none" stroke="#545454" stroke-width="1.8" stroke-dasharray="2.6 1.9"/><path d="M9.3 1.1L13 5.3 9.3 9.7z" fill="#545454"/></svg>
<svg class="a" style="left:335px;top:66px;" width="22" height="20" viewBox="0 0 22 20"><path d="M1.2 6.2q0-1.7 1.7-1.7H6.4L7.4 1.5H14.6L15.6 4.5H19.1q1.7 0 1.7 1.7V17q0 1.7-1.7 1.7H2.9q-1.7 0-1.7-1.7z" fill="#545454"/><circle cx="11" cy="11.2" r="3.9" fill="none" stroke="#f3f3f3" stroke-width="1.3"/></svg>
<div class="a" style="left:370px;top:66px;width:245px;height:22px;background:#fff;border:1px solid #a9a9a9;border-radius:3px"></div>
<div class="t" style="left:373.6px;top:70.1px;font-size:13.5px;line-height:13.5px;color:#8a8a8a;letter-spacing:0.02px">Quick command search (Ctrl+Q)</div>
<div class="t" style="left:1403.0px;top:70.4px;font-size:13.1px;line-height:13.1px;">Pipelines:</div>
<div class="a" style="left:1465.5px;top:61.5px;width:377px;height:31px;background:linear-gradient(#fbfbfb,#efefef);border:1px solid #b3b3b3;border-radius:3px"></div>
<svg class="a" style="left:1477px;top:66px;" width="12" height="22" viewBox="0 0 12 22"><path d="M6 3v16" stroke="#545454" stroke-width="1.6"/><circle cx="6" cy="3.3" r="2.4" fill="#545454"/><circle cx="6" cy="18.7" r="2.4" fill="#545454"/></svg>
<div class="t" style="left:1497.8px;top:70.2px;font-size:13.3px;line-height:13.3px;">fluid.dump [LAMMPS Dump]</div>
<svg class="a" style="left:1825px;top:72px;" width="12" height="8" viewBox="0 0 12 8"><path d="M1.5 2h8l-4 4.3z" fill="#3a3a3a"/></svg>
<div class="a" style="left:1225px;top:123px;width:621px;height:1px;background:#c4c4c4"></div>
<div class="a" style="left:1269px;top:99.5px;width:44px;height:24px;background:linear-gradient(#ececec,#e2e2e2);border:1px solid #c2c2c2;border-bottom:none;border-radius:3px 3px 0 0"></div>
<div class="a" style="left:1312px;top:99.5px;width:44px;height:24px;background:linear-gradient(#ececec,#e2e2e2);border:1px solid #c2c2c2;border-bottom:none;border-radius:3px 3px 0 0"></div>
<div class="a" style="left:1225px;top:97px;width:45px;height:27px;background:#f9f9f9;border:1px solid #c2c2c2;border-bottom:none;border-radius:3px 3px 0 0"></div>
<svg class="a" style="left:1234px;top:101px;" width="16" height="18" viewBox="0 0 16 18"><circle cx="5.6" cy="3.5" r="1.9" fill="none" stroke="#545454" stroke-width="1.4"/><circle cx="5.6" cy="14.5" r="1.9" fill="none" stroke="#545454" stroke-width="1.4"/><circle cx="12.5" cy="5.4" r="1.9" fill="none" stroke="#545454" stroke-width="1.4"/><path d="M5.6 5.4v7.2M5.6 11.3q0-1.2 2-1.5l2.8-.4q2-.3 2-2.1" fill="none" stroke="#545454" stroke-width="1.5"/></svg>
<svg class="a" style="left:1280px;top:103px;" width="18" height="16" viewBox="0 0 18 16"><path d="M1.1 4.6q0-1.5 1.5-1.5H5.8L6.6 1H13.2L14 3.1H15.5q1.5 0 1.5 1.5V13.3q0 1.5-1.5 1.5H2.6q-1.5 0-1.5-1.5z" fill="#545454"/><circle cx="8.9" cy="8.6" r="3.4" fill="none" stroke="#e6e6e6" stroke-width="1.1"/></svg>
<svg class="a" style="left:1325px;top:103px;" width="15" height="16" viewBox="0 0 15 16"><path d="M7.9 1.3l5.4 4.4-5.4 4.4-5.4-4.4z" fill="#545454"/><path d="M2 9.3l5.9 4.5 5.9-4.5" fill="none" stroke="#545454" stroke-width="1.4"/></svg>
<div class="a" style="left:1227.5px;top:127px;width:613px;height:22px;background:linear-gradient(#fcfcfc,#f0f0f0);border:1px solid #b5b5b5;border-radius:3px"></div>
<div class="t" style="left:1232.0px;top:130.9px;font-size:13.7px;line-height:13.7px;">Add modification...</div>
<svg class="a" style="left:1823px;top:133px;" width="12" height="8" viewBox="0 0 12 8"><path d="M1.5 1.8h8l-4 4.3z" fill="#3a3a3a"/></svg>
<div class="a" style="left:1227px;top:153px;width:584px;height:260px;background:#fff;border:1px solid #b9b9b9"></div>
<div class="a" style="left:1228px;top:153.6px;width:582px;height:11.400000000000006px;background:#c9c9c9"></div>
<div class="t" style="left:1219.0px;width:600px;text-align:center;top:154.8px;font-size:10.2px;line-height:10.2px;color:#2a2ae6">Visual elements</div>
<div class="a" style="left:1228px;top:213.3px;width:582px;height:10.699999999999989px;background:#c9c9c9"></div>
<div class="t" style="left:1219.0px;width:600px;text-align:center;top:214.5px;font-size:10.2px;line-height:10.2px;color:#2a2ae6">Modifications</div>
<div class="a" style="left:1228px;top:296.4px;width:582px;height:10.600000000000023px;background:#c9c9c9"></div>
<div class="t" style="left:1219.0px;width:600px;text-align:center;top:297.6px;font-size:10.2px;line-height:10.2px;color:#2a2ae6">Data source</div>
<div class="a" style="left:1231px;top:170.0px;width:14px;height:14px;background:#fff;border:1px solid #9c9c9c;border-radius:1px"></div>
<svg class="a" style="left:1231px;top:170.0px;" width="14" height="14" viewBox="0 0 14 14"><path d="M3.2 7.2l2.6 3.6 4.8-8" fill="none" stroke="#111" stroke-width="1.9"/></svg>
<div class="t" style="left:1279.5px;top:170.2px;font-size:13.0px;line-height:13.0px;">Particles</div>
<div class="a" style="left:1231px;top:194.0px;width:14px;height:14px;background:#fff;border:1px solid #9c9c9c;border-radius:1px"></div>
<svg class="a" style="left:1231px;top:194.0px;" width="14" height="14" viewBox="0 0 14 14"><path d="M3.2 7.2l2.6 3.6 4.8-8" fill="none" stroke="#111" stroke-width="1.9"/></svg>
<div class="t" style="left:1279.5px;top:193.7px;font-size:13.54px;line-height:13.54px;">Simulation cell</div>
<div class="a" style="left:1231px;top:229.1px;width:14px;height:14px;background:#fff;border:1px solid #9c9c9c;border-radius:1px"></div>
<svg class="a" style="left:1231px;top:229.1px;" width="14" height="14" viewBox="0 0 14 14"><path d="M3.2 7.2l2.6 3.6 4.8-8" fill="none" stroke="#111" stroke-width="1.9"/></svg>
<div class="t" style="left:1279.5px;top:229.0px;font-size:13.33px;line-height:13.33px;">Cluster analysis</div>
<div class="a" style="left:1231px;top:253.0px;width:14px;height:14px;background:#fff;border:1px solid #9c9c9c;border-radius:1px"></div>
<svg class="a" style="left:1231px;top:253.0px;" width="14" height="14" viewBox="0 0 14 14"><path d="M3.2 7.2l2.6 3.6 4.8-8" fill="none" stroke="#111" stroke-width="1.9"/></svg>
<div class="t" style="left:1279.5px;top:252.9px;font-size:13.3px;line-height:13.3px;">Expression selection</div>
<div class="a" style="left:1231px;top:277.0px;width:14px;height:14px;background:#fff;border:1px solid #9c9c9c;border-radius:1px"></div>
<svg class="a" style="left:1231px;top:277.0px;" width="14" height="14" viewBox="0 0 14 14"><path d="M3.2 7.2l2.6 3.6 4.8-8" fill="none" stroke="#111" stroke-width="1.9"/></svg>
<div class="t" style="left:1279.5px;top:276.8px;font-size:13.5px;line-height:13.5px;">Wrap at periodic boundaries</div>
<div class="a" style="left:1228px;top:307px;width:582px;height:23.5px;background:#308cc6"></div>
<div class="t" style="left:1259.0px;top:311.9px;font-size:13.3px;line-height:13.3px;color:#fff">fluid.dump [LAMMPS Dump]</div>
<svg class="a" style="left:1266px;top:339px;" width="14" height="10" viewBox="0 0 14 10"><path d="M1 5.2h10.5M8.5 2.8l2.8 2.4-2.8 2.4" fill="none" stroke="#222" stroke-width="1.1"/></svg>
<div class="t" style="left:1280.5px;top:336.1px;font-size:13.4px;line-height:13.4px;">Particle types</div>
<svg class="a" style="left:1266px;top:363px;" width="14" height="10" viewBox="0 0 14 10"><path d="M1 5.2h10.5M8.5 2.8l2.8 2.4-2.8 2.4" fill="none" stroke="#222" stroke-width="1.1"/></svg>
<div class="t" style="left:1280.5px;top:359.5px;font-size:13.65px;line-height:13.65px;">Simulation cell</div>
<div class="a" style="left:1510px;top:414.5px;width:30px;height:1px;background:repeating-linear-gradient(90deg,#b0b0b0 0 1px,transparent 1px 3px)"></div>
<svg class="a" style="left:1820px;top:157px;" width="18" height="21" viewBox="0 0 18 21"><path d="M6 1.5h6v1.5h4.5v2.2h-15V3H6z" fill="#8a8a8a"/><path d="M2.5 6.3h13l-1 12.5q-.1 1.2-1.3 1.2H4.8q-1.2 0-1.3-1.2z" fill="#8a8a8a"/></svg>
<div class="a" style="left:1819px;top:188.5px;width:21px;height:1px;background:#d6d6d6"></div>
<svg class="a" style="left:1820px;top:199px;" width="18" height="14" viewBox="0 0 18 14"><path d="M3.5 10.5l5.5-5.5 5.5 5.5" fill="none" stroke="#8a8a8a" stroke-width="1.7"/></svg>
<svg class="a" style="left:1820px;top:231px;" width="18" height="14" viewBox="0 0 18 14"><path d="M3.5 3.5l5.5 5.5 5.5-5.5" fill="none" stroke="#8a8a8a" stroke-width="1.7"/></svg>
<div class="a" style="left:1819px;top:259.5px;width:21px;height:1px;background:#d6d6d6"></div>
<svg class="a" style="left:1818px;top:270px;" width="22" height="16" viewBox="0 0 22 16"><path d="M2 2.5h18M7 8h13M7 13.5h13" stroke="#8a8a8a" stroke-width="1.6"/></svg>
<svg class="a" style="left:1819px;top:299px;" width="20" height="22" viewBox="0 0 20 22"><path d="M4.5 18V4.5q0-1.5 1.5-1.5h11" fill="none" stroke="#8a8a8a" stroke-width="1.5"/><rect x="7.5" y="7" width="10.5" height="12" rx="1.5" fill="none" stroke="#8a8a8a" stroke-width="1.5"/></svg>
<svg class="a" style="left:1819px;top:330px;" width="20" height="22" viewBox="0 0 20 22"><path d="M7 3h1.5q.3-2 1.5-2t1.5 2H13v2.5H7z" fill="#474747"/><path d="M5.5 3.5H3.8q-1.3 0-1.3 1.3v14q0 1.3 1.3 1.3h12.4q1.3 0 1.3-1.3v-14q0-1.3-1.3-1.3h-1.7v3.3h-9z" fill="#474747"/><path d="M5.5 10h9M5.5 13h9M5.5 16h6" stroke="#efefef" stroke-width="1.4"/></svg>
<div class="a" style="left:1227px;top:419px;width:618px;height:18px;background:#808080;border:1px solid #111"></div>
<div class="a" style="left:1827px;top:419px;width:18px;height:18px;background:#4b7e4b;border:1px solid #111;border-right:none"></div>
<div class="t" style="left:1227.0px;width:600px;text-align:center;top:421.2px;font-size:13.65px;line-height:13.65px;color:#f2f2f2">External file</div>
<div class="t" style="left:1833.6px;top:422.3px;font-size:12px;line-height:12px;color:#f0f0f0">?</div>
<div class="a" style="left:1227px;top:437px;width:618px;height:368px;border:1px solid #aaaaaa;border-top:none"></div>
<svg class="a" style="left:1235px;top:446px;" width="23" height="19" viewBox="0 0 23 19"><path d="M1 3q0-1.5 1.5-1.5h5l2 2h7.5q1.5 0 1.5 1.5v2.7H7q-1 0-1.6 1L1.5 15.5z M2.5 17.3l4-7.4q.5-1 1.6-1H22l-4.2 7.6q-.6.8-1.6.8z" fill="#545454"/></svg>
<svg class="a" style="left:1269px;top:448px;" width="22" height="17" viewBox="0 0 22 17"><path d="M6 15.5q-5 0-5-4.3 0-3.8 4-4.4Q6.5 1.5 11.5 1.5q5.2 0 6.3 5.3 3.7.6 3.7 4.4 0 4.3-5 4.3z" fill="#545454"/><path d="M9.8 6h2.6v4.2H15l-3.9 4-3.9-4h2.6z" fill="#efefef"/></svg>
<svg class="a" style="left:1301px;top:447px;" width="24" height="19" viewBox="0 0 24 19"><path d="M15.65 2.68A7.3 7.3 0 0 0 4.7 9.2M8 15.1A7.3 7.3 0 0 0 19.2 8.8" fill="none" stroke="#545454" stroke-width="1.9"/><path d="M1.2 9.2h7.3L5 12.6zM15.4 8.8h7.3L19.1 5.3z" fill="#545454"/></svg>
<svg class="a" style="left:1334px;top:443px;" width="26" height="26" viewBox="0 0 26 26"><path d="M6.9 2.1h16v17.9h-16z" fill="#545454"/><path d="M8.4 2.1h2.5v1.9H8.4zM8.4 5.9h2.5v2.7H8.4zM8.4 10.3h2.5v2.4H8.4zM8.4 14.3h2.5v2.5H8.4zM8.4 18.3h2.5v1.7H8.4zM19 2.1h2.5v1.9H19zM19 5.9h2.5v2.7H19zM19 10.3h2.5v2.4H19zM19 14.3h2.5v2.5H19zM19 18.3h2.5v1.7H19z" fill="#efefef"/><circle cx="6.4" cy="18.9" r="6.6" fill="#efefef"/><path d="M8.6 15.8A3.8 3.8 0 0 0 3 18.4M4.5 22.2A3.8 3.8 0 0 0 10 19.6" fill="none" stroke="#545454" stroke-width="1.3"/><path d="M.9 18.4h4.2l-2.1 2.1zM7.9 19.6h4.2L10 17.5z" fill="#545454"/></svg>
<svg class="a" style="left:1368px;top:446px;" width="22" height="19" viewBox="0 0 22 19"><path d="M1.9 10.2v7.6h9.7M5.9 6.2v7.8h9.8" fill="none" stroke="#545454" stroke-width="1.9"/><rect x="10.4" y="2.2" width="10.4" height="8.3" rx="1.7" fill="none" stroke="#545454" stroke-width="1.9"/><path d="M10.4 3.2h10.4v2.8H10.4z" fill="#545454"/></svg>
<div class="t" style="left:1231.6px;top:476.4px;font-size:13.17px;line-height:13.17px;">Data source</div>
<div class="a" style="left:1232px;top:494.5px;width:609px;height:54px;background:#ebebeb;border:1px solid #d6d6d6;border-radius:3px"></div>
<div class="t" style="left:1238.3px;top:502.9px;font-size:13.58px;line-height:13.58px;">Current file:</div>
<div class="a" style="left:1355px;top:500px;width:479px;height:20px;background:#fff"></div>
<div class="t" style="left:1357.3px;top:502.7px;font-size:13.8px;line-height:13.8px;">fluid.dump</div>
<div class="t" style="left:1238.3px;top:524.8px;font-size:13.47px;line-height:13.47px;">Directory:</div>
<div class="a" style="left:1355px;top:522px;width:479px;height:20px;background:#fff"></div>
<div class="t" style="left:1357.2px;top:524.6px;font-size:13.67px;line-height:13.67px;">/home/willem/Projects/fivefold-hard-spheres/results/coli/betap13.40/bug-report</div>
<div class="t" style="left:1231.4px;top:554.5px;font-size:13.0px;line-height:13.0px;">File sequence</div>
<div class="a" style="left:1232px;top:571.5px;width:609px;height:55.5px;background:#ebebeb;border:1px solid #d6d6d6;border-radius:3px"></div>
<div class="t" style="left:1238.3px;top:581.3px;font-size:13.5px;line-height:13.5px;">Search pattern:</div>
<div class="a" style="left:1355.5px;top:577.5px;width:478.5px;height:21.5px;background:#fff;border:1px solid #a8a8a8;border-radius:3px"></div>
<div class="t" style="left:1358.5px;top:581.0px;font-size:13.8px;line-height:13.8px;">fluid.dump</div>
<div class="a" style="left:1238px;top:604px;width:14px;height:14px;background:#fff;border:1px solid #9c9c9c;border-radius:1px"></div>
<div class="t" style="left:1257.5px;top:603.7px;font-size:13.63px;line-height:13.63px;">auto-generate</div>
<div class="t" style="left:1355.0px;top:605.9px;font-size:10.2px;line-height:10.2px;">Found 1 matching file</div>
<div class="t" style="left:1231.4px;top:632.7px;font-size:13.25px;line-height:13.25px;">Trajectory</div>
<div class="a" style="left:1232px;top:651px;width:609px;height:72.5px;background:#ebebeb;border:1px solid #d6d6d6;border-radius:3px"></div>
<div class="t" style="left:1238.3px;top:661.1px;font-size:13.5px;line-height:13.5px;">Current frame:</div>
<div class="a" style="left:1355.5px;top:656.5px;width:478.5px;height:23px;background:linear-gradient(#f3f3f3,#ececec);border:1px solid #c9c9c9;border-radius:3px"></div>
<div class="t" style="left:1360.0px;top:660.8px;font-size:13.8px;line-height:13.8px;color:#b4b4b4">fluid.dump</div>
<svg class="a" style="left:1816px;top:664px;" width="12" height="8" viewBox="0 0 12 8"><path d="M1.5 1.8h8l-4 4.3z" fill="#b4b4b4"/></svg>
<div class="t" style="left:1355.0px;top:683.2px;font-size:10.15px;line-height:10.15px;">Showing frame 1 of 1</div>
<div class="t" style="left:1238.3px;top:699.2px;font-size:13.4px;line-height:13.4px;">Playback ratio:</div>
<div class="t" style="left:1355.5px;top:699.1px;font-size:13.5px;line-height:13.5px;">1 / 1</div>
<div class="a" style="left:1754.5px;top:695px;width:79px;height:21.5px;background:linear-gradient(#f6f6f6,#ececec);border:1px solid #c9c9c9;border-radius:3px"></div>
<div class="t" style="left:1494.0px;width:600px;text-align:center;top:699.4px;font-size:13.1px;line-height:13.1px;color:#b0b0b0">Change...</div>
<div class="t" style="left:1231.4px;top:729.2px;font-size:13.1px;line-height:13.1px;">Status</div>
<div class="a" style="left:1232px;top:746px;width:609px;height:54.5px;background:#ebebeb;border:1px solid #d6d6d6;border-radius:3px"></div>
<div class="a" style="left:1238px;top:752.5px;width:596px;height:41.5px;background:#efefef;border:1px solid #a3a3a3"></div>
<div class="t" style="left:1247.4px;top:752.3px;font-size:13.8px;line-height:13.8px;">13500 particles at timestep 0</div>
<div class="a" style="left:1227px;top:807px;width:618px;height:18px;background:#808080;border:1px solid #111"></div>
<div class="a" style="left:1827px;top:807px;width:18px;height:18px;background:#4b7e4b;border:1px solid #111;border-right:none"></div>
<div class="t" style="left:1227.0px;width:600px;text-align:center;top:809.8px;font-size:13.0px;line-height:13.0px;color:#f2f2f2">LAMMPS dump reader</div>
<div class="t" style="left:1833.6px;top:810.3px;font-size:12px;line-height:12px;color:#f0f0f0">?</div>
<div class="a" style="left:1227px;top:825px;width:618px;height:194px;border:1px solid #aaaaaa;border-top:none"></div>
<div class="t" style="left:1231.6px;top:830.0px;font-size:13.3px;line-height:13.3px;">Options</div>
<div class="a" style="left:1232.5px;top:847.5px;width:608px;height:58px;background:#ebebeb;border:1px solid #d6d6d6;border-radius:3px"></div>
<div class="a" style="left:1238.5px;top:856px;width:14px;height:14px;background:#fff;border:1px solid #9c9c9c;border-radius:1px"></div>
<div class="t" style="left:1257.4px;top:856.2px;font-size:13.65px;line-height:13.65px;">File contains multiple timesteps</div>
<div class="a" style="left:1238.5px;top:882px;width:14px;height:14px;background:#fff;border:1px solid #9c9c9c;border-radius:1px"></div>
<div class="t" style="left:1257.4px;top:882.3px;font-size:13.47px;line-height:13.47px;">Sort particles by ID</div>
<div class="t" style="left:1231.6px;top:911.0px;font-size:13.15px;line-height:13.15px;">File columns</div>
<div class="a" style="left:1232.5px;top:928.5px;width:608px;height:86px;background:#ebebeb;border:1px solid #d6d6d6;border-radius:3px"></div>
<div class="a" style="left:1238px;top:937px;width:14px;height:14px;border-radius:50%;background:#fff;border:1px solid #9c9c9c"></div>
<div class="a" style="left:1242px;top:941px;width:6px;height:6px;border-radius:50%;background:#333"></div>
<div class="t" style="left:1258.0px;top:936.9px;font-size:13.7px;line-height:13.7px;">Automatic mapping</div>
<div class="a" style="left:1238px;top:963px;width:14px;height:14px;border-radius:50%;background:#fff;border:1px solid #9c9c9c"></div>
<div class="t" style="left:1258.0px;top:962.9px;font-size:13.66px;line-height:13.66px;">User-defined mapping to particle properties</div>
<div class="a" style="left:1238.5px;top:986px;width:595px;height:21.5px;background:linear-gradient(#fafafa,#ededed);border:1px solid #a9a9a9;border-radius:3px"></div>
<div class="t" style="left:1236.0px;width:600px;text-align:center;top:990.3px;font-size:13.64px;line-height:13.64px;">Edit column mapping...</div>
<div class="a" style="left:443px;top:786px;width:76px;height:23px;background:linear-gradient(#e9e9e9,#dedede);border:1px solid #c0c0c0;border-bottom:none;border-radius:3px 3px 0 0"></div>
<div class="a" style="left:518px;top:786px;width:127px;height:23px;background:linear-gradient(#e9e9e9,#dedede);border:1px solid #c0c0c0;border-bottom:none;border-radius:3px 3px 0 0"></div>
<div class="a" style="left:644.5px;top:784.5px;width:93px;height:25px;background:#f8f8f8;border:1px solid #c0c0c0;border-bottom:none;border-radius:3px 3px 0 0"></div>
<div class="t" style="left:455.5px;top:791.0px;font-size:13.3px;line-height:13.3px;">Particles</div>
<div class="t" style="left:530.5px;top:790.8px;font-size:13.6px;line-height:13.6px;">Global Attributes</div>
<div class="t" style="left:656.4px;top:790.1px;font-size:13.3px;line-height:13.3px;">Data Tables</div>
<svg class="a" style="left:1200px;top:790px;" width="14" height="10" viewBox="0 0 14 10"><path d="M2.5 2.5l4.5 4.5 4.5-4.5" fill="none" stroke="#555" stroke-width="1.4"/></svg>
<div class="a" style="left:1px;top:810px;width:279.5px;height:177px;background:#fff;border:1px solid #b5b5b5"></div>
<div class="a" style="left:2px;top:811px;width:277.5px;height:36px;background:#308cc6"></div>
<div class="t" style="left:5.0px;top:814.8px;font-size:14.2px;line-height:14.2px;color:#fff;font-weight:bold">Cluster list</div>
<div class="t" style="left:5.0px;top:828.6px;font-size:13.45px;line-height:13.45px;color:#fff;font-style:italic">Cluster analysis</div>
<div class="a" style="left:282px;top:890px;width:1px;height:24px;background:repeating-linear-gradient(#b5b5b5 0 1px,transparent 1px 3px)"></div>
<div class="a" style="left:284px;top:810px;width:905px;height:176.5px;background:#fff;border:1px solid #b5b5b5"></div>
<div class="a" style="left:285px;top:811.5px;width:903.5px;height:17px;background:#efefef"></div>
<div class="a" style="left:285px;top:811.5px;width:473px;height:17px;background:linear-gradient(#fbfbfb,#ececec)"></div>
<div class="a" style="left:285px;top:828.5px;width:13px;height:157.5px;background:#ededed"></div>
<div class="a" style="left:285px;top:828px;width:473px;height:1px;background:#c6c6c6"></div>
<div class="a" style="left:297.5px;top:811.5px;width:1px;height:47px;background:#c9c9c9"></div>
<div class="a" style="left:397.2px;top:811.5px;width:1px;height:47px;background:#c9c9c9"></div>
<div class="a" style="left:497.3px;top:811.5px;width:1px;height:47px;background:#c9c9c9"></div>
<div class="a" style="left:757.5px;top:811.5px;width:1px;height:17px;background:#c9c9c9"></div>
<div class="a" style="left:285px;top:858px;width:473px;height:1px;background:#c9c9c9"></div>
<div class="a" style="left:498px;top:829px;width:260px;height:29px;background:#308cc6"></div>
<div class="a" style="left:298px;top:811px;width:99px;height:17px;overflow:hidden"><div class="t" style="left:-250.5px;width:600px;text-align:center;top:1.4px;font-size:14.4px;line-height:14.4px;">Cluster Identifier</div>
</div><div class="t" style="left:412.7px;top:813.3px;font-size:13.3px;line-height:13.3px;">Cluster Size</div>
<div class="t" style="left:577.9px;top:812.3px;font-size:13.95px;line-height:13.95px;font-weight:bold">Center of Mass</div>
<div class="t" style="left:286.6px;top:836.4px;font-size:13.8px;line-height:13.8px;font-weight:bold">0</div>
<div class="t" style="left:301.4px;top:835.9px;font-size:13.3px;line-height:13.3px;">1</div>
<div class="t" style="left:401.2px;top:835.8px;font-size:13.5px;line-height:13.5px;">4152</div>
<div class="t" style="left:501.0px;top:835.6px;font-size:13.69px;line-height:13.69px;color:#fff">8.96578 10.8126 -7.40556</div>
<svg class="a" style="left:1193px;top:815px;" width="22" height="16" viewBox="0 0 22 16"><path d="M2 14l6.5-7 4.5 4.5L20.5 3" fill="none" stroke="#545454" stroke-width="1.9"/></svg>
<div class="a" style="left:1189.5px;top:839.5px;width:29.5px;height:28px;background:#dadada;border:1px solid #bcbcbc;border-radius:3px"></div>
<svg class="a" style="left:1194px;top:844px;" width="20" height="18" viewBox="0 0 20 18"><path d="M1.5 1.5h17v3h-17z" fill="#545454"/><path d="M1.5 6.3h4.2v10.2H1.5zM7.9 6.3h4.2v10.2H7.9zM14.3 6.3h4.2v10.2h-4.2z" fill="#545454"/></svg>
<div class="a" style="left:1194px;top:872px;width:21px;height:1px;background:#d6d6d6"></div>
<svg class="a" style="left:1193px;top:878px;" width="22" height="22" viewBox="0 0 22 22"><path d="M2.5 3.5q0-1.5 1.5-1.5h11.3l4.2 4.2v11.8q0 1.5-1.5 1.5H4q-1.5 0-1.5-1.5z" fill="#545454"/><path d="M5.5 4h8v4.3h-8z" fill="#efefef"/><circle cx="10.8" cy="13.5" r="2.3" fill="#efefef"/></svg>
<div class="a" style="left:0px;top:994px;width:1219px;height:1px;background:#c9c9c9"></div>
<div class="a" style="left:962px;top:996px;width:1px;height:57px;background:#d5d5d5"></div>
<div class="a" style="left:1128px;top:996px;width:1px;height:57px;background:#d5d5d5"></div>
<svg class="a" style="left:970px;top:1001px;" width="18" height="19" viewBox="0 0 18 19"><path d="M2.5 2.5v14" stroke="#8c8c8c" stroke-width="1.7"/><path d="M15.5 2.5v14L5.5 9.5z" fill="#8c8c8c"/></svg>
<div class="a" style="left:997.5px;top:1003px;width:1px;height:16px;background:#dcdcdc"></div>
<svg class="a" style="left:1004px;top:1002px;" width="21" height="17" viewBox="0 0 21 17"><path d="M10.5 1.5v14L1 8.5zM20 1.5v14l-9.5-7z" fill="#8c8c8c"/></svg>
<svg class="a" style="left:1038px;top:1002px;" width="16" height="17" viewBox="0 0 16 17"><path d="M2.5 1.5v14l11-7z" fill="#8c8c8c"/></svg>
<svg class="a" style="left:1065px;top:1002px;" width="21" height="17" viewBox="0 0 21 17"><path d="M1 1.5v14l9.5-7zM10.5 1.5v14l9.5-7z" fill="#8c8c8c"/></svg>
<div class="a" style="left:1094.5px;top:1003px;width:1px;height:16px;background:#dcdcdc"></div>
<svg class="a" style="left:1103px;top:1001px;" width="18" height="19" viewBox="0 0 18 19"><path d="M15.5 2.5v14" stroke="#8c8c8c" stroke-width="1.7"/><path d="M2.5 2.5v14l10-7z" fill="#8c8c8c"/></svg>
<svg class="a" style="left:968px;top:1032px;" width="20" height="15" viewBox="0 0 20 15"><circle cx="5.5" cy="7.5" r="4.5" fill="#8c8c8c"/><circle cx="5.5" cy="7.5" r="1.8" fill="#efefef"/><path d="M9 6h10v3h-2v3.5h-2.5V9h-1.5v2.5h-2.5V9H9z" fill="#8c8c8c"/></svg>
<div class="a" style="left:994px;top:1029px;width:86px;height:21.5px;background:#f0f0f0;border:1px solid #c9c9c9;border-radius:3px"></div>
<div class="t" style="left:998.0px;top:1033.7px;font-size:13.3px;line-height:13.3px;color:#c0c0c0">0</div>
<div class="a" style="left:1081px;top:1029.5px;width:14.5px;height:10px;background:linear-gradient(#f8f8f8,#ececec);border:1px solid #cfcfcf;border-radius:3px 3px 0 0"></div>
<div class="a" style="left:1081px;top:1040.3px;width:14.5px;height:10px;background:linear-gradient(#f8f8f8,#ececec);border:1px solid #cfcfcf;border-radius:0 0 3px 3px"></div>
<svg class="a" style="left:1081px;top:1029px;" width="15" height="22" viewBox="0 0 15 22"><path d="M2.8 7l4.5-4.3L11.9 7z" fill="#bcbcbc"/><path d="M2.8 13.8h9.1L7.3 19.2z" fill="#bcbcbc"/></svg>
<svg class="a" style="left:1101px;top:1030px;" width="20" height="20" viewBox="0 0 20 20"><circle cx="10" cy="10" r="7.8" fill="none" stroke="#545454" stroke-width="1.7"/><path d="M10 5v5.3l3.2 3" fill="none" stroke="#545454" stroke-width="1.7"/></svg>
<svg class="a" style="left:1133px;top:1001px;" width="22" height="22" viewBox="0 0 22 22"><circle cx="8.5" cy="8.5" r="6.3" fill="none" stroke="#545454" stroke-width="2"/><path d="M13 13l6.5 6.5" stroke="#545454" stroke-width="2.4"/></svg>
<svg class="a" style="left:1163px;top:999px;" width="21" height="23" viewBox="0 0 21 23"><path d="M4.5 12V7q0-1.3 1.2-1.3T7 7v4V3.5q0-1.3 1.3-1.3t1.3 1.3V10V2.3Q9.6 1 10.9 1t1.3 1.3V10V3.5q0-1.3 1.3-1.3t1.3 1.3V12l1.7-2.6q.8-1.2 1.9-.6 1 .6.3 1.8l-3.2 6.8q-1.8 3.9-5.6 3.9-4.7 0-5.5-5z" fill="#545454"/></svg>
<svg class="a" style="left:1192px;top:1001px;" width="25" height="19" viewBox="0 0 25 19"><ellipse cx="12.5" cy="9.5" rx="10.8" ry="6.3" fill="none" stroke="#545454" stroke-width="1.6"/><circle cx="12.5" cy="9.5" r="3.9" fill="#545454"/><path d="M20.5 3.5l2.8 2.5-3.5 1.2M4.5 15.5l-2.8-2.5 3.5-1.2" fill="none" stroke="#545454" stroke-width="1.3"/></svg>
<svg class="a" style="left:1131px;top:1027px;" width="26" height="26" viewBox="0 0 26 26"><path d="M2.3 5V2.5h2.5M21.4 2.5h2.5V5M23.9 20.6v2.5h-2.5M4.8 23.1H2.3v-2.5" fill="none" stroke="#545454" stroke-width="1.3"/><path d="M13.2 5.7l8.3 3.8V17l-8.3 3.8L4.9 17V9.5z" fill="#545454"/><path d="M4.9 9.5l8.3 3.8 8.3-3.8M13.2 13.3v7.5" fill="none" stroke="#efefef" stroke-width="1.3"/></svg>
<svg class="a" style="left:1163px;top:1029px;" width="22" height="23" viewBox="0 0 22 23"><path d="M2 1.5l18 10-18 10" fill="none" stroke="#545454" stroke-width="1.8"/><path d="M11 6.5v10" stroke="#545454" stroke-width="1.5"/></svg>
<div class="a" style="left:1190px;top:1026px;width:29px;height:28px;background:#dadada;border:1px solid #bcbcbc;border-radius:3px"></div>
<svg class="a" style="left:1195px;top:1031px;" width="20" height="19" viewBox="0 0 20 19"><path d="M2 2l5 5M2 2h4.5M2 2v4.5M18 2l-5 5M18 2h-4.5M18 2v4.5M2 17l5-5M2 17h4.5M2 17v-4.5M18 17l-5-5M18 17h-4.5M18 17v-4.5" fill="none" stroke="#545454" stroke-width="1.8"/></svg>
<div class="a" style="left:0;top:0;width:1848px;height:1055px;border:1px solid #1a1a1a;pointer-events:none"></div>
</body></html>
